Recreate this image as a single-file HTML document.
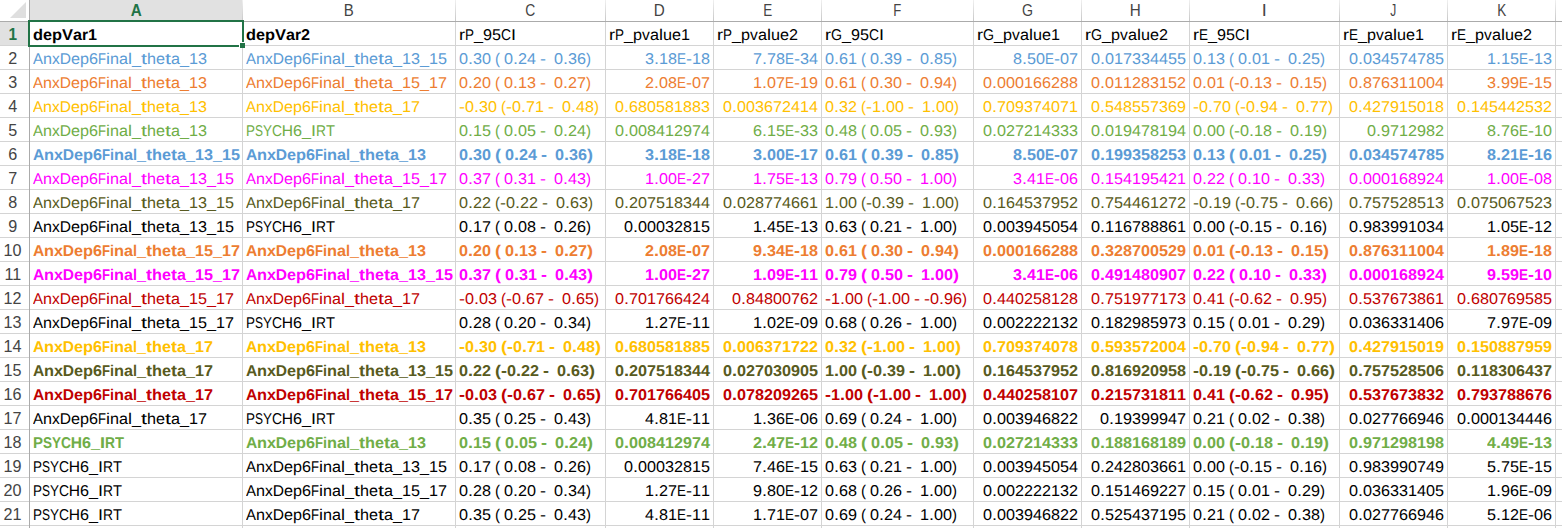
<!DOCTYPE html>
<html><head><meta charset="utf-8"><style>
html,body{margin:0;padding:0;background:#fff;}
body{width:1562px;height:528px;overflow:hidden;position:relative;font-family:"Liberation Sans",sans-serif;}
.a{position:absolute;}
.g{position:absolute;background:#D4D4D4;}
.t{position:absolute;white-space:pre;text-rendering:geometricPrecision;font-size:15.6px;line-height:28.0px;height:24px;}
.t i{position:absolute;top:0;font-style:normal;transform-origin:0 50%;}
.kblue{color:#5B9BD5}
.korange{color:#ED7D31}
.kgold{color:#FFC000}
.kgreen{color:#70AD47}
.kmag{color:#FF00FF}
.kolive{color:#585A20}
.kred{color:#C00000}
.kblack{color:#000000}
.b{font-weight:bold;}
.ch{position:absolute;top:0;height:21px;line-height:21px;text-align:center;font-size:17px;color:#444;}
.rh{position:absolute;left:0;width:25px;height:24px;line-height:26px;text-align:center;font-size:17px;color:#444;}
</style></head><body>

<div class="a" style="left:30px;top:0;width:212px;height:21px;background:#E1E1E1"></div>
<div class="a" style="left:0;top:22px;width:29px;height:23px;background:#E1E1E1"></div>
<svg class="a" style="left:0;top:0" width="29" height="21"><polygon points="26,2 26,18 10,18" fill="#DFDFDF"/></svg>
<div class="g" style="left:242px;top:22px;width:1px;height:506px"></div>
<div class="g" style="left:455px;top:22px;width:1px;height:506px"></div>
<div class="g" style="left:605px;top:22px;width:1px;height:506px"></div>
<div class="g" style="left:713px;top:22px;width:1px;height:506px"></div>
<div class="g" style="left:821px;top:22px;width:1px;height:506px"></div>
<div class="g" style="left:973px;top:22px;width:1px;height:506px"></div>
<div class="g" style="left:1081px;top:22px;width:1px;height:506px"></div>
<div class="g" style="left:1189px;top:22px;width:1px;height:506px"></div>
<div class="g" style="left:1339px;top:22px;width:1px;height:506px"></div>
<div class="g" style="left:1447px;top:22px;width:1px;height:506px"></div>
<div class="g" style="left:1555px;top:22px;width:1px;height:506px"></div>
<div class="g" style="left:30px;top:45px;width:1532px;height:1px"></div>
<div class="g" style="left:0;top:45px;width:29px;height:1px;background:#D4D4D4"></div>
<div class="g" style="left:30px;top:69px;width:1532px;height:1px"></div>
<div class="g" style="left:0;top:69px;width:29px;height:1px;background:#D4D4D4"></div>
<div class="g" style="left:30px;top:93px;width:1532px;height:1px"></div>
<div class="g" style="left:0;top:93px;width:29px;height:1px;background:#D4D4D4"></div>
<div class="g" style="left:30px;top:117px;width:1532px;height:1px"></div>
<div class="g" style="left:0;top:117px;width:29px;height:1px;background:#D4D4D4"></div>
<div class="g" style="left:30px;top:141px;width:1532px;height:1px"></div>
<div class="g" style="left:0;top:141px;width:29px;height:1px;background:#D4D4D4"></div>
<div class="g" style="left:30px;top:165px;width:1532px;height:1px"></div>
<div class="g" style="left:0;top:165px;width:29px;height:1px;background:#D4D4D4"></div>
<div class="g" style="left:30px;top:189px;width:1532px;height:1px"></div>
<div class="g" style="left:0;top:189px;width:29px;height:1px;background:#D4D4D4"></div>
<div class="g" style="left:30px;top:213px;width:1532px;height:1px"></div>
<div class="g" style="left:0;top:213px;width:29px;height:1px;background:#D4D4D4"></div>
<div class="g" style="left:30px;top:237px;width:1532px;height:1px"></div>
<div class="g" style="left:0;top:237px;width:29px;height:1px;background:#D4D4D4"></div>
<div class="g" style="left:30px;top:261px;width:1532px;height:1px"></div>
<div class="g" style="left:0;top:261px;width:29px;height:1px;background:#D4D4D4"></div>
<div class="g" style="left:30px;top:285px;width:1532px;height:1px"></div>
<div class="g" style="left:0;top:285px;width:29px;height:1px;background:#D4D4D4"></div>
<div class="g" style="left:30px;top:309px;width:1532px;height:1px"></div>
<div class="g" style="left:0;top:309px;width:29px;height:1px;background:#D4D4D4"></div>
<div class="g" style="left:30px;top:333px;width:1532px;height:1px"></div>
<div class="g" style="left:0;top:333px;width:29px;height:1px;background:#D4D4D4"></div>
<div class="g" style="left:30px;top:357px;width:1532px;height:1px"></div>
<div class="g" style="left:0;top:357px;width:29px;height:1px;background:#D4D4D4"></div>
<div class="g" style="left:30px;top:381px;width:1532px;height:1px"></div>
<div class="g" style="left:0;top:381px;width:29px;height:1px;background:#D4D4D4"></div>
<div class="g" style="left:30px;top:405px;width:1532px;height:1px"></div>
<div class="g" style="left:0;top:405px;width:29px;height:1px;background:#D4D4D4"></div>
<div class="g" style="left:30px;top:429px;width:1532px;height:1px"></div>
<div class="g" style="left:0;top:429px;width:29px;height:1px;background:#D4D4D4"></div>
<div class="g" style="left:30px;top:453px;width:1532px;height:1px"></div>
<div class="g" style="left:0;top:453px;width:29px;height:1px;background:#D4D4D4"></div>
<div class="g" style="left:30px;top:477px;width:1532px;height:1px"></div>
<div class="g" style="left:0;top:477px;width:29px;height:1px;background:#D4D4D4"></div>
<div class="g" style="left:30px;top:501px;width:1532px;height:1px"></div>
<div class="g" style="left:0;top:501px;width:29px;height:1px;background:#D4D4D4"></div>
<div class="g" style="left:30px;top:525px;width:1532px;height:1px"></div>
<div class="g" style="left:0;top:525px;width:29px;height:1px;background:#D4D4D4"></div>
<div class="a" style="left:242px;top:0;width:1px;height:21px;background:linear-gradient(#F0F0F0,#C8C8C8)"></div>
<div class="a" style="left:455px;top:0;width:1px;height:21px;background:linear-gradient(#F0F0F0,#C8C8C8)"></div>
<div class="a" style="left:605px;top:0;width:1px;height:21px;background:linear-gradient(#F0F0F0,#C8C8C8)"></div>
<div class="a" style="left:713px;top:0;width:1px;height:21px;background:linear-gradient(#F0F0F0,#C8C8C8)"></div>
<div class="a" style="left:821px;top:0;width:1px;height:21px;background:linear-gradient(#F0F0F0,#C8C8C8)"></div>
<div class="a" style="left:973px;top:0;width:1px;height:21px;background:linear-gradient(#F0F0F0,#C8C8C8)"></div>
<div class="a" style="left:1081px;top:0;width:1px;height:21px;background:linear-gradient(#F0F0F0,#C8C8C8)"></div>
<div class="a" style="left:1189px;top:0;width:1px;height:21px;background:linear-gradient(#F0F0F0,#C8C8C8)"></div>
<div class="a" style="left:1339px;top:0;width:1px;height:21px;background:linear-gradient(#F0F0F0,#C8C8C8)"></div>
<div class="a" style="left:1447px;top:0;width:1px;height:21px;background:linear-gradient(#F0F0F0,#C8C8C8)"></div>
<div class="a" style="left:1555px;top:0;width:1px;height:21px;background:linear-gradient(#F0F0F0,#C8C8C8)"></div>
<div class="a" style="left:0;top:21px;width:1562px;height:1px;background:#ABABAB"></div>
<div class="a" style="left:29px;top:0;width:1px;height:528px;background:#ABABAB"></div>
<div class="ch b" style="left:30px;width:212px;color:#217346"><span style="display:inline-block;transform:scaleX(0.896)">A</span></div>
<div class="ch" style="left:243px;width:212px"><span style="display:inline-block;transform:scaleX(0.882)">B</span></div>
<div class="ch" style="left:456px;width:149px"><span style="display:inline-block;transform:scaleX(0.815)">C</span></div>
<div class="ch" style="left:606px;width:107px"><span style="display:inline-block;transform:scaleX(0.896)">D</span></div>
<div class="ch" style="left:714px;width:107px"><span style="display:inline-block;transform:scaleX(0.794)">E</span></div>
<div class="ch" style="left:822px;width:151px"><span style="display:inline-block;transform:scaleX(0.770)">F</span></div>
<div class="ch" style="left:974px;width:107px"><span style="display:inline-block;transform:scaleX(0.832)">G</span></div>
<div class="ch" style="left:1082px;width:107px"><span style="display:inline-block;transform:scaleX(0.896)">H</span></div>
<div class="ch" style="left:1190px;width:149px"><span style="display:inline-block;transform:scaleX(1.059)">I</span></div>
<div class="ch" style="left:1340px;width:107px"><span style="display:inline-block;transform:scaleX(0.706)">J</span></div>
<div class="ch" style="left:1448px;width:107px"><span style="display:inline-block;transform:scaleX(0.794)">K</span></div>
<div class="rh b" style="top:22px;color:#217346"><span style="display:inline-block;transform:scaleX(0.9)">1</span></div>
<div class="rh" style="top:46px"><span style="display:inline-block;transform:scaleX(0.95)">2</span></div>
<div class="rh" style="top:70px"><span style="display:inline-block;transform:scaleX(0.95)">3</span></div>
<div class="rh" style="top:94px"><span style="display:inline-block;transform:scaleX(0.95)">4</span></div>
<div class="rh" style="top:118px"><span style="display:inline-block;transform:scaleX(0.95)">5</span></div>
<div class="rh" style="top:142px"><span style="display:inline-block;transform:scaleX(0.95)">6</span></div>
<div class="rh" style="top:166px"><span style="display:inline-block;transform:scaleX(0.95)">7</span></div>
<div class="rh" style="top:190px"><span style="display:inline-block;transform:scaleX(0.95)">8</span></div>
<div class="rh" style="top:214px"><span style="display:inline-block;transform:scaleX(0.95)">9</span></div>
<div class="rh" style="top:238px"><span style="display:inline-block;transform:scaleX(0.95)">10</span></div>
<div class="rh" style="top:262px"><span style="display:inline-block;transform:scaleX(0.95)">11</span></div>
<div class="rh" style="top:286px"><span style="display:inline-block;transform:scaleX(0.95)">12</span></div>
<div class="rh" style="top:310px"><span style="display:inline-block;transform:scaleX(0.95)">13</span></div>
<div class="rh" style="top:334px"><span style="display:inline-block;transform:scaleX(0.95)">14</span></div>
<div class="rh" style="top:358px"><span style="display:inline-block;transform:scaleX(0.95)">15</span></div>
<div class="rh" style="top:382px"><span style="display:inline-block;transform:scaleX(0.95)">16</span></div>
<div class="rh" style="top:406px"><span style="display:inline-block;transform:scaleX(0.95)">17</span></div>
<div class="rh" style="top:430px"><span style="display:inline-block;transform:scaleX(0.95)">18</span></div>
<div class="rh" style="top:454px"><span style="display:inline-block;transform:scaleX(0.95)">19</span></div>
<div class="rh" style="top:478px"><span style="display:inline-block;transform:scaleX(0.95)">20</span></div>
<div class="rh" style="top:502px"><span style="display:inline-block;transform:scaleX(0.95)">21</span></div>
<div class="t kblack b" style="left:33px;top:22px"><i style="left:0px;transform:scaleX(1.049)">d</i><i style="left:10px;transform:scaleX(1.037)">e</i><i style="left:19px;transform:scaleX(1.049)">p</i><i style="left:29px;transform:scaleX(1.057)">V</i><i style="left:40px;transform:scaleX(1.037)">a</i><i style="left:48.96px">r</i><i style="left:55px;transform:scaleX(1.037)">1</i></div>
<div class="t kblack b" style="left:246px;top:22px"><i style="left:0px;transform:scaleX(1.049)">d</i><i style="left:10px;transform:scaleX(1.037)">e</i><i style="left:19px;transform:scaleX(1.049)">p</i><i style="left:29px;transform:scaleX(1.057)">V</i><i style="left:40px;transform:scaleX(1.037)">a</i><i style="left:48.96px">r</i><i style="left:55px;transform:scaleX(1.037)">2</i></div>
<div class="t kblack" style="left:459px;top:22px"><i style="left:0px;transform:scaleX(1.155)">r</i><i style="left:6px;transform:scaleX(0.865)">P</i><i style="left:15px;transform:scaleX(1.037)">_</i><i style="left:24px;transform:scaleX(1.037)">9</i><i style="left:33px;transform:scaleX(1.037)">5</i><i style="left:42px;transform:scaleX(0.888)">C</i><i style="left:52px;transform:scaleX(1.154)">I</i></div>
<div class="t kblack" style="left:609px;top:22px"><i style="left:0px;transform:scaleX(1.155)">r</i><i style="left:6px;transform:scaleX(0.865)">P</i><i style="left:15px;transform:scaleX(1.037)">_</i><i style="left:24px;transform:scaleX(1.037)">p</i><i style="left:33.10px">v</i><i style="left:41px;transform:scaleX(1.037)">a</i><i style="left:50px;transform:scaleX(1.154)">l</i><i style="left:54px;transform:scaleX(1.037)">u</i><i style="left:63px;transform:scaleX(1.037)">e</i><i style="left:72px;transform:scaleX(1.037)">1</i></div>
<div class="t kblack" style="left:717px;top:22px"><i style="left:0px;transform:scaleX(1.155)">r</i><i style="left:6px;transform:scaleX(0.865)">P</i><i style="left:15px;transform:scaleX(1.037)">_</i><i style="left:24px;transform:scaleX(1.037)">p</i><i style="left:33.10px">v</i><i style="left:41px;transform:scaleX(1.037)">a</i><i style="left:50px;transform:scaleX(1.154)">l</i><i style="left:54px;transform:scaleX(1.037)">u</i><i style="left:63px;transform:scaleX(1.037)">e</i><i style="left:72px;transform:scaleX(1.037)">2</i></div>
<div class="t kblack" style="left:825px;top:22px"><i style="left:0px;transform:scaleX(1.155)">r</i><i style="left:6px;transform:scaleX(0.907)">G</i><i style="left:17px;transform:scaleX(1.037)">_</i><i style="left:26px;transform:scaleX(1.037)">9</i><i style="left:35px;transform:scaleX(1.037)">5</i><i style="left:44px;transform:scaleX(0.888)">C</i><i style="left:54px;transform:scaleX(1.154)">I</i></div>
<div class="t kblack" style="left:977px;top:22px"><i style="left:0px;transform:scaleX(1.155)">r</i><i style="left:6px;transform:scaleX(0.907)">G</i><i style="left:17px;transform:scaleX(1.037)">_</i><i style="left:26px;transform:scaleX(1.037)">p</i><i style="left:35.10px">v</i><i style="left:43px;transform:scaleX(1.037)">a</i><i style="left:52px;transform:scaleX(1.154)">l</i><i style="left:56px;transform:scaleX(1.037)">u</i><i style="left:65px;transform:scaleX(1.037)">e</i><i style="left:74px;transform:scaleX(1.037)">1</i></div>
<div class="t kblack" style="left:1085px;top:22px"><i style="left:0px;transform:scaleX(1.155)">r</i><i style="left:6px;transform:scaleX(0.907)">G</i><i style="left:17px;transform:scaleX(1.037)">_</i><i style="left:26px;transform:scaleX(1.037)">p</i><i style="left:35.10px">v</i><i style="left:43px;transform:scaleX(1.037)">a</i><i style="left:52px;transform:scaleX(1.154)">l</i><i style="left:56px;transform:scaleX(1.037)">u</i><i style="left:65px;transform:scaleX(1.037)">e</i><i style="left:74px;transform:scaleX(1.037)">2</i></div>
<div class="t kblack" style="left:1193px;top:22px"><i style="left:0px;transform:scaleX(1.155)">r</i><i style="left:6px;transform:scaleX(0.865)">E</i><i style="left:15px;transform:scaleX(1.037)">_</i><i style="left:24px;transform:scaleX(1.037)">9</i><i style="left:33px;transform:scaleX(1.037)">5</i><i style="left:42px;transform:scaleX(0.888)">C</i><i style="left:52px;transform:scaleX(1.154)">I</i></div>
<div class="t kblack" style="left:1343px;top:22px"><i style="left:0px;transform:scaleX(1.155)">r</i><i style="left:6px;transform:scaleX(0.865)">E</i><i style="left:15px;transform:scaleX(1.037)">_</i><i style="left:24px;transform:scaleX(1.037)">p</i><i style="left:33.10px">v</i><i style="left:41px;transform:scaleX(1.037)">a</i><i style="left:50px;transform:scaleX(1.154)">l</i><i style="left:54px;transform:scaleX(1.037)">u</i><i style="left:63px;transform:scaleX(1.037)">e</i><i style="left:72px;transform:scaleX(1.037)">1</i></div>
<div class="t kblack" style="left:1451px;top:22px"><i style="left:0px;transform:scaleX(1.155)">r</i><i style="left:6px;transform:scaleX(0.865)">E</i><i style="left:15px;transform:scaleX(1.037)">_</i><i style="left:24px;transform:scaleX(1.037)">p</i><i style="left:33.10px">v</i><i style="left:41px;transform:scaleX(1.037)">a</i><i style="left:50px;transform:scaleX(1.154)">l</i><i style="left:54px;transform:scaleX(1.037)">u</i><i style="left:63px;transform:scaleX(1.037)">e</i><i style="left:72px;transform:scaleX(1.037)">2</i></div>
<div class="t kblue" style="left:33px;top:46px"><i style="left:0px;transform:scaleX(0.961)">A</i><i style="left:10px;transform:scaleX(1.037)">n</i><i style="left:19.10px">x</i><i style="left:26.87px">D</i><i style="left:38px;transform:scaleX(1.037)">e</i><i style="left:47px;transform:scaleX(1.037)">p</i><i style="left:56px;transform:scaleX(1.037)">6</i><i style="left:65px;transform:scaleX(0.840)">F</i><i style="left:73px;transform:scaleX(1.154)">i</i><i style="left:77px;transform:scaleX(1.037)">n</i><i style="left:86px;transform:scaleX(1.037)">a</i><i style="left:95px;transform:scaleX(1.154)">l</i><i style="left:99px;transform:scaleX(1.037)">_</i><i style="left:108px;transform:scaleX(1.384)">t</i><i style="left:114px;transform:scaleX(1.037)">h</i><i style="left:123px;transform:scaleX(1.037)">e</i><i style="left:132px;transform:scaleX(1.384)">t</i><i style="left:138px;transform:scaleX(1.037)">a</i><i style="left:147px;transform:scaleX(1.037)">_</i><i style="left:156px;transform:scaleX(1.037)">1</i><i style="left:165px;transform:scaleX(1.037)">3</i></div>
<div class="t kblue" style="left:246px;top:46px"><i style="left:0px;transform:scaleX(0.961)">A</i><i style="left:10px;transform:scaleX(1.037)">n</i><i style="left:19.10px">x</i><i style="left:26.87px">D</i><i style="left:38px;transform:scaleX(1.037)">e</i><i style="left:47px;transform:scaleX(1.037)">p</i><i style="left:56px;transform:scaleX(1.037)">6</i><i style="left:65px;transform:scaleX(0.840)">F</i><i style="left:73px;transform:scaleX(1.154)">i</i><i style="left:77px;transform:scaleX(1.037)">n</i><i style="left:86px;transform:scaleX(1.037)">a</i><i style="left:95px;transform:scaleX(1.154)">l</i><i style="left:99px;transform:scaleX(1.037)">_</i><i style="left:108px;transform:scaleX(1.384)">t</i><i style="left:114px;transform:scaleX(1.037)">h</i><i style="left:123px;transform:scaleX(1.037)">e</i><i style="left:132px;transform:scaleX(1.384)">t</i><i style="left:138px;transform:scaleX(1.037)">a</i><i style="left:147px;transform:scaleX(1.037)">_</i><i style="left:156px;transform:scaleX(1.037)">1</i><i style="left:165px;transform:scaleX(1.037)">3</i><i style="left:174px;transform:scaleX(1.037)">_</i><i style="left:183px;transform:scaleX(1.037)">1</i><i style="left:192px;transform:scaleX(1.037)">5</i></div>
<div class="t kblue" style="left:459px;top:46px"><i style="left:0px;transform:scaleX(1.037)">0</i><i style="left:9px;transform:scaleX(1.154)">.</i><i style="left:14px;transform:scaleX(1.037)">3</i><i style="left:23px;transform:scaleX(1.037)">0</i><i style="left:36px;transform:scaleX(0.962)">(</i><i style="left:45px;transform:scaleX(1.037)">0</i><i style="left:54px;transform:scaleX(1.154)">.</i><i style="left:59px;transform:scaleX(1.037)">2</i><i style="left:68px;transform:scaleX(1.037)">4</i><i style="left:81px;transform:scaleX(1.155)">-</i><i style="left:95px;transform:scaleX(1.037)">0</i><i style="left:104px;transform:scaleX(1.154)">.</i><i style="left:109px;transform:scaleX(1.037)">3</i><i style="left:118px;transform:scaleX(1.037)">6</i><i style="left:127px;transform:scaleX(0.962)">)</i></div>
<div class="t kblue" style="left:645px;top:46px"><i style="left:0px;transform:scaleX(1.037)">3</i><i style="left:9px;transform:scaleX(1.154)">.</i><i style="left:14px;transform:scaleX(1.037)">1</i><i style="left:23px;transform:scaleX(1.037)">8</i><i style="left:32px;transform:scaleX(0.865)">E</i><i style="left:41px;transform:scaleX(1.155)">-</i><i style="left:47px;transform:scaleX(1.037)">1</i><i style="left:56px;transform:scaleX(1.037)">8</i></div>
<div class="t kblue" style="left:753px;top:46px"><i style="left:0px;transform:scaleX(1.037)">7</i><i style="left:9px;transform:scaleX(1.154)">.</i><i style="left:14px;transform:scaleX(1.037)">7</i><i style="left:23px;transform:scaleX(1.037)">8</i><i style="left:32px;transform:scaleX(0.865)">E</i><i style="left:41px;transform:scaleX(1.155)">-</i><i style="left:47px;transform:scaleX(1.037)">3</i><i style="left:56px;transform:scaleX(1.037)">4</i></div>
<div class="t kblue" style="left:825px;top:46px"><i style="left:0px;transform:scaleX(1.037)">0</i><i style="left:9px;transform:scaleX(1.154)">.</i><i style="left:14px;transform:scaleX(1.037)">6</i><i style="left:23px;transform:scaleX(1.037)">1</i><i style="left:36px;transform:scaleX(0.962)">(</i><i style="left:45px;transform:scaleX(1.037)">0</i><i style="left:54px;transform:scaleX(1.154)">.</i><i style="left:59px;transform:scaleX(1.037)">3</i><i style="left:68px;transform:scaleX(1.037)">9</i><i style="left:81px;transform:scaleX(1.155)">-</i><i style="left:95px;transform:scaleX(1.037)">0</i><i style="left:104px;transform:scaleX(1.154)">.</i><i style="left:109px;transform:scaleX(1.037)">8</i><i style="left:118px;transform:scaleX(1.037)">5</i><i style="left:127px;transform:scaleX(0.962)">)</i></div>
<div class="t kblue" style="left:1013px;top:46px"><i style="left:0px;transform:scaleX(1.037)">8</i><i style="left:9px;transform:scaleX(1.154)">.</i><i style="left:14px;transform:scaleX(1.037)">5</i><i style="left:23px;transform:scaleX(1.037)">0</i><i style="left:32px;transform:scaleX(0.865)">E</i><i style="left:41px;transform:scaleX(1.155)">-</i><i style="left:47px;transform:scaleX(1.037)">0</i><i style="left:56px;transform:scaleX(1.037)">7</i></div>
<div class="t kblue" style="left:1091px;top:46px"><i style="left:0px;transform:scaleX(1.037)">0</i><i style="left:9px;transform:scaleX(1.154)">.</i><i style="left:14px;transform:scaleX(1.037)">0</i><i style="left:23px;transform:scaleX(1.037)">1</i><i style="left:32px;transform:scaleX(1.037)">7</i><i style="left:41px;transform:scaleX(1.037)">3</i><i style="left:50px;transform:scaleX(1.037)">3</i><i style="left:59px;transform:scaleX(1.037)">4</i><i style="left:68px;transform:scaleX(1.037)">4</i><i style="left:77px;transform:scaleX(1.037)">5</i><i style="left:86px;transform:scaleX(1.037)">5</i></div>
<div class="t kblue" style="left:1193px;top:46px"><i style="left:0px;transform:scaleX(1.037)">0</i><i style="left:9px;transform:scaleX(1.154)">.</i><i style="left:14px;transform:scaleX(1.037)">1</i><i style="left:23px;transform:scaleX(1.037)">3</i><i style="left:36px;transform:scaleX(0.962)">(</i><i style="left:45px;transform:scaleX(1.037)">0</i><i style="left:54px;transform:scaleX(1.154)">.</i><i style="left:59px;transform:scaleX(1.037)">0</i><i style="left:68px;transform:scaleX(1.037)">1</i><i style="left:81px;transform:scaleX(1.155)">-</i><i style="left:95px;transform:scaleX(1.037)">0</i><i style="left:104px;transform:scaleX(1.154)">.</i><i style="left:109px;transform:scaleX(1.037)">2</i><i style="left:118px;transform:scaleX(1.037)">5</i><i style="left:127px;transform:scaleX(0.962)">)</i></div>
<div class="t kblue" style="left:1349px;top:46px"><i style="left:0px;transform:scaleX(1.037)">0</i><i style="left:9px;transform:scaleX(1.154)">.</i><i style="left:14px;transform:scaleX(1.037)">0</i><i style="left:23px;transform:scaleX(1.037)">3</i><i style="left:32px;transform:scaleX(1.037)">4</i><i style="left:41px;transform:scaleX(1.037)">5</i><i style="left:50px;transform:scaleX(1.037)">7</i><i style="left:59px;transform:scaleX(1.037)">4</i><i style="left:68px;transform:scaleX(1.037)">7</i><i style="left:77px;transform:scaleX(1.037)">8</i><i style="left:86px;transform:scaleX(1.037)">5</i></div>
<div class="t kblue" style="left:1487px;top:46px"><i style="left:0px;transform:scaleX(1.037)">1</i><i style="left:9px;transform:scaleX(1.154)">.</i><i style="left:14px;transform:scaleX(1.037)">1</i><i style="left:23px;transform:scaleX(1.037)">5</i><i style="left:32px;transform:scaleX(0.865)">E</i><i style="left:41px;transform:scaleX(1.155)">-</i><i style="left:47px;transform:scaleX(1.037)">1</i><i style="left:56px;transform:scaleX(1.037)">3</i></div>
<div class="t korange" style="left:33px;top:70px"><i style="left:0px;transform:scaleX(0.961)">A</i><i style="left:10px;transform:scaleX(1.037)">n</i><i style="left:19.10px">x</i><i style="left:26.87px">D</i><i style="left:38px;transform:scaleX(1.037)">e</i><i style="left:47px;transform:scaleX(1.037)">p</i><i style="left:56px;transform:scaleX(1.037)">6</i><i style="left:65px;transform:scaleX(0.840)">F</i><i style="left:73px;transform:scaleX(1.154)">i</i><i style="left:77px;transform:scaleX(1.037)">n</i><i style="left:86px;transform:scaleX(1.037)">a</i><i style="left:95px;transform:scaleX(1.154)">l</i><i style="left:99px;transform:scaleX(1.037)">_</i><i style="left:108px;transform:scaleX(1.384)">t</i><i style="left:114px;transform:scaleX(1.037)">h</i><i style="left:123px;transform:scaleX(1.037)">e</i><i style="left:132px;transform:scaleX(1.384)">t</i><i style="left:138px;transform:scaleX(1.037)">a</i><i style="left:147px;transform:scaleX(1.037)">_</i><i style="left:156px;transform:scaleX(1.037)">1</i><i style="left:165px;transform:scaleX(1.037)">3</i></div>
<div class="t korange" style="left:246px;top:70px"><i style="left:0px;transform:scaleX(0.961)">A</i><i style="left:10px;transform:scaleX(1.037)">n</i><i style="left:19.10px">x</i><i style="left:26.87px">D</i><i style="left:38px;transform:scaleX(1.037)">e</i><i style="left:47px;transform:scaleX(1.037)">p</i><i style="left:56px;transform:scaleX(1.037)">6</i><i style="left:65px;transform:scaleX(0.840)">F</i><i style="left:73px;transform:scaleX(1.154)">i</i><i style="left:77px;transform:scaleX(1.037)">n</i><i style="left:86px;transform:scaleX(1.037)">a</i><i style="left:95px;transform:scaleX(1.154)">l</i><i style="left:99px;transform:scaleX(1.037)">_</i><i style="left:108px;transform:scaleX(1.384)">t</i><i style="left:114px;transform:scaleX(1.037)">h</i><i style="left:123px;transform:scaleX(1.037)">e</i><i style="left:132px;transform:scaleX(1.384)">t</i><i style="left:138px;transform:scaleX(1.037)">a</i><i style="left:147px;transform:scaleX(1.037)">_</i><i style="left:156px;transform:scaleX(1.037)">1</i><i style="left:165px;transform:scaleX(1.037)">5</i><i style="left:174px;transform:scaleX(1.037)">_</i><i style="left:183px;transform:scaleX(1.037)">1</i><i style="left:192px;transform:scaleX(1.037)">7</i></div>
<div class="t korange" style="left:459px;top:70px"><i style="left:0px;transform:scaleX(1.037)">0</i><i style="left:9px;transform:scaleX(1.154)">.</i><i style="left:14px;transform:scaleX(1.037)">2</i><i style="left:23px;transform:scaleX(1.037)">0</i><i style="left:36px;transform:scaleX(0.962)">(</i><i style="left:45px;transform:scaleX(1.037)">0</i><i style="left:54px;transform:scaleX(1.154)">.</i><i style="left:59px;transform:scaleX(1.037)">1</i><i style="left:68px;transform:scaleX(1.037)">3</i><i style="left:81px;transform:scaleX(1.155)">-</i><i style="left:95px;transform:scaleX(1.037)">0</i><i style="left:104px;transform:scaleX(1.154)">.</i><i style="left:109px;transform:scaleX(1.037)">2</i><i style="left:118px;transform:scaleX(1.037)">7</i><i style="left:127px;transform:scaleX(0.962)">)</i></div>
<div class="t korange" style="left:645px;top:70px"><i style="left:0px;transform:scaleX(1.037)">2</i><i style="left:9px;transform:scaleX(1.154)">.</i><i style="left:14px;transform:scaleX(1.037)">0</i><i style="left:23px;transform:scaleX(1.037)">8</i><i style="left:32px;transform:scaleX(0.865)">E</i><i style="left:41px;transform:scaleX(1.155)">-</i><i style="left:47px;transform:scaleX(1.037)">0</i><i style="left:56px;transform:scaleX(1.037)">7</i></div>
<div class="t korange" style="left:753px;top:70px"><i style="left:0px;transform:scaleX(1.037)">1</i><i style="left:9px;transform:scaleX(1.154)">.</i><i style="left:14px;transform:scaleX(1.037)">0</i><i style="left:23px;transform:scaleX(1.037)">7</i><i style="left:32px;transform:scaleX(0.865)">E</i><i style="left:41px;transform:scaleX(1.155)">-</i><i style="left:47px;transform:scaleX(1.037)">1</i><i style="left:56px;transform:scaleX(1.037)">9</i></div>
<div class="t korange" style="left:825px;top:70px"><i style="left:0px;transform:scaleX(1.037)">0</i><i style="left:9px;transform:scaleX(1.154)">.</i><i style="left:14px;transform:scaleX(1.037)">6</i><i style="left:23px;transform:scaleX(1.037)">1</i><i style="left:36px;transform:scaleX(0.962)">(</i><i style="left:45px;transform:scaleX(1.037)">0</i><i style="left:54px;transform:scaleX(1.154)">.</i><i style="left:59px;transform:scaleX(1.037)">3</i><i style="left:68px;transform:scaleX(1.037)">0</i><i style="left:81px;transform:scaleX(1.155)">-</i><i style="left:95px;transform:scaleX(1.037)">0</i><i style="left:104px;transform:scaleX(1.154)">.</i><i style="left:109px;transform:scaleX(1.037)">9</i><i style="left:118px;transform:scaleX(1.037)">4</i><i style="left:127px;transform:scaleX(0.962)">)</i></div>
<div class="t korange" style="left:983px;top:70px"><i style="left:0px;transform:scaleX(1.037)">0</i><i style="left:9px;transform:scaleX(1.154)">.</i><i style="left:14px;transform:scaleX(1.037)">0</i><i style="left:23px;transform:scaleX(1.037)">0</i><i style="left:32px;transform:scaleX(1.037)">0</i><i style="left:41px;transform:scaleX(1.037)">1</i><i style="left:50px;transform:scaleX(1.037)">6</i><i style="left:59px;transform:scaleX(1.037)">6</i><i style="left:68px;transform:scaleX(1.037)">2</i><i style="left:77px;transform:scaleX(1.037)">8</i><i style="left:86px;transform:scaleX(1.037)">8</i></div>
<div class="t korange" style="left:1091px;top:70px"><i style="left:0px;transform:scaleX(1.037)">0</i><i style="left:9px;transform:scaleX(1.154)">.</i><i style="left:14px;transform:scaleX(1.037)">0</i><i style="left:23px;transform:scaleX(1.037)">1</i><i style="left:32px;transform:scaleX(1.037)">1</i><i style="left:41px;transform:scaleX(1.037)">2</i><i style="left:50px;transform:scaleX(1.037)">8</i><i style="left:59px;transform:scaleX(1.037)">3</i><i style="left:68px;transform:scaleX(1.037)">1</i><i style="left:77px;transform:scaleX(1.037)">5</i><i style="left:86px;transform:scaleX(1.037)">2</i></div>
<div class="t korange" style="left:1193px;top:70px"><i style="left:0px;transform:scaleX(1.037)">0</i><i style="left:9px;transform:scaleX(1.154)">.</i><i style="left:14px;transform:scaleX(1.037)">0</i><i style="left:23px;transform:scaleX(1.037)">1</i><i style="left:36px;transform:scaleX(0.962)">(</i><i style="left:41px;transform:scaleX(1.155)">-</i><i style="left:47px;transform:scaleX(1.037)">0</i><i style="left:56px;transform:scaleX(1.154)">.</i><i style="left:61px;transform:scaleX(1.037)">1</i><i style="left:70px;transform:scaleX(1.037)">3</i><i style="left:83px;transform:scaleX(1.155)">-</i><i style="left:97px;transform:scaleX(1.037)">0</i><i style="left:106px;transform:scaleX(1.154)">.</i><i style="left:111px;transform:scaleX(1.037)">1</i><i style="left:120px;transform:scaleX(1.037)">5</i><i style="left:129px;transform:scaleX(0.962)">)</i></div>
<div class="t korange" style="left:1349px;top:70px"><i style="left:0px;transform:scaleX(1.037)">0</i><i style="left:9px;transform:scaleX(1.154)">.</i><i style="left:14px;transform:scaleX(1.037)">8</i><i style="left:23px;transform:scaleX(1.037)">7</i><i style="left:32px;transform:scaleX(1.037)">6</i><i style="left:41px;transform:scaleX(1.037)">3</i><i style="left:50px;transform:scaleX(1.037)">1</i><i style="left:59px;transform:scaleX(1.037)">1</i><i style="left:68px;transform:scaleX(1.037)">0</i><i style="left:77px;transform:scaleX(1.037)">0</i><i style="left:86px;transform:scaleX(1.037)">4</i></div>
<div class="t korange" style="left:1487px;top:70px"><i style="left:0px;transform:scaleX(1.037)">3</i><i style="left:9px;transform:scaleX(1.154)">.</i><i style="left:14px;transform:scaleX(1.037)">9</i><i style="left:23px;transform:scaleX(1.037)">9</i><i style="left:32px;transform:scaleX(0.865)">E</i><i style="left:41px;transform:scaleX(1.155)">-</i><i style="left:47px;transform:scaleX(1.037)">1</i><i style="left:56px;transform:scaleX(1.037)">5</i></div>
<div class="t kgold" style="left:33px;top:94px"><i style="left:0px;transform:scaleX(0.961)">A</i><i style="left:10px;transform:scaleX(1.037)">n</i><i style="left:19.10px">x</i><i style="left:26.87px">D</i><i style="left:38px;transform:scaleX(1.037)">e</i><i style="left:47px;transform:scaleX(1.037)">p</i><i style="left:56px;transform:scaleX(1.037)">6</i><i style="left:65px;transform:scaleX(0.840)">F</i><i style="left:73px;transform:scaleX(1.154)">i</i><i style="left:77px;transform:scaleX(1.037)">n</i><i style="left:86px;transform:scaleX(1.037)">a</i><i style="left:95px;transform:scaleX(1.154)">l</i><i style="left:99px;transform:scaleX(1.037)">_</i><i style="left:108px;transform:scaleX(1.384)">t</i><i style="left:114px;transform:scaleX(1.037)">h</i><i style="left:123px;transform:scaleX(1.037)">e</i><i style="left:132px;transform:scaleX(1.384)">t</i><i style="left:138px;transform:scaleX(1.037)">a</i><i style="left:147px;transform:scaleX(1.037)">_</i><i style="left:156px;transform:scaleX(1.037)">1</i><i style="left:165px;transform:scaleX(1.037)">3</i></div>
<div class="t kgold" style="left:246px;top:94px"><i style="left:0px;transform:scaleX(0.961)">A</i><i style="left:10px;transform:scaleX(1.037)">n</i><i style="left:19.10px">x</i><i style="left:26.87px">D</i><i style="left:38px;transform:scaleX(1.037)">e</i><i style="left:47px;transform:scaleX(1.037)">p</i><i style="left:56px;transform:scaleX(1.037)">6</i><i style="left:65px;transform:scaleX(0.840)">F</i><i style="left:73px;transform:scaleX(1.154)">i</i><i style="left:77px;transform:scaleX(1.037)">n</i><i style="left:86px;transform:scaleX(1.037)">a</i><i style="left:95px;transform:scaleX(1.154)">l</i><i style="left:99px;transform:scaleX(1.037)">_</i><i style="left:108px;transform:scaleX(1.384)">t</i><i style="left:114px;transform:scaleX(1.037)">h</i><i style="left:123px;transform:scaleX(1.037)">e</i><i style="left:132px;transform:scaleX(1.384)">t</i><i style="left:138px;transform:scaleX(1.037)">a</i><i style="left:147px;transform:scaleX(1.037)">_</i><i style="left:156px;transform:scaleX(1.037)">1</i><i style="left:165px;transform:scaleX(1.037)">7</i></div>
<div class="t kgold" style="left:459px;top:94px"><i style="left:0px;transform:scaleX(1.155)">-</i><i style="left:6px;transform:scaleX(1.037)">0</i><i style="left:15px;transform:scaleX(1.154)">.</i><i style="left:20px;transform:scaleX(1.037)">3</i><i style="left:29px;transform:scaleX(1.037)">0</i><i style="left:42px;transform:scaleX(0.962)">(</i><i style="left:47px;transform:scaleX(1.155)">-</i><i style="left:53px;transform:scaleX(1.037)">0</i><i style="left:62px;transform:scaleX(1.154)">.</i><i style="left:67px;transform:scaleX(1.037)">7</i><i style="left:76px;transform:scaleX(1.037)">1</i><i style="left:89px;transform:scaleX(1.155)">-</i><i style="left:103px;transform:scaleX(1.037)">0</i><i style="left:112px;transform:scaleX(1.154)">.</i><i style="left:117px;transform:scaleX(1.037)">4</i><i style="left:126px;transform:scaleX(1.037)">8</i><i style="left:135px;transform:scaleX(0.962)">)</i></div>
<div class="t kgold" style="left:615px;top:94px"><i style="left:0px;transform:scaleX(1.037)">0</i><i style="left:9px;transform:scaleX(1.154)">.</i><i style="left:14px;transform:scaleX(1.037)">6</i><i style="left:23px;transform:scaleX(1.037)">8</i><i style="left:32px;transform:scaleX(1.037)">0</i><i style="left:41px;transform:scaleX(1.037)">5</i><i style="left:50px;transform:scaleX(1.037)">8</i><i style="left:59px;transform:scaleX(1.037)">1</i><i style="left:68px;transform:scaleX(1.037)">8</i><i style="left:77px;transform:scaleX(1.037)">8</i><i style="left:86px;transform:scaleX(1.037)">3</i></div>
<div class="t kgold" style="left:723px;top:94px"><i style="left:0px;transform:scaleX(1.037)">0</i><i style="left:9px;transform:scaleX(1.154)">.</i><i style="left:14px;transform:scaleX(1.037)">0</i><i style="left:23px;transform:scaleX(1.037)">0</i><i style="left:32px;transform:scaleX(1.037)">3</i><i style="left:41px;transform:scaleX(1.037)">6</i><i style="left:50px;transform:scaleX(1.037)">7</i><i style="left:59px;transform:scaleX(1.037)">2</i><i style="left:68px;transform:scaleX(1.037)">4</i><i style="left:77px;transform:scaleX(1.037)">1</i><i style="left:86px;transform:scaleX(1.037)">4</i></div>
<div class="t kgold" style="left:825px;top:94px"><i style="left:0px;transform:scaleX(1.037)">0</i><i style="left:9px;transform:scaleX(1.154)">.</i><i style="left:14px;transform:scaleX(1.037)">3</i><i style="left:23px;transform:scaleX(1.037)">2</i><i style="left:36px;transform:scaleX(0.962)">(</i><i style="left:41px;transform:scaleX(1.155)">-</i><i style="left:47px;transform:scaleX(1.037)">1</i><i style="left:56px;transform:scaleX(1.154)">.</i><i style="left:61px;transform:scaleX(1.037)">0</i><i style="left:70px;transform:scaleX(1.037)">0</i><i style="left:83px;transform:scaleX(1.155)">-</i><i style="left:97px;transform:scaleX(1.037)">1</i><i style="left:106px;transform:scaleX(1.154)">.</i><i style="left:111px;transform:scaleX(1.037)">0</i><i style="left:120px;transform:scaleX(1.037)">0</i><i style="left:129px;transform:scaleX(0.962)">)</i></div>
<div class="t kgold" style="left:983px;top:94px"><i style="left:0px;transform:scaleX(1.037)">0</i><i style="left:9px;transform:scaleX(1.154)">.</i><i style="left:14px;transform:scaleX(1.037)">7</i><i style="left:23px;transform:scaleX(1.037)">0</i><i style="left:32px;transform:scaleX(1.037)">9</i><i style="left:41px;transform:scaleX(1.037)">3</i><i style="left:50px;transform:scaleX(1.037)">7</i><i style="left:59px;transform:scaleX(1.037)">4</i><i style="left:68px;transform:scaleX(1.037)">0</i><i style="left:77px;transform:scaleX(1.037)">7</i><i style="left:86px;transform:scaleX(1.037)">1</i></div>
<div class="t kgold" style="left:1091px;top:94px"><i style="left:0px;transform:scaleX(1.037)">0</i><i style="left:9px;transform:scaleX(1.154)">.</i><i style="left:14px;transform:scaleX(1.037)">5</i><i style="left:23px;transform:scaleX(1.037)">4</i><i style="left:32px;transform:scaleX(1.037)">8</i><i style="left:41px;transform:scaleX(1.037)">5</i><i style="left:50px;transform:scaleX(1.037)">5</i><i style="left:59px;transform:scaleX(1.037)">7</i><i style="left:68px;transform:scaleX(1.037)">3</i><i style="left:77px;transform:scaleX(1.037)">6</i><i style="left:86px;transform:scaleX(1.037)">9</i></div>
<div class="t kgold" style="left:1193px;top:94px"><i style="left:0px;transform:scaleX(1.155)">-</i><i style="left:6px;transform:scaleX(1.037)">0</i><i style="left:15px;transform:scaleX(1.154)">.</i><i style="left:20px;transform:scaleX(1.037)">7</i><i style="left:29px;transform:scaleX(1.037)">0</i><i style="left:42px;transform:scaleX(0.962)">(</i><i style="left:47px;transform:scaleX(1.155)">-</i><i style="left:53px;transform:scaleX(1.037)">0</i><i style="left:62px;transform:scaleX(1.154)">.</i><i style="left:67px;transform:scaleX(1.037)">9</i><i style="left:76px;transform:scaleX(1.037)">4</i><i style="left:89px;transform:scaleX(1.155)">-</i><i style="left:103px;transform:scaleX(1.037)">0</i><i style="left:112px;transform:scaleX(1.154)">.</i><i style="left:117px;transform:scaleX(1.037)">7</i><i style="left:126px;transform:scaleX(1.037)">7</i><i style="left:135px;transform:scaleX(0.962)">)</i></div>
<div class="t kgold" style="left:1349px;top:94px"><i style="left:0px;transform:scaleX(1.037)">0</i><i style="left:9px;transform:scaleX(1.154)">.</i><i style="left:14px;transform:scaleX(1.037)">4</i><i style="left:23px;transform:scaleX(1.037)">2</i><i style="left:32px;transform:scaleX(1.037)">7</i><i style="left:41px;transform:scaleX(1.037)">9</i><i style="left:50px;transform:scaleX(1.037)">1</i><i style="left:59px;transform:scaleX(1.037)">5</i><i style="left:68px;transform:scaleX(1.037)">0</i><i style="left:77px;transform:scaleX(1.037)">1</i><i style="left:86px;transform:scaleX(1.037)">8</i></div>
<div class="t kgold" style="left:1457px;top:94px"><i style="left:0px;transform:scaleX(1.037)">0</i><i style="left:9px;transform:scaleX(1.154)">.</i><i style="left:14px;transform:scaleX(1.037)">1</i><i style="left:23px;transform:scaleX(1.037)">4</i><i style="left:32px;transform:scaleX(1.037)">5</i><i style="left:41px;transform:scaleX(1.037)">4</i><i style="left:50px;transform:scaleX(1.037)">4</i><i style="left:59px;transform:scaleX(1.037)">2</i><i style="left:68px;transform:scaleX(1.037)">5</i><i style="left:77px;transform:scaleX(1.037)">3</i><i style="left:86px;transform:scaleX(1.037)">2</i></div>
<div class="t kgreen" style="left:33px;top:118px"><i style="left:0px;transform:scaleX(0.961)">A</i><i style="left:10px;transform:scaleX(1.037)">n</i><i style="left:19.10px">x</i><i style="left:26.87px">D</i><i style="left:38px;transform:scaleX(1.037)">e</i><i style="left:47px;transform:scaleX(1.037)">p</i><i style="left:56px;transform:scaleX(1.037)">6</i><i style="left:65px;transform:scaleX(0.840)">F</i><i style="left:73px;transform:scaleX(1.154)">i</i><i style="left:77px;transform:scaleX(1.037)">n</i><i style="left:86px;transform:scaleX(1.037)">a</i><i style="left:95px;transform:scaleX(1.154)">l</i><i style="left:99px;transform:scaleX(1.037)">_</i><i style="left:108px;transform:scaleX(1.384)">t</i><i style="left:114px;transform:scaleX(1.037)">h</i><i style="left:123px;transform:scaleX(1.037)">e</i><i style="left:132px;transform:scaleX(1.384)">t</i><i style="left:138px;transform:scaleX(1.037)">a</i><i style="left:147px;transform:scaleX(1.037)">_</i><i style="left:156px;transform:scaleX(1.037)">1</i><i style="left:165px;transform:scaleX(1.037)">3</i></div>
<div class="t kgreen" style="left:246px;top:118px"><i style="left:0px;transform:scaleX(0.865)">P</i><i style="left:9px;transform:scaleX(0.769)">S</i><i style="left:17px;transform:scaleX(0.865)">Y</i><i style="left:26px;transform:scaleX(0.888)">C</i><i style="left:35.87px">H</i><i style="left:47px;transform:scaleX(1.037)">6</i><i style="left:56px;transform:scaleX(1.037)">_</i><i style="left:65px;transform:scaleX(1.154)">I</i><i style="left:70px;transform:scaleX(0.888)">R</i><i style="left:80px;transform:scaleX(0.944)">T</i></div>
<div class="t kgreen" style="left:459px;top:118px"><i style="left:0px;transform:scaleX(1.037)">0</i><i style="left:9px;transform:scaleX(1.154)">.</i><i style="left:14px;transform:scaleX(1.037)">1</i><i style="left:23px;transform:scaleX(1.037)">5</i><i style="left:36px;transform:scaleX(0.962)">(</i><i style="left:45px;transform:scaleX(1.037)">0</i><i style="left:54px;transform:scaleX(1.154)">.</i><i style="left:59px;transform:scaleX(1.037)">0</i><i style="left:68px;transform:scaleX(1.037)">5</i><i style="left:81px;transform:scaleX(1.155)">-</i><i style="left:95px;transform:scaleX(1.037)">0</i><i style="left:104px;transform:scaleX(1.154)">.</i><i style="left:109px;transform:scaleX(1.037)">2</i><i style="left:118px;transform:scaleX(1.037)">4</i><i style="left:127px;transform:scaleX(0.962)">)</i></div>
<div class="t kgreen" style="left:615px;top:118px"><i style="left:0px;transform:scaleX(1.037)">0</i><i style="left:9px;transform:scaleX(1.154)">.</i><i style="left:14px;transform:scaleX(1.037)">0</i><i style="left:23px;transform:scaleX(1.037)">0</i><i style="left:32px;transform:scaleX(1.037)">8</i><i style="left:41px;transform:scaleX(1.037)">4</i><i style="left:50px;transform:scaleX(1.037)">1</i><i style="left:59px;transform:scaleX(1.037)">2</i><i style="left:68px;transform:scaleX(1.037)">9</i><i style="left:77px;transform:scaleX(1.037)">7</i><i style="left:86px;transform:scaleX(1.037)">4</i></div>
<div class="t kgreen" style="left:753px;top:118px"><i style="left:0px;transform:scaleX(1.037)">6</i><i style="left:9px;transform:scaleX(1.154)">.</i><i style="left:14px;transform:scaleX(1.037)">1</i><i style="left:23px;transform:scaleX(1.037)">5</i><i style="left:32px;transform:scaleX(0.865)">E</i><i style="left:41px;transform:scaleX(1.155)">-</i><i style="left:47px;transform:scaleX(1.037)">3</i><i style="left:56px;transform:scaleX(1.037)">3</i></div>
<div class="t kgreen" style="left:825px;top:118px"><i style="left:0px;transform:scaleX(1.037)">0</i><i style="left:9px;transform:scaleX(1.154)">.</i><i style="left:14px;transform:scaleX(1.037)">4</i><i style="left:23px;transform:scaleX(1.037)">8</i><i style="left:36px;transform:scaleX(0.962)">(</i><i style="left:45px;transform:scaleX(1.037)">0</i><i style="left:54px;transform:scaleX(1.154)">.</i><i style="left:59px;transform:scaleX(1.037)">0</i><i style="left:68px;transform:scaleX(1.037)">5</i><i style="left:81px;transform:scaleX(1.155)">-</i><i style="left:95px;transform:scaleX(1.037)">0</i><i style="left:104px;transform:scaleX(1.154)">.</i><i style="left:109px;transform:scaleX(1.037)">9</i><i style="left:118px;transform:scaleX(1.037)">3</i><i style="left:127px;transform:scaleX(0.962)">)</i></div>
<div class="t kgreen" style="left:983px;top:118px"><i style="left:0px;transform:scaleX(1.037)">0</i><i style="left:9px;transform:scaleX(1.154)">.</i><i style="left:14px;transform:scaleX(1.037)">0</i><i style="left:23px;transform:scaleX(1.037)">2</i><i style="left:32px;transform:scaleX(1.037)">7</i><i style="left:41px;transform:scaleX(1.037)">2</i><i style="left:50px;transform:scaleX(1.037)">1</i><i style="left:59px;transform:scaleX(1.037)">4</i><i style="left:68px;transform:scaleX(1.037)">3</i><i style="left:77px;transform:scaleX(1.037)">3</i><i style="left:86px;transform:scaleX(1.037)">3</i></div>
<div class="t kgreen" style="left:1091px;top:118px"><i style="left:0px;transform:scaleX(1.037)">0</i><i style="left:9px;transform:scaleX(1.154)">.</i><i style="left:14px;transform:scaleX(1.037)">0</i><i style="left:23px;transform:scaleX(1.037)">1</i><i style="left:32px;transform:scaleX(1.037)">9</i><i style="left:41px;transform:scaleX(1.037)">4</i><i style="left:50px;transform:scaleX(1.037)">7</i><i style="left:59px;transform:scaleX(1.037)">8</i><i style="left:68px;transform:scaleX(1.037)">1</i><i style="left:77px;transform:scaleX(1.037)">9</i><i style="left:86px;transform:scaleX(1.037)">4</i></div>
<div class="t kgreen" style="left:1193px;top:118px"><i style="left:0px;transform:scaleX(1.037)">0</i><i style="left:9px;transform:scaleX(1.154)">.</i><i style="left:14px;transform:scaleX(1.037)">0</i><i style="left:23px;transform:scaleX(1.037)">0</i><i style="left:36px;transform:scaleX(0.962)">(</i><i style="left:41px;transform:scaleX(1.155)">-</i><i style="left:47px;transform:scaleX(1.037)">0</i><i style="left:56px;transform:scaleX(1.154)">.</i><i style="left:61px;transform:scaleX(1.037)">1</i><i style="left:70px;transform:scaleX(1.037)">8</i><i style="left:83px;transform:scaleX(1.155)">-</i><i style="left:97px;transform:scaleX(1.037)">0</i><i style="left:106px;transform:scaleX(1.154)">.</i><i style="left:111px;transform:scaleX(1.037)">1</i><i style="left:120px;transform:scaleX(1.037)">9</i><i style="left:129px;transform:scaleX(0.962)">)</i></div>
<div class="t kgreen" style="left:1367px;top:118px"><i style="left:0px;transform:scaleX(1.037)">0</i><i style="left:9px;transform:scaleX(1.154)">.</i><i style="left:14px;transform:scaleX(1.037)">9</i><i style="left:23px;transform:scaleX(1.037)">7</i><i style="left:32px;transform:scaleX(1.037)">1</i><i style="left:41px;transform:scaleX(1.037)">2</i><i style="left:50px;transform:scaleX(1.037)">9</i><i style="left:59px;transform:scaleX(1.037)">8</i><i style="left:68px;transform:scaleX(1.037)">2</i></div>
<div class="t kgreen" style="left:1487px;top:118px"><i style="left:0px;transform:scaleX(1.037)">8</i><i style="left:9px;transform:scaleX(1.154)">.</i><i style="left:14px;transform:scaleX(1.037)">7</i><i style="left:23px;transform:scaleX(1.037)">6</i><i style="left:32px;transform:scaleX(0.865)">E</i><i style="left:41px;transform:scaleX(1.155)">-</i><i style="left:47px;transform:scaleX(1.037)">1</i><i style="left:56px;transform:scaleX(1.037)">0</i></div>
<div class="t kblue b" style="left:33px;top:142px"><i style="left:-0.13px">A</i><i style="left:11px;transform:scaleX(1.049)">n</i><i style="left:21px;transform:scaleX(1.037)">x</i><i style="left:29.87px">D</i><i style="left:41px;transform:scaleX(1.037)">e</i><i style="left:50px;transform:scaleX(1.049)">p</i><i style="left:60px;transform:scaleX(1.037)">6</i><i style="left:69px;transform:scaleX(0.840)">F</i><i style="left:77px;transform:scaleX(0.923)">i</i><i style="left:81px;transform:scaleX(1.049)">n</i><i style="left:91px;transform:scaleX(1.037)">a</i><i style="left:100px;transform:scaleX(0.923)">l</i><i style="left:104px;transform:scaleX(1.037)">_</i><i style="left:113px;transform:scaleX(1.155)">t</i><i style="left:119px;transform:scaleX(1.049)">h</i><i style="left:129px;transform:scaleX(1.037)">e</i><i style="left:138px;transform:scaleX(1.155)">t</i><i style="left:144px;transform:scaleX(1.037)">a</i><i style="left:153px;transform:scaleX(1.037)">_</i><i style="left:162px;transform:scaleX(1.037)">1</i><i style="left:171px;transform:scaleX(1.037)">3</i><i style="left:180px;transform:scaleX(1.037)">_</i><i style="left:189px;transform:scaleX(1.037)">1</i><i style="left:198px;transform:scaleX(1.037)">5</i></div>
<div class="t kblue b" style="left:246px;top:142px"><i style="left:-0.13px">A</i><i style="left:11px;transform:scaleX(1.049)">n</i><i style="left:21px;transform:scaleX(1.037)">x</i><i style="left:29.87px">D</i><i style="left:41px;transform:scaleX(1.037)">e</i><i style="left:50px;transform:scaleX(1.049)">p</i><i style="left:60px;transform:scaleX(1.037)">6</i><i style="left:69px;transform:scaleX(0.840)">F</i><i style="left:77px;transform:scaleX(0.923)">i</i><i style="left:81px;transform:scaleX(1.049)">n</i><i style="left:91px;transform:scaleX(1.037)">a</i><i style="left:100px;transform:scaleX(0.923)">l</i><i style="left:104px;transform:scaleX(1.037)">_</i><i style="left:113px;transform:scaleX(1.155)">t</i><i style="left:119px;transform:scaleX(1.049)">h</i><i style="left:129px;transform:scaleX(1.037)">e</i><i style="left:138px;transform:scaleX(1.155)">t</i><i style="left:144px;transform:scaleX(1.037)">a</i><i style="left:153px;transform:scaleX(1.037)">_</i><i style="left:162px;transform:scaleX(1.037)">1</i><i style="left:171px;transform:scaleX(1.037)">3</i></div>
<div class="t kblue b" style="left:459px;top:142px"><i style="left:0px;transform:scaleX(1.037)">0</i><i style="left:9px;transform:scaleX(1.154)">.</i><i style="left:14px;transform:scaleX(1.037)">3</i><i style="left:23px;transform:scaleX(1.037)">0</i><i style="left:36px;transform:scaleX(1.155)">(</i><i style="left:46px;transform:scaleX(1.037)">0</i><i style="left:55px;transform:scaleX(1.154)">.</i><i style="left:60px;transform:scaleX(1.037)">2</i><i style="left:69px;transform:scaleX(1.037)">4</i><i style="left:82px;transform:scaleX(1.155)">-</i><i style="left:96px;transform:scaleX(1.037)">0</i><i style="left:105px;transform:scaleX(1.154)">.</i><i style="left:110px;transform:scaleX(1.037)">3</i><i style="left:119px;transform:scaleX(1.037)">6</i><i style="left:128px;transform:scaleX(1.155)">)</i></div>
<div class="t kblue b" style="left:645px;top:142px"><i style="left:0px;transform:scaleX(1.037)">3</i><i style="left:9px;transform:scaleX(1.154)">.</i><i style="left:14px;transform:scaleX(1.037)">1</i><i style="left:23px;transform:scaleX(1.037)">8</i><i style="left:32px;transform:scaleX(0.865)">E</i><i style="left:41px;transform:scaleX(1.155)">-</i><i style="left:47px;transform:scaleX(1.037)">1</i><i style="left:56px;transform:scaleX(1.037)">8</i></div>
<div class="t kblue b" style="left:753px;top:142px"><i style="left:0px;transform:scaleX(1.037)">3</i><i style="left:9px;transform:scaleX(1.154)">.</i><i style="left:14px;transform:scaleX(1.037)">0</i><i style="left:23px;transform:scaleX(1.037)">0</i><i style="left:32px;transform:scaleX(0.865)">E</i><i style="left:41px;transform:scaleX(1.155)">-</i><i style="left:47px;transform:scaleX(1.037)">1</i><i style="left:56px;transform:scaleX(1.037)">7</i></div>
<div class="t kblue b" style="left:825px;top:142px"><i style="left:0px;transform:scaleX(1.037)">0</i><i style="left:9px;transform:scaleX(1.154)">.</i><i style="left:14px;transform:scaleX(1.037)">6</i><i style="left:23px;transform:scaleX(1.037)">1</i><i style="left:36px;transform:scaleX(1.155)">(</i><i style="left:46px;transform:scaleX(1.037)">0</i><i style="left:55px;transform:scaleX(1.154)">.</i><i style="left:60px;transform:scaleX(1.037)">3</i><i style="left:69px;transform:scaleX(1.037)">9</i><i style="left:82px;transform:scaleX(1.155)">-</i><i style="left:96px;transform:scaleX(1.037)">0</i><i style="left:105px;transform:scaleX(1.154)">.</i><i style="left:110px;transform:scaleX(1.037)">8</i><i style="left:119px;transform:scaleX(1.037)">5</i><i style="left:128px;transform:scaleX(1.155)">)</i></div>
<div class="t kblue b" style="left:1013px;top:142px"><i style="left:0px;transform:scaleX(1.037)">8</i><i style="left:9px;transform:scaleX(1.154)">.</i><i style="left:14px;transform:scaleX(1.037)">5</i><i style="left:23px;transform:scaleX(1.037)">0</i><i style="left:32px;transform:scaleX(0.865)">E</i><i style="left:41px;transform:scaleX(1.155)">-</i><i style="left:47px;transform:scaleX(1.037)">0</i><i style="left:56px;transform:scaleX(1.037)">7</i></div>
<div class="t kblue b" style="left:1091px;top:142px"><i style="left:0px;transform:scaleX(1.037)">0</i><i style="left:9px;transform:scaleX(1.154)">.</i><i style="left:14px;transform:scaleX(1.037)">1</i><i style="left:23px;transform:scaleX(1.037)">9</i><i style="left:32px;transform:scaleX(1.037)">9</i><i style="left:41px;transform:scaleX(1.037)">3</i><i style="left:50px;transform:scaleX(1.037)">5</i><i style="left:59px;transform:scaleX(1.037)">8</i><i style="left:68px;transform:scaleX(1.037)">2</i><i style="left:77px;transform:scaleX(1.037)">5</i><i style="left:86px;transform:scaleX(1.037)">3</i></div>
<div class="t kblue b" style="left:1193px;top:142px"><i style="left:0px;transform:scaleX(1.037)">0</i><i style="left:9px;transform:scaleX(1.154)">.</i><i style="left:14px;transform:scaleX(1.037)">1</i><i style="left:23px;transform:scaleX(1.037)">3</i><i style="left:36px;transform:scaleX(1.155)">(</i><i style="left:46px;transform:scaleX(1.037)">0</i><i style="left:55px;transform:scaleX(1.154)">.</i><i style="left:60px;transform:scaleX(1.037)">0</i><i style="left:69px;transform:scaleX(1.037)">1</i><i style="left:82px;transform:scaleX(1.155)">-</i><i style="left:96px;transform:scaleX(1.037)">0</i><i style="left:105px;transform:scaleX(1.154)">.</i><i style="left:110px;transform:scaleX(1.037)">2</i><i style="left:119px;transform:scaleX(1.037)">5</i><i style="left:128px;transform:scaleX(1.155)">)</i></div>
<div class="t kblue b" style="left:1349px;top:142px"><i style="left:0px;transform:scaleX(1.037)">0</i><i style="left:9px;transform:scaleX(1.154)">.</i><i style="left:14px;transform:scaleX(1.037)">0</i><i style="left:23px;transform:scaleX(1.037)">3</i><i style="left:32px;transform:scaleX(1.037)">4</i><i style="left:41px;transform:scaleX(1.037)">5</i><i style="left:50px;transform:scaleX(1.037)">7</i><i style="left:59px;transform:scaleX(1.037)">4</i><i style="left:68px;transform:scaleX(1.037)">7</i><i style="left:77px;transform:scaleX(1.037)">8</i><i style="left:86px;transform:scaleX(1.037)">5</i></div>
<div class="t kblue b" style="left:1487px;top:142px"><i style="left:0px;transform:scaleX(1.037)">8</i><i style="left:9px;transform:scaleX(1.154)">.</i><i style="left:14px;transform:scaleX(1.037)">2</i><i style="left:23px;transform:scaleX(1.037)">1</i><i style="left:32px;transform:scaleX(0.865)">E</i><i style="left:41px;transform:scaleX(1.155)">-</i><i style="left:47px;transform:scaleX(1.037)">1</i><i style="left:56px;transform:scaleX(1.037)">6</i></div>
<div class="t kmag" style="left:33px;top:166px"><i style="left:0px;transform:scaleX(0.961)">A</i><i style="left:10px;transform:scaleX(1.037)">n</i><i style="left:19.10px">x</i><i style="left:26.87px">D</i><i style="left:38px;transform:scaleX(1.037)">e</i><i style="left:47px;transform:scaleX(1.037)">p</i><i style="left:56px;transform:scaleX(1.037)">6</i><i style="left:65px;transform:scaleX(0.840)">F</i><i style="left:73px;transform:scaleX(1.154)">i</i><i style="left:77px;transform:scaleX(1.037)">n</i><i style="left:86px;transform:scaleX(1.037)">a</i><i style="left:95px;transform:scaleX(1.154)">l</i><i style="left:99px;transform:scaleX(1.037)">_</i><i style="left:108px;transform:scaleX(1.384)">t</i><i style="left:114px;transform:scaleX(1.037)">h</i><i style="left:123px;transform:scaleX(1.037)">e</i><i style="left:132px;transform:scaleX(1.384)">t</i><i style="left:138px;transform:scaleX(1.037)">a</i><i style="left:147px;transform:scaleX(1.037)">_</i><i style="left:156px;transform:scaleX(1.037)">1</i><i style="left:165px;transform:scaleX(1.037)">3</i><i style="left:174px;transform:scaleX(1.037)">_</i><i style="left:183px;transform:scaleX(1.037)">1</i><i style="left:192px;transform:scaleX(1.037)">5</i></div>
<div class="t kmag" style="left:246px;top:166px"><i style="left:0px;transform:scaleX(0.961)">A</i><i style="left:10px;transform:scaleX(1.037)">n</i><i style="left:19.10px">x</i><i style="left:26.87px">D</i><i style="left:38px;transform:scaleX(1.037)">e</i><i style="left:47px;transform:scaleX(1.037)">p</i><i style="left:56px;transform:scaleX(1.037)">6</i><i style="left:65px;transform:scaleX(0.840)">F</i><i style="left:73px;transform:scaleX(1.154)">i</i><i style="left:77px;transform:scaleX(1.037)">n</i><i style="left:86px;transform:scaleX(1.037)">a</i><i style="left:95px;transform:scaleX(1.154)">l</i><i style="left:99px;transform:scaleX(1.037)">_</i><i style="left:108px;transform:scaleX(1.384)">t</i><i style="left:114px;transform:scaleX(1.037)">h</i><i style="left:123px;transform:scaleX(1.037)">e</i><i style="left:132px;transform:scaleX(1.384)">t</i><i style="left:138px;transform:scaleX(1.037)">a</i><i style="left:147px;transform:scaleX(1.037)">_</i><i style="left:156px;transform:scaleX(1.037)">1</i><i style="left:165px;transform:scaleX(1.037)">5</i><i style="left:174px;transform:scaleX(1.037)">_</i><i style="left:183px;transform:scaleX(1.037)">1</i><i style="left:192px;transform:scaleX(1.037)">7</i></div>
<div class="t kmag" style="left:459px;top:166px"><i style="left:0px;transform:scaleX(1.037)">0</i><i style="left:9px;transform:scaleX(1.154)">.</i><i style="left:14px;transform:scaleX(1.037)">3</i><i style="left:23px;transform:scaleX(1.037)">7</i><i style="left:36px;transform:scaleX(0.962)">(</i><i style="left:45px;transform:scaleX(1.037)">0</i><i style="left:54px;transform:scaleX(1.154)">.</i><i style="left:59px;transform:scaleX(1.037)">3</i><i style="left:68px;transform:scaleX(1.037)">1</i><i style="left:81px;transform:scaleX(1.155)">-</i><i style="left:95px;transform:scaleX(1.037)">0</i><i style="left:104px;transform:scaleX(1.154)">.</i><i style="left:109px;transform:scaleX(1.037)">4</i><i style="left:118px;transform:scaleX(1.037)">3</i><i style="left:127px;transform:scaleX(0.962)">)</i></div>
<div class="t kmag" style="left:645px;top:166px"><i style="left:0px;transform:scaleX(1.037)">1</i><i style="left:9px;transform:scaleX(1.154)">.</i><i style="left:14px;transform:scaleX(1.037)">0</i><i style="left:23px;transform:scaleX(1.037)">0</i><i style="left:32px;transform:scaleX(0.865)">E</i><i style="left:41px;transform:scaleX(1.155)">-</i><i style="left:47px;transform:scaleX(1.037)">2</i><i style="left:56px;transform:scaleX(1.037)">7</i></div>
<div class="t kmag" style="left:753px;top:166px"><i style="left:0px;transform:scaleX(1.037)">1</i><i style="left:9px;transform:scaleX(1.154)">.</i><i style="left:14px;transform:scaleX(1.037)">7</i><i style="left:23px;transform:scaleX(1.037)">5</i><i style="left:32px;transform:scaleX(0.865)">E</i><i style="left:41px;transform:scaleX(1.155)">-</i><i style="left:47px;transform:scaleX(1.037)">1</i><i style="left:56px;transform:scaleX(1.037)">3</i></div>
<div class="t kmag" style="left:825px;top:166px"><i style="left:0px;transform:scaleX(1.037)">0</i><i style="left:9px;transform:scaleX(1.154)">.</i><i style="left:14px;transform:scaleX(1.037)">7</i><i style="left:23px;transform:scaleX(1.037)">9</i><i style="left:36px;transform:scaleX(0.962)">(</i><i style="left:45px;transform:scaleX(1.037)">0</i><i style="left:54px;transform:scaleX(1.154)">.</i><i style="left:59px;transform:scaleX(1.037)">5</i><i style="left:68px;transform:scaleX(1.037)">0</i><i style="left:81px;transform:scaleX(1.155)">-</i><i style="left:95px;transform:scaleX(1.037)">1</i><i style="left:104px;transform:scaleX(1.154)">.</i><i style="left:109px;transform:scaleX(1.037)">0</i><i style="left:118px;transform:scaleX(1.037)">0</i><i style="left:127px;transform:scaleX(0.962)">)</i></div>
<div class="t kmag" style="left:1013px;top:166px"><i style="left:0px;transform:scaleX(1.037)">3</i><i style="left:9px;transform:scaleX(1.154)">.</i><i style="left:14px;transform:scaleX(1.037)">4</i><i style="left:23px;transform:scaleX(1.037)">1</i><i style="left:32px;transform:scaleX(0.865)">E</i><i style="left:41px;transform:scaleX(1.155)">-</i><i style="left:47px;transform:scaleX(1.037)">0</i><i style="left:56px;transform:scaleX(1.037)">6</i></div>
<div class="t kmag" style="left:1091px;top:166px"><i style="left:0px;transform:scaleX(1.037)">0</i><i style="left:9px;transform:scaleX(1.154)">.</i><i style="left:14px;transform:scaleX(1.037)">1</i><i style="left:23px;transform:scaleX(1.037)">5</i><i style="left:32px;transform:scaleX(1.037)">4</i><i style="left:41px;transform:scaleX(1.037)">1</i><i style="left:50px;transform:scaleX(1.037)">9</i><i style="left:59px;transform:scaleX(1.037)">5</i><i style="left:68px;transform:scaleX(1.037)">4</i><i style="left:77px;transform:scaleX(1.037)">2</i><i style="left:86px;transform:scaleX(1.037)">1</i></div>
<div class="t kmag" style="left:1193px;top:166px"><i style="left:0px;transform:scaleX(1.037)">0</i><i style="left:9px;transform:scaleX(1.154)">.</i><i style="left:14px;transform:scaleX(1.037)">2</i><i style="left:23px;transform:scaleX(1.037)">2</i><i style="left:36px;transform:scaleX(0.962)">(</i><i style="left:45px;transform:scaleX(1.037)">0</i><i style="left:54px;transform:scaleX(1.154)">.</i><i style="left:59px;transform:scaleX(1.037)">1</i><i style="left:68px;transform:scaleX(1.037)">0</i><i style="left:81px;transform:scaleX(1.155)">-</i><i style="left:95px;transform:scaleX(1.037)">0</i><i style="left:104px;transform:scaleX(1.154)">.</i><i style="left:109px;transform:scaleX(1.037)">3</i><i style="left:118px;transform:scaleX(1.037)">3</i><i style="left:127px;transform:scaleX(0.962)">)</i></div>
<div class="t kmag" style="left:1349px;top:166px"><i style="left:0px;transform:scaleX(1.037)">0</i><i style="left:9px;transform:scaleX(1.154)">.</i><i style="left:14px;transform:scaleX(1.037)">0</i><i style="left:23px;transform:scaleX(1.037)">0</i><i style="left:32px;transform:scaleX(1.037)">0</i><i style="left:41px;transform:scaleX(1.037)">1</i><i style="left:50px;transform:scaleX(1.037)">6</i><i style="left:59px;transform:scaleX(1.037)">8</i><i style="left:68px;transform:scaleX(1.037)">9</i><i style="left:77px;transform:scaleX(1.037)">2</i><i style="left:86px;transform:scaleX(1.037)">4</i></div>
<div class="t kmag" style="left:1487px;top:166px"><i style="left:0px;transform:scaleX(1.037)">1</i><i style="left:9px;transform:scaleX(1.154)">.</i><i style="left:14px;transform:scaleX(1.037)">0</i><i style="left:23px;transform:scaleX(1.037)">0</i><i style="left:32px;transform:scaleX(0.865)">E</i><i style="left:41px;transform:scaleX(1.155)">-</i><i style="left:47px;transform:scaleX(1.037)">0</i><i style="left:56px;transform:scaleX(1.037)">8</i></div>
<div class="t kolive" style="left:33px;top:190px"><i style="left:0px;transform:scaleX(0.961)">A</i><i style="left:10px;transform:scaleX(1.037)">n</i><i style="left:19.10px">x</i><i style="left:26.87px">D</i><i style="left:38px;transform:scaleX(1.037)">e</i><i style="left:47px;transform:scaleX(1.037)">p</i><i style="left:56px;transform:scaleX(1.037)">6</i><i style="left:65px;transform:scaleX(0.840)">F</i><i style="left:73px;transform:scaleX(1.154)">i</i><i style="left:77px;transform:scaleX(1.037)">n</i><i style="left:86px;transform:scaleX(1.037)">a</i><i style="left:95px;transform:scaleX(1.154)">l</i><i style="left:99px;transform:scaleX(1.037)">_</i><i style="left:108px;transform:scaleX(1.384)">t</i><i style="left:114px;transform:scaleX(1.037)">h</i><i style="left:123px;transform:scaleX(1.037)">e</i><i style="left:132px;transform:scaleX(1.384)">t</i><i style="left:138px;transform:scaleX(1.037)">a</i><i style="left:147px;transform:scaleX(1.037)">_</i><i style="left:156px;transform:scaleX(1.037)">1</i><i style="left:165px;transform:scaleX(1.037)">3</i><i style="left:174px;transform:scaleX(1.037)">_</i><i style="left:183px;transform:scaleX(1.037)">1</i><i style="left:192px;transform:scaleX(1.037)">5</i></div>
<div class="t kolive" style="left:246px;top:190px"><i style="left:0px;transform:scaleX(0.961)">A</i><i style="left:10px;transform:scaleX(1.037)">n</i><i style="left:19.10px">x</i><i style="left:26.87px">D</i><i style="left:38px;transform:scaleX(1.037)">e</i><i style="left:47px;transform:scaleX(1.037)">p</i><i style="left:56px;transform:scaleX(1.037)">6</i><i style="left:65px;transform:scaleX(0.840)">F</i><i style="left:73px;transform:scaleX(1.154)">i</i><i style="left:77px;transform:scaleX(1.037)">n</i><i style="left:86px;transform:scaleX(1.037)">a</i><i style="left:95px;transform:scaleX(1.154)">l</i><i style="left:99px;transform:scaleX(1.037)">_</i><i style="left:108px;transform:scaleX(1.384)">t</i><i style="left:114px;transform:scaleX(1.037)">h</i><i style="left:123px;transform:scaleX(1.037)">e</i><i style="left:132px;transform:scaleX(1.384)">t</i><i style="left:138px;transform:scaleX(1.037)">a</i><i style="left:147px;transform:scaleX(1.037)">_</i><i style="left:156px;transform:scaleX(1.037)">1</i><i style="left:165px;transform:scaleX(1.037)">7</i></div>
<div class="t kolive" style="left:459px;top:190px"><i style="left:0px;transform:scaleX(1.037)">0</i><i style="left:9px;transform:scaleX(1.154)">.</i><i style="left:14px;transform:scaleX(1.037)">2</i><i style="left:23px;transform:scaleX(1.037)">2</i><i style="left:36px;transform:scaleX(0.962)">(</i><i style="left:41px;transform:scaleX(1.155)">-</i><i style="left:47px;transform:scaleX(1.037)">0</i><i style="left:56px;transform:scaleX(1.154)">.</i><i style="left:61px;transform:scaleX(1.037)">2</i><i style="left:70px;transform:scaleX(1.037)">2</i><i style="left:83px;transform:scaleX(1.155)">-</i><i style="left:97px;transform:scaleX(1.037)">0</i><i style="left:106px;transform:scaleX(1.154)">.</i><i style="left:111px;transform:scaleX(1.037)">6</i><i style="left:120px;transform:scaleX(1.037)">3</i><i style="left:129px;transform:scaleX(0.962)">)</i></div>
<div class="t kolive" style="left:615px;top:190px"><i style="left:0px;transform:scaleX(1.037)">0</i><i style="left:9px;transform:scaleX(1.154)">.</i><i style="left:14px;transform:scaleX(1.037)">2</i><i style="left:23px;transform:scaleX(1.037)">0</i><i style="left:32px;transform:scaleX(1.037)">7</i><i style="left:41px;transform:scaleX(1.037)">5</i><i style="left:50px;transform:scaleX(1.037)">1</i><i style="left:59px;transform:scaleX(1.037)">8</i><i style="left:68px;transform:scaleX(1.037)">3</i><i style="left:77px;transform:scaleX(1.037)">4</i><i style="left:86px;transform:scaleX(1.037)">4</i></div>
<div class="t kolive" style="left:723px;top:190px"><i style="left:0px;transform:scaleX(1.037)">0</i><i style="left:9px;transform:scaleX(1.154)">.</i><i style="left:14px;transform:scaleX(1.037)">0</i><i style="left:23px;transform:scaleX(1.037)">2</i><i style="left:32px;transform:scaleX(1.037)">8</i><i style="left:41px;transform:scaleX(1.037)">7</i><i style="left:50px;transform:scaleX(1.037)">7</i><i style="left:59px;transform:scaleX(1.037)">4</i><i style="left:68px;transform:scaleX(1.037)">6</i><i style="left:77px;transform:scaleX(1.037)">6</i><i style="left:86px;transform:scaleX(1.037)">1</i></div>
<div class="t kolive" style="left:825px;top:190px"><i style="left:0px;transform:scaleX(1.037)">1</i><i style="left:9px;transform:scaleX(1.154)">.</i><i style="left:14px;transform:scaleX(1.037)">0</i><i style="left:23px;transform:scaleX(1.037)">0</i><i style="left:36px;transform:scaleX(0.962)">(</i><i style="left:41px;transform:scaleX(1.155)">-</i><i style="left:47px;transform:scaleX(1.037)">0</i><i style="left:56px;transform:scaleX(1.154)">.</i><i style="left:61px;transform:scaleX(1.037)">3</i><i style="left:70px;transform:scaleX(1.037)">9</i><i style="left:83px;transform:scaleX(1.155)">-</i><i style="left:97px;transform:scaleX(1.037)">1</i><i style="left:106px;transform:scaleX(1.154)">.</i><i style="left:111px;transform:scaleX(1.037)">0</i><i style="left:120px;transform:scaleX(1.037)">0</i><i style="left:129px;transform:scaleX(0.962)">)</i></div>
<div class="t kolive" style="left:983px;top:190px"><i style="left:0px;transform:scaleX(1.037)">0</i><i style="left:9px;transform:scaleX(1.154)">.</i><i style="left:14px;transform:scaleX(1.037)">1</i><i style="left:23px;transform:scaleX(1.037)">6</i><i style="left:32px;transform:scaleX(1.037)">4</i><i style="left:41px;transform:scaleX(1.037)">5</i><i style="left:50px;transform:scaleX(1.037)">3</i><i style="left:59px;transform:scaleX(1.037)">7</i><i style="left:68px;transform:scaleX(1.037)">9</i><i style="left:77px;transform:scaleX(1.037)">5</i><i style="left:86px;transform:scaleX(1.037)">2</i></div>
<div class="t kolive" style="left:1091px;top:190px"><i style="left:0px;transform:scaleX(1.037)">0</i><i style="left:9px;transform:scaleX(1.154)">.</i><i style="left:14px;transform:scaleX(1.037)">7</i><i style="left:23px;transform:scaleX(1.037)">5</i><i style="left:32px;transform:scaleX(1.037)">4</i><i style="left:41px;transform:scaleX(1.037)">4</i><i style="left:50px;transform:scaleX(1.037)">6</i><i style="left:59px;transform:scaleX(1.037)">1</i><i style="left:68px;transform:scaleX(1.037)">2</i><i style="left:77px;transform:scaleX(1.037)">7</i><i style="left:86px;transform:scaleX(1.037)">2</i></div>
<div class="t kolive" style="left:1193px;top:190px"><i style="left:0px;transform:scaleX(1.155)">-</i><i style="left:6px;transform:scaleX(1.037)">0</i><i style="left:15px;transform:scaleX(1.154)">.</i><i style="left:20px;transform:scaleX(1.037)">1</i><i style="left:29px;transform:scaleX(1.037)">9</i><i style="left:42px;transform:scaleX(0.962)">(</i><i style="left:47px;transform:scaleX(1.155)">-</i><i style="left:53px;transform:scaleX(1.037)">0</i><i style="left:62px;transform:scaleX(1.154)">.</i><i style="left:67px;transform:scaleX(1.037)">7</i><i style="left:76px;transform:scaleX(1.037)">5</i><i style="left:89px;transform:scaleX(1.155)">-</i><i style="left:103px;transform:scaleX(1.037)">0</i><i style="left:112px;transform:scaleX(1.154)">.</i><i style="left:117px;transform:scaleX(1.037)">6</i><i style="left:126px;transform:scaleX(1.037)">6</i><i style="left:135px;transform:scaleX(0.962)">)</i></div>
<div class="t kolive" style="left:1349px;top:190px"><i style="left:0px;transform:scaleX(1.037)">0</i><i style="left:9px;transform:scaleX(1.154)">.</i><i style="left:14px;transform:scaleX(1.037)">7</i><i style="left:23px;transform:scaleX(1.037)">5</i><i style="left:32px;transform:scaleX(1.037)">7</i><i style="left:41px;transform:scaleX(1.037)">5</i><i style="left:50px;transform:scaleX(1.037)">2</i><i style="left:59px;transform:scaleX(1.037)">8</i><i style="left:68px;transform:scaleX(1.037)">5</i><i style="left:77px;transform:scaleX(1.037)">1</i><i style="left:86px;transform:scaleX(1.037)">3</i></div>
<div class="t kolive" style="left:1457px;top:190px"><i style="left:0px;transform:scaleX(1.037)">0</i><i style="left:9px;transform:scaleX(1.154)">.</i><i style="left:14px;transform:scaleX(1.037)">0</i><i style="left:23px;transform:scaleX(1.037)">7</i><i style="left:32px;transform:scaleX(1.037)">5</i><i style="left:41px;transform:scaleX(1.037)">0</i><i style="left:50px;transform:scaleX(1.037)">6</i><i style="left:59px;transform:scaleX(1.037)">7</i><i style="left:68px;transform:scaleX(1.037)">5</i><i style="left:77px;transform:scaleX(1.037)">2</i><i style="left:86px;transform:scaleX(1.037)">3</i></div>
<div class="t kblack" style="left:33px;top:214px"><i style="left:0px;transform:scaleX(0.961)">A</i><i style="left:10px;transform:scaleX(1.037)">n</i><i style="left:19.10px">x</i><i style="left:26.87px">D</i><i style="left:38px;transform:scaleX(1.037)">e</i><i style="left:47px;transform:scaleX(1.037)">p</i><i style="left:56px;transform:scaleX(1.037)">6</i><i style="left:65px;transform:scaleX(0.840)">F</i><i style="left:73px;transform:scaleX(1.154)">i</i><i style="left:77px;transform:scaleX(1.037)">n</i><i style="left:86px;transform:scaleX(1.037)">a</i><i style="left:95px;transform:scaleX(1.154)">l</i><i style="left:99px;transform:scaleX(1.037)">_</i><i style="left:108px;transform:scaleX(1.384)">t</i><i style="left:114px;transform:scaleX(1.037)">h</i><i style="left:123px;transform:scaleX(1.037)">e</i><i style="left:132px;transform:scaleX(1.384)">t</i><i style="left:138px;transform:scaleX(1.037)">a</i><i style="left:147px;transform:scaleX(1.037)">_</i><i style="left:156px;transform:scaleX(1.037)">1</i><i style="left:165px;transform:scaleX(1.037)">3</i><i style="left:174px;transform:scaleX(1.037)">_</i><i style="left:183px;transform:scaleX(1.037)">1</i><i style="left:192px;transform:scaleX(1.037)">5</i></div>
<div class="t kblack" style="left:246px;top:214px"><i style="left:0px;transform:scaleX(0.865)">P</i><i style="left:9px;transform:scaleX(0.769)">S</i><i style="left:17px;transform:scaleX(0.865)">Y</i><i style="left:26px;transform:scaleX(0.888)">C</i><i style="left:35.87px">H</i><i style="left:47px;transform:scaleX(1.037)">6</i><i style="left:56px;transform:scaleX(1.037)">_</i><i style="left:65px;transform:scaleX(1.154)">I</i><i style="left:70px;transform:scaleX(0.888)">R</i><i style="left:80px;transform:scaleX(0.944)">T</i></div>
<div class="t kblack" style="left:459px;top:214px"><i style="left:0px;transform:scaleX(1.037)">0</i><i style="left:9px;transform:scaleX(1.154)">.</i><i style="left:14px;transform:scaleX(1.037)">1</i><i style="left:23px;transform:scaleX(1.037)">7</i><i style="left:36px;transform:scaleX(0.962)">(</i><i style="left:45px;transform:scaleX(1.037)">0</i><i style="left:54px;transform:scaleX(1.154)">.</i><i style="left:59px;transform:scaleX(1.037)">0</i><i style="left:68px;transform:scaleX(1.037)">8</i><i style="left:81px;transform:scaleX(1.155)">-</i><i style="left:95px;transform:scaleX(1.037)">0</i><i style="left:104px;transform:scaleX(1.154)">.</i><i style="left:109px;transform:scaleX(1.037)">2</i><i style="left:118px;transform:scaleX(1.037)">6</i><i style="left:127px;transform:scaleX(0.962)">)</i></div>
<div class="t kblack" style="left:624px;top:214px"><i style="left:0px;transform:scaleX(1.037)">0</i><i style="left:9px;transform:scaleX(1.154)">.</i><i style="left:14px;transform:scaleX(1.037)">0</i><i style="left:23px;transform:scaleX(1.037)">0</i><i style="left:32px;transform:scaleX(1.037)">0</i><i style="left:41px;transform:scaleX(1.037)">3</i><i style="left:50px;transform:scaleX(1.037)">2</i><i style="left:59px;transform:scaleX(1.037)">8</i><i style="left:68px;transform:scaleX(1.037)">1</i><i style="left:77px;transform:scaleX(1.037)">5</i></div>
<div class="t kblack" style="left:753px;top:214px"><i style="left:0px;transform:scaleX(1.037)">1</i><i style="left:9px;transform:scaleX(1.154)">.</i><i style="left:14px;transform:scaleX(1.037)">4</i><i style="left:23px;transform:scaleX(1.037)">5</i><i style="left:32px;transform:scaleX(0.865)">E</i><i style="left:41px;transform:scaleX(1.155)">-</i><i style="left:47px;transform:scaleX(1.037)">1</i><i style="left:56px;transform:scaleX(1.037)">3</i></div>
<div class="t kblack" style="left:825px;top:214px"><i style="left:0px;transform:scaleX(1.037)">0</i><i style="left:9px;transform:scaleX(1.154)">.</i><i style="left:14px;transform:scaleX(1.037)">6</i><i style="left:23px;transform:scaleX(1.037)">3</i><i style="left:36px;transform:scaleX(0.962)">(</i><i style="left:45px;transform:scaleX(1.037)">0</i><i style="left:54px;transform:scaleX(1.154)">.</i><i style="left:59px;transform:scaleX(1.037)">2</i><i style="left:68px;transform:scaleX(1.037)">1</i><i style="left:81px;transform:scaleX(1.155)">-</i><i style="left:95px;transform:scaleX(1.037)">1</i><i style="left:104px;transform:scaleX(1.154)">.</i><i style="left:109px;transform:scaleX(1.037)">0</i><i style="left:118px;transform:scaleX(1.037)">0</i><i style="left:127px;transform:scaleX(0.962)">)</i></div>
<div class="t kblack" style="left:983px;top:214px"><i style="left:0px;transform:scaleX(1.037)">0</i><i style="left:9px;transform:scaleX(1.154)">.</i><i style="left:14px;transform:scaleX(1.037)">0</i><i style="left:23px;transform:scaleX(1.037)">0</i><i style="left:32px;transform:scaleX(1.037)">3</i><i style="left:41px;transform:scaleX(1.037)">9</i><i style="left:50px;transform:scaleX(1.037)">4</i><i style="left:59px;transform:scaleX(1.037)">5</i><i style="left:68px;transform:scaleX(1.037)">0</i><i style="left:77px;transform:scaleX(1.037)">5</i><i style="left:86px;transform:scaleX(1.037)">4</i></div>
<div class="t kblack" style="left:1091px;top:214px"><i style="left:0px;transform:scaleX(1.037)">0</i><i style="left:9px;transform:scaleX(1.154)">.</i><i style="left:14px;transform:scaleX(1.037)">1</i><i style="left:23px;transform:scaleX(1.037)">1</i><i style="left:32px;transform:scaleX(1.037)">6</i><i style="left:41px;transform:scaleX(1.037)">7</i><i style="left:50px;transform:scaleX(1.037)">8</i><i style="left:59px;transform:scaleX(1.037)">8</i><i style="left:68px;transform:scaleX(1.037)">8</i><i style="left:77px;transform:scaleX(1.037)">6</i><i style="left:86px;transform:scaleX(1.037)">1</i></div>
<div class="t kblack" style="left:1193px;top:214px"><i style="left:0px;transform:scaleX(1.037)">0</i><i style="left:9px;transform:scaleX(1.154)">.</i><i style="left:14px;transform:scaleX(1.037)">0</i><i style="left:23px;transform:scaleX(1.037)">0</i><i style="left:36px;transform:scaleX(0.962)">(</i><i style="left:41px;transform:scaleX(1.155)">-</i><i style="left:47px;transform:scaleX(1.037)">0</i><i style="left:56px;transform:scaleX(1.154)">.</i><i style="left:61px;transform:scaleX(1.037)">1</i><i style="left:70px;transform:scaleX(1.037)">5</i><i style="left:83px;transform:scaleX(1.155)">-</i><i style="left:97px;transform:scaleX(1.037)">0</i><i style="left:106px;transform:scaleX(1.154)">.</i><i style="left:111px;transform:scaleX(1.037)">1</i><i style="left:120px;transform:scaleX(1.037)">6</i><i style="left:129px;transform:scaleX(0.962)">)</i></div>
<div class="t kblack" style="left:1349px;top:214px"><i style="left:0px;transform:scaleX(1.037)">0</i><i style="left:9px;transform:scaleX(1.154)">.</i><i style="left:14px;transform:scaleX(1.037)">9</i><i style="left:23px;transform:scaleX(1.037)">8</i><i style="left:32px;transform:scaleX(1.037)">3</i><i style="left:41px;transform:scaleX(1.037)">9</i><i style="left:50px;transform:scaleX(1.037)">9</i><i style="left:59px;transform:scaleX(1.037)">1</i><i style="left:68px;transform:scaleX(1.037)">0</i><i style="left:77px;transform:scaleX(1.037)">3</i><i style="left:86px;transform:scaleX(1.037)">4</i></div>
<div class="t kblack" style="left:1487px;top:214px"><i style="left:0px;transform:scaleX(1.037)">1</i><i style="left:9px;transform:scaleX(1.154)">.</i><i style="left:14px;transform:scaleX(1.037)">0</i><i style="left:23px;transform:scaleX(1.037)">5</i><i style="left:32px;transform:scaleX(0.865)">E</i><i style="left:41px;transform:scaleX(1.155)">-</i><i style="left:47px;transform:scaleX(1.037)">1</i><i style="left:56px;transform:scaleX(1.037)">2</i></div>
<div class="t korange b" style="left:33px;top:238px"><i style="left:-0.13px">A</i><i style="left:11px;transform:scaleX(1.049)">n</i><i style="left:21px;transform:scaleX(1.037)">x</i><i style="left:29.87px">D</i><i style="left:41px;transform:scaleX(1.037)">e</i><i style="left:50px;transform:scaleX(1.049)">p</i><i style="left:60px;transform:scaleX(1.037)">6</i><i style="left:69px;transform:scaleX(0.840)">F</i><i style="left:77px;transform:scaleX(0.923)">i</i><i style="left:81px;transform:scaleX(1.049)">n</i><i style="left:91px;transform:scaleX(1.037)">a</i><i style="left:100px;transform:scaleX(0.923)">l</i><i style="left:104px;transform:scaleX(1.037)">_</i><i style="left:113px;transform:scaleX(1.155)">t</i><i style="left:119px;transform:scaleX(1.049)">h</i><i style="left:129px;transform:scaleX(1.037)">e</i><i style="left:138px;transform:scaleX(1.155)">t</i><i style="left:144px;transform:scaleX(1.037)">a</i><i style="left:153px;transform:scaleX(1.037)">_</i><i style="left:162px;transform:scaleX(1.037)">1</i><i style="left:171px;transform:scaleX(1.037)">5</i><i style="left:180px;transform:scaleX(1.037)">_</i><i style="left:189px;transform:scaleX(1.037)">1</i><i style="left:198px;transform:scaleX(1.037)">7</i></div>
<div class="t korange b" style="left:246px;top:238px"><i style="left:-0.13px">A</i><i style="left:11px;transform:scaleX(1.049)">n</i><i style="left:21px;transform:scaleX(1.037)">x</i><i style="left:29.87px">D</i><i style="left:41px;transform:scaleX(1.037)">e</i><i style="left:50px;transform:scaleX(1.049)">p</i><i style="left:60px;transform:scaleX(1.037)">6</i><i style="left:69px;transform:scaleX(0.840)">F</i><i style="left:77px;transform:scaleX(0.923)">i</i><i style="left:81px;transform:scaleX(1.049)">n</i><i style="left:91px;transform:scaleX(1.037)">a</i><i style="left:100px;transform:scaleX(0.923)">l</i><i style="left:104px;transform:scaleX(1.037)">_</i><i style="left:113px;transform:scaleX(1.155)">t</i><i style="left:119px;transform:scaleX(1.049)">h</i><i style="left:129px;transform:scaleX(1.037)">e</i><i style="left:138px;transform:scaleX(1.155)">t</i><i style="left:144px;transform:scaleX(1.037)">a</i><i style="left:153px;transform:scaleX(1.037)">_</i><i style="left:162px;transform:scaleX(1.037)">1</i><i style="left:171px;transform:scaleX(1.037)">3</i></div>
<div class="t korange b" style="left:459px;top:238px"><i style="left:0px;transform:scaleX(1.037)">0</i><i style="left:9px;transform:scaleX(1.154)">.</i><i style="left:14px;transform:scaleX(1.037)">2</i><i style="left:23px;transform:scaleX(1.037)">0</i><i style="left:36px;transform:scaleX(1.155)">(</i><i style="left:46px;transform:scaleX(1.037)">0</i><i style="left:55px;transform:scaleX(1.154)">.</i><i style="left:60px;transform:scaleX(1.037)">1</i><i style="left:69px;transform:scaleX(1.037)">3</i><i style="left:82px;transform:scaleX(1.155)">-</i><i style="left:96px;transform:scaleX(1.037)">0</i><i style="left:105px;transform:scaleX(1.154)">.</i><i style="left:110px;transform:scaleX(1.037)">2</i><i style="left:119px;transform:scaleX(1.037)">7</i><i style="left:128px;transform:scaleX(1.155)">)</i></div>
<div class="t korange b" style="left:645px;top:238px"><i style="left:0px;transform:scaleX(1.037)">2</i><i style="left:9px;transform:scaleX(1.154)">.</i><i style="left:14px;transform:scaleX(1.037)">0</i><i style="left:23px;transform:scaleX(1.037)">8</i><i style="left:32px;transform:scaleX(0.865)">E</i><i style="left:41px;transform:scaleX(1.155)">-</i><i style="left:47px;transform:scaleX(1.037)">0</i><i style="left:56px;transform:scaleX(1.037)">7</i></div>
<div class="t korange b" style="left:753px;top:238px"><i style="left:0px;transform:scaleX(1.037)">9</i><i style="left:9px;transform:scaleX(1.154)">.</i><i style="left:14px;transform:scaleX(1.037)">3</i><i style="left:23px;transform:scaleX(1.037)">4</i><i style="left:32px;transform:scaleX(0.865)">E</i><i style="left:41px;transform:scaleX(1.155)">-</i><i style="left:47px;transform:scaleX(1.037)">1</i><i style="left:56px;transform:scaleX(1.037)">8</i></div>
<div class="t korange b" style="left:825px;top:238px"><i style="left:0px;transform:scaleX(1.037)">0</i><i style="left:9px;transform:scaleX(1.154)">.</i><i style="left:14px;transform:scaleX(1.037)">6</i><i style="left:23px;transform:scaleX(1.037)">1</i><i style="left:36px;transform:scaleX(1.155)">(</i><i style="left:46px;transform:scaleX(1.037)">0</i><i style="left:55px;transform:scaleX(1.154)">.</i><i style="left:60px;transform:scaleX(1.037)">3</i><i style="left:69px;transform:scaleX(1.037)">0</i><i style="left:82px;transform:scaleX(1.155)">-</i><i style="left:96px;transform:scaleX(1.037)">0</i><i style="left:105px;transform:scaleX(1.154)">.</i><i style="left:110px;transform:scaleX(1.037)">9</i><i style="left:119px;transform:scaleX(1.037)">4</i><i style="left:128px;transform:scaleX(1.155)">)</i></div>
<div class="t korange b" style="left:983px;top:238px"><i style="left:0px;transform:scaleX(1.037)">0</i><i style="left:9px;transform:scaleX(1.154)">.</i><i style="left:14px;transform:scaleX(1.037)">0</i><i style="left:23px;transform:scaleX(1.037)">0</i><i style="left:32px;transform:scaleX(1.037)">0</i><i style="left:41px;transform:scaleX(1.037)">1</i><i style="left:50px;transform:scaleX(1.037)">6</i><i style="left:59px;transform:scaleX(1.037)">6</i><i style="left:68px;transform:scaleX(1.037)">2</i><i style="left:77px;transform:scaleX(1.037)">8</i><i style="left:86px;transform:scaleX(1.037)">8</i></div>
<div class="t korange b" style="left:1091px;top:238px"><i style="left:0px;transform:scaleX(1.037)">0</i><i style="left:9px;transform:scaleX(1.154)">.</i><i style="left:14px;transform:scaleX(1.037)">3</i><i style="left:23px;transform:scaleX(1.037)">2</i><i style="left:32px;transform:scaleX(1.037)">8</i><i style="left:41px;transform:scaleX(1.037)">7</i><i style="left:50px;transform:scaleX(1.037)">0</i><i style="left:59px;transform:scaleX(1.037)">0</i><i style="left:68px;transform:scaleX(1.037)">5</i><i style="left:77px;transform:scaleX(1.037)">2</i><i style="left:86px;transform:scaleX(1.037)">9</i></div>
<div class="t korange b" style="left:1193px;top:238px"><i style="left:0px;transform:scaleX(1.037)">0</i><i style="left:9px;transform:scaleX(1.154)">.</i><i style="left:14px;transform:scaleX(1.037)">0</i><i style="left:23px;transform:scaleX(1.037)">1</i><i style="left:36px;transform:scaleX(1.155)">(</i><i style="left:42px;transform:scaleX(1.155)">-</i><i style="left:48px;transform:scaleX(1.037)">0</i><i style="left:57px;transform:scaleX(1.154)">.</i><i style="left:62px;transform:scaleX(1.037)">1</i><i style="left:71px;transform:scaleX(1.037)">3</i><i style="left:84px;transform:scaleX(1.155)">-</i><i style="left:98px;transform:scaleX(1.037)">0</i><i style="left:107px;transform:scaleX(1.154)">.</i><i style="left:112px;transform:scaleX(1.037)">1</i><i style="left:121px;transform:scaleX(1.037)">5</i><i style="left:130px;transform:scaleX(1.155)">)</i></div>
<div class="t korange b" style="left:1349px;top:238px"><i style="left:0px;transform:scaleX(1.037)">0</i><i style="left:9px;transform:scaleX(1.154)">.</i><i style="left:14px;transform:scaleX(1.037)">8</i><i style="left:23px;transform:scaleX(1.037)">7</i><i style="left:32px;transform:scaleX(1.037)">6</i><i style="left:41px;transform:scaleX(1.037)">3</i><i style="left:50px;transform:scaleX(1.037)">1</i><i style="left:59px;transform:scaleX(1.037)">1</i><i style="left:68px;transform:scaleX(1.037)">0</i><i style="left:77px;transform:scaleX(1.037)">0</i><i style="left:86px;transform:scaleX(1.037)">4</i></div>
<div class="t korange b" style="left:1487px;top:238px"><i style="left:0px;transform:scaleX(1.037)">1</i><i style="left:9px;transform:scaleX(1.154)">.</i><i style="left:14px;transform:scaleX(1.037)">8</i><i style="left:23px;transform:scaleX(1.037)">9</i><i style="left:32px;transform:scaleX(0.865)">E</i><i style="left:41px;transform:scaleX(1.155)">-</i><i style="left:47px;transform:scaleX(1.037)">1</i><i style="left:56px;transform:scaleX(1.037)">8</i></div>
<div class="t kmag b" style="left:33px;top:262px"><i style="left:-0.13px">A</i><i style="left:11px;transform:scaleX(1.049)">n</i><i style="left:21px;transform:scaleX(1.037)">x</i><i style="left:29.87px">D</i><i style="left:41px;transform:scaleX(1.037)">e</i><i style="left:50px;transform:scaleX(1.049)">p</i><i style="left:60px;transform:scaleX(1.037)">6</i><i style="left:69px;transform:scaleX(0.840)">F</i><i style="left:77px;transform:scaleX(0.923)">i</i><i style="left:81px;transform:scaleX(1.049)">n</i><i style="left:91px;transform:scaleX(1.037)">a</i><i style="left:100px;transform:scaleX(0.923)">l</i><i style="left:104px;transform:scaleX(1.037)">_</i><i style="left:113px;transform:scaleX(1.155)">t</i><i style="left:119px;transform:scaleX(1.049)">h</i><i style="left:129px;transform:scaleX(1.037)">e</i><i style="left:138px;transform:scaleX(1.155)">t</i><i style="left:144px;transform:scaleX(1.037)">a</i><i style="left:153px;transform:scaleX(1.037)">_</i><i style="left:162px;transform:scaleX(1.037)">1</i><i style="left:171px;transform:scaleX(1.037)">5</i><i style="left:180px;transform:scaleX(1.037)">_</i><i style="left:189px;transform:scaleX(1.037)">1</i><i style="left:198px;transform:scaleX(1.037)">7</i></div>
<div class="t kmag b" style="left:246px;top:262px"><i style="left:-0.13px">A</i><i style="left:11px;transform:scaleX(1.049)">n</i><i style="left:21px;transform:scaleX(1.037)">x</i><i style="left:29.87px">D</i><i style="left:41px;transform:scaleX(1.037)">e</i><i style="left:50px;transform:scaleX(1.049)">p</i><i style="left:60px;transform:scaleX(1.037)">6</i><i style="left:69px;transform:scaleX(0.840)">F</i><i style="left:77px;transform:scaleX(0.923)">i</i><i style="left:81px;transform:scaleX(1.049)">n</i><i style="left:91px;transform:scaleX(1.037)">a</i><i style="left:100px;transform:scaleX(0.923)">l</i><i style="left:104px;transform:scaleX(1.037)">_</i><i style="left:113px;transform:scaleX(1.155)">t</i><i style="left:119px;transform:scaleX(1.049)">h</i><i style="left:129px;transform:scaleX(1.037)">e</i><i style="left:138px;transform:scaleX(1.155)">t</i><i style="left:144px;transform:scaleX(1.037)">a</i><i style="left:153px;transform:scaleX(1.037)">_</i><i style="left:162px;transform:scaleX(1.037)">1</i><i style="left:171px;transform:scaleX(1.037)">3</i><i style="left:180px;transform:scaleX(1.037)">_</i><i style="left:189px;transform:scaleX(1.037)">1</i><i style="left:198px;transform:scaleX(1.037)">5</i></div>
<div class="t kmag b" style="left:459px;top:262px"><i style="left:0px;transform:scaleX(1.037)">0</i><i style="left:9px;transform:scaleX(1.154)">.</i><i style="left:14px;transform:scaleX(1.037)">3</i><i style="left:23px;transform:scaleX(1.037)">7</i><i style="left:36px;transform:scaleX(1.155)">(</i><i style="left:46px;transform:scaleX(1.037)">0</i><i style="left:55px;transform:scaleX(1.154)">.</i><i style="left:60px;transform:scaleX(1.037)">3</i><i style="left:69px;transform:scaleX(1.037)">1</i><i style="left:82px;transform:scaleX(1.155)">-</i><i style="left:96px;transform:scaleX(1.037)">0</i><i style="left:105px;transform:scaleX(1.154)">.</i><i style="left:110px;transform:scaleX(1.037)">4</i><i style="left:119px;transform:scaleX(1.037)">3</i><i style="left:128px;transform:scaleX(1.155)">)</i></div>
<div class="t kmag b" style="left:645px;top:262px"><i style="left:0px;transform:scaleX(1.037)">1</i><i style="left:9px;transform:scaleX(1.154)">.</i><i style="left:14px;transform:scaleX(1.037)">0</i><i style="left:23px;transform:scaleX(1.037)">0</i><i style="left:32px;transform:scaleX(0.865)">E</i><i style="left:41px;transform:scaleX(1.155)">-</i><i style="left:47px;transform:scaleX(1.037)">2</i><i style="left:56px;transform:scaleX(1.037)">7</i></div>
<div class="t kmag b" style="left:753px;top:262px"><i style="left:0px;transform:scaleX(1.037)">1</i><i style="left:9px;transform:scaleX(1.154)">.</i><i style="left:14px;transform:scaleX(1.037)">0</i><i style="left:23px;transform:scaleX(1.037)">9</i><i style="left:32px;transform:scaleX(0.865)">E</i><i style="left:41px;transform:scaleX(1.155)">-</i><i style="left:47px;transform:scaleX(1.037)">1</i><i style="left:56px;transform:scaleX(1.037)">1</i></div>
<div class="t kmag b" style="left:825px;top:262px"><i style="left:0px;transform:scaleX(1.037)">0</i><i style="left:9px;transform:scaleX(1.154)">.</i><i style="left:14px;transform:scaleX(1.037)">7</i><i style="left:23px;transform:scaleX(1.037)">9</i><i style="left:36px;transform:scaleX(1.155)">(</i><i style="left:46px;transform:scaleX(1.037)">0</i><i style="left:55px;transform:scaleX(1.154)">.</i><i style="left:60px;transform:scaleX(1.037)">5</i><i style="left:69px;transform:scaleX(1.037)">0</i><i style="left:82px;transform:scaleX(1.155)">-</i><i style="left:96px;transform:scaleX(1.037)">1</i><i style="left:105px;transform:scaleX(1.154)">.</i><i style="left:110px;transform:scaleX(1.037)">0</i><i style="left:119px;transform:scaleX(1.037)">0</i><i style="left:128px;transform:scaleX(1.155)">)</i></div>
<div class="t kmag b" style="left:1013px;top:262px"><i style="left:0px;transform:scaleX(1.037)">3</i><i style="left:9px;transform:scaleX(1.154)">.</i><i style="left:14px;transform:scaleX(1.037)">4</i><i style="left:23px;transform:scaleX(1.037)">1</i><i style="left:32px;transform:scaleX(0.865)">E</i><i style="left:41px;transform:scaleX(1.155)">-</i><i style="left:47px;transform:scaleX(1.037)">0</i><i style="left:56px;transform:scaleX(1.037)">6</i></div>
<div class="t kmag b" style="left:1091px;top:262px"><i style="left:0px;transform:scaleX(1.037)">0</i><i style="left:9px;transform:scaleX(1.154)">.</i><i style="left:14px;transform:scaleX(1.037)">4</i><i style="left:23px;transform:scaleX(1.037)">9</i><i style="left:32px;transform:scaleX(1.037)">1</i><i style="left:41px;transform:scaleX(1.037)">4</i><i style="left:50px;transform:scaleX(1.037)">8</i><i style="left:59px;transform:scaleX(1.037)">0</i><i style="left:68px;transform:scaleX(1.037)">9</i><i style="left:77px;transform:scaleX(1.037)">0</i><i style="left:86px;transform:scaleX(1.037)">7</i></div>
<div class="t kmag b" style="left:1193px;top:262px"><i style="left:0px;transform:scaleX(1.037)">0</i><i style="left:9px;transform:scaleX(1.154)">.</i><i style="left:14px;transform:scaleX(1.037)">2</i><i style="left:23px;transform:scaleX(1.037)">2</i><i style="left:36px;transform:scaleX(1.155)">(</i><i style="left:46px;transform:scaleX(1.037)">0</i><i style="left:55px;transform:scaleX(1.154)">.</i><i style="left:60px;transform:scaleX(1.037)">1</i><i style="left:69px;transform:scaleX(1.037)">0</i><i style="left:82px;transform:scaleX(1.155)">-</i><i style="left:96px;transform:scaleX(1.037)">0</i><i style="left:105px;transform:scaleX(1.154)">.</i><i style="left:110px;transform:scaleX(1.037)">3</i><i style="left:119px;transform:scaleX(1.037)">3</i><i style="left:128px;transform:scaleX(1.155)">)</i></div>
<div class="t kmag b" style="left:1349px;top:262px"><i style="left:0px;transform:scaleX(1.037)">0</i><i style="left:9px;transform:scaleX(1.154)">.</i><i style="left:14px;transform:scaleX(1.037)">0</i><i style="left:23px;transform:scaleX(1.037)">0</i><i style="left:32px;transform:scaleX(1.037)">0</i><i style="left:41px;transform:scaleX(1.037)">1</i><i style="left:50px;transform:scaleX(1.037)">6</i><i style="left:59px;transform:scaleX(1.037)">8</i><i style="left:68px;transform:scaleX(1.037)">9</i><i style="left:77px;transform:scaleX(1.037)">2</i><i style="left:86px;transform:scaleX(1.037)">4</i></div>
<div class="t kmag b" style="left:1487px;top:262px"><i style="left:0px;transform:scaleX(1.037)">9</i><i style="left:9px;transform:scaleX(1.154)">.</i><i style="left:14px;transform:scaleX(1.037)">5</i><i style="left:23px;transform:scaleX(1.037)">9</i><i style="left:32px;transform:scaleX(0.865)">E</i><i style="left:41px;transform:scaleX(1.155)">-</i><i style="left:47px;transform:scaleX(1.037)">1</i><i style="left:56px;transform:scaleX(1.037)">0</i></div>
<div class="t kred" style="left:33px;top:286px"><i style="left:0px;transform:scaleX(0.961)">A</i><i style="left:10px;transform:scaleX(1.037)">n</i><i style="left:19.10px">x</i><i style="left:26.87px">D</i><i style="left:38px;transform:scaleX(1.037)">e</i><i style="left:47px;transform:scaleX(1.037)">p</i><i style="left:56px;transform:scaleX(1.037)">6</i><i style="left:65px;transform:scaleX(0.840)">F</i><i style="left:73px;transform:scaleX(1.154)">i</i><i style="left:77px;transform:scaleX(1.037)">n</i><i style="left:86px;transform:scaleX(1.037)">a</i><i style="left:95px;transform:scaleX(1.154)">l</i><i style="left:99px;transform:scaleX(1.037)">_</i><i style="left:108px;transform:scaleX(1.384)">t</i><i style="left:114px;transform:scaleX(1.037)">h</i><i style="left:123px;transform:scaleX(1.037)">e</i><i style="left:132px;transform:scaleX(1.384)">t</i><i style="left:138px;transform:scaleX(1.037)">a</i><i style="left:147px;transform:scaleX(1.037)">_</i><i style="left:156px;transform:scaleX(1.037)">1</i><i style="left:165px;transform:scaleX(1.037)">5</i><i style="left:174px;transform:scaleX(1.037)">_</i><i style="left:183px;transform:scaleX(1.037)">1</i><i style="left:192px;transform:scaleX(1.037)">7</i></div>
<div class="t kred" style="left:246px;top:286px"><i style="left:0px;transform:scaleX(0.961)">A</i><i style="left:10px;transform:scaleX(1.037)">n</i><i style="left:19.10px">x</i><i style="left:26.87px">D</i><i style="left:38px;transform:scaleX(1.037)">e</i><i style="left:47px;transform:scaleX(1.037)">p</i><i style="left:56px;transform:scaleX(1.037)">6</i><i style="left:65px;transform:scaleX(0.840)">F</i><i style="left:73px;transform:scaleX(1.154)">i</i><i style="left:77px;transform:scaleX(1.037)">n</i><i style="left:86px;transform:scaleX(1.037)">a</i><i style="left:95px;transform:scaleX(1.154)">l</i><i style="left:99px;transform:scaleX(1.037)">_</i><i style="left:108px;transform:scaleX(1.384)">t</i><i style="left:114px;transform:scaleX(1.037)">h</i><i style="left:123px;transform:scaleX(1.037)">e</i><i style="left:132px;transform:scaleX(1.384)">t</i><i style="left:138px;transform:scaleX(1.037)">a</i><i style="left:147px;transform:scaleX(1.037)">_</i><i style="left:156px;transform:scaleX(1.037)">1</i><i style="left:165px;transform:scaleX(1.037)">7</i></div>
<div class="t kred" style="left:459px;top:286px"><i style="left:0px;transform:scaleX(1.155)">-</i><i style="left:6px;transform:scaleX(1.037)">0</i><i style="left:15px;transform:scaleX(1.154)">.</i><i style="left:20px;transform:scaleX(1.037)">0</i><i style="left:29px;transform:scaleX(1.037)">3</i><i style="left:42px;transform:scaleX(0.962)">(</i><i style="left:47px;transform:scaleX(1.155)">-</i><i style="left:53px;transform:scaleX(1.037)">0</i><i style="left:62px;transform:scaleX(1.154)">.</i><i style="left:67px;transform:scaleX(1.037)">6</i><i style="left:76px;transform:scaleX(1.037)">7</i><i style="left:89px;transform:scaleX(1.155)">-</i><i style="left:103px;transform:scaleX(1.037)">0</i><i style="left:112px;transform:scaleX(1.154)">.</i><i style="left:117px;transform:scaleX(1.037)">6</i><i style="left:126px;transform:scaleX(1.037)">5</i><i style="left:135px;transform:scaleX(0.962)">)</i></div>
<div class="t kred" style="left:615px;top:286px"><i style="left:0px;transform:scaleX(1.037)">0</i><i style="left:9px;transform:scaleX(1.154)">.</i><i style="left:14px;transform:scaleX(1.037)">7</i><i style="left:23px;transform:scaleX(1.037)">0</i><i style="left:32px;transform:scaleX(1.037)">1</i><i style="left:41px;transform:scaleX(1.037)">7</i><i style="left:50px;transform:scaleX(1.037)">6</i><i style="left:59px;transform:scaleX(1.037)">6</i><i style="left:68px;transform:scaleX(1.037)">4</i><i style="left:77px;transform:scaleX(1.037)">2</i><i style="left:86px;transform:scaleX(1.037)">4</i></div>
<div class="t kred" style="left:732px;top:286px"><i style="left:0px;transform:scaleX(1.037)">0</i><i style="left:9px;transform:scaleX(1.154)">.</i><i style="left:14px;transform:scaleX(1.037)">8</i><i style="left:23px;transform:scaleX(1.037)">4</i><i style="left:32px;transform:scaleX(1.037)">8</i><i style="left:41px;transform:scaleX(1.037)">0</i><i style="left:50px;transform:scaleX(1.037)">0</i><i style="left:59px;transform:scaleX(1.037)">7</i><i style="left:68px;transform:scaleX(1.037)">6</i><i style="left:77px;transform:scaleX(1.037)">2</i></div>
<div class="t kred" style="left:825px;top:286px"><i style="left:0px;transform:scaleX(1.155)">-</i><i style="left:6px;transform:scaleX(1.037)">1</i><i style="left:15px;transform:scaleX(1.154)">.</i><i style="left:20px;transform:scaleX(1.037)">0</i><i style="left:29px;transform:scaleX(1.037)">0</i><i style="left:42px;transform:scaleX(0.962)">(</i><i style="left:47px;transform:scaleX(1.155)">-</i><i style="left:53px;transform:scaleX(1.037)">1</i><i style="left:62px;transform:scaleX(1.154)">.</i><i style="left:67px;transform:scaleX(1.037)">0</i><i style="left:76px;transform:scaleX(1.037)">0</i><i style="left:89px;transform:scaleX(1.155)">-</i><i style="left:99px;transform:scaleX(1.155)">-</i><i style="left:105px;transform:scaleX(1.037)">0</i><i style="left:114px;transform:scaleX(1.154)">.</i><i style="left:119px;transform:scaleX(1.037)">9</i><i style="left:128px;transform:scaleX(1.037)">6</i><i style="left:137px;transform:scaleX(0.962)">)</i></div>
<div class="t kred" style="left:983px;top:286px"><i style="left:0px;transform:scaleX(1.037)">0</i><i style="left:9px;transform:scaleX(1.154)">.</i><i style="left:14px;transform:scaleX(1.037)">4</i><i style="left:23px;transform:scaleX(1.037)">4</i><i style="left:32px;transform:scaleX(1.037)">0</i><i style="left:41px;transform:scaleX(1.037)">2</i><i style="left:50px;transform:scaleX(1.037)">5</i><i style="left:59px;transform:scaleX(1.037)">8</i><i style="left:68px;transform:scaleX(1.037)">1</i><i style="left:77px;transform:scaleX(1.037)">2</i><i style="left:86px;transform:scaleX(1.037)">8</i></div>
<div class="t kred" style="left:1091px;top:286px"><i style="left:0px;transform:scaleX(1.037)">0</i><i style="left:9px;transform:scaleX(1.154)">.</i><i style="left:14px;transform:scaleX(1.037)">7</i><i style="left:23px;transform:scaleX(1.037)">5</i><i style="left:32px;transform:scaleX(1.037)">1</i><i style="left:41px;transform:scaleX(1.037)">9</i><i style="left:50px;transform:scaleX(1.037)">7</i><i style="left:59px;transform:scaleX(1.037)">7</i><i style="left:68px;transform:scaleX(1.037)">1</i><i style="left:77px;transform:scaleX(1.037)">7</i><i style="left:86px;transform:scaleX(1.037)">3</i></div>
<div class="t kred" style="left:1193px;top:286px"><i style="left:0px;transform:scaleX(1.037)">0</i><i style="left:9px;transform:scaleX(1.154)">.</i><i style="left:14px;transform:scaleX(1.037)">4</i><i style="left:23px;transform:scaleX(1.037)">1</i><i style="left:36px;transform:scaleX(0.962)">(</i><i style="left:41px;transform:scaleX(1.155)">-</i><i style="left:47px;transform:scaleX(1.037)">0</i><i style="left:56px;transform:scaleX(1.154)">.</i><i style="left:61px;transform:scaleX(1.037)">6</i><i style="left:70px;transform:scaleX(1.037)">2</i><i style="left:83px;transform:scaleX(1.155)">-</i><i style="left:97px;transform:scaleX(1.037)">0</i><i style="left:106px;transform:scaleX(1.154)">.</i><i style="left:111px;transform:scaleX(1.037)">9</i><i style="left:120px;transform:scaleX(1.037)">5</i><i style="left:129px;transform:scaleX(0.962)">)</i></div>
<div class="t kred" style="left:1349px;top:286px"><i style="left:0px;transform:scaleX(1.037)">0</i><i style="left:9px;transform:scaleX(1.154)">.</i><i style="left:14px;transform:scaleX(1.037)">5</i><i style="left:23px;transform:scaleX(1.037)">3</i><i style="left:32px;transform:scaleX(1.037)">7</i><i style="left:41px;transform:scaleX(1.037)">6</i><i style="left:50px;transform:scaleX(1.037)">7</i><i style="left:59px;transform:scaleX(1.037)">3</i><i style="left:68px;transform:scaleX(1.037)">8</i><i style="left:77px;transform:scaleX(1.037)">6</i><i style="left:86px;transform:scaleX(1.037)">1</i></div>
<div class="t kred" style="left:1457px;top:286px"><i style="left:0px;transform:scaleX(1.037)">0</i><i style="left:9px;transform:scaleX(1.154)">.</i><i style="left:14px;transform:scaleX(1.037)">6</i><i style="left:23px;transform:scaleX(1.037)">8</i><i style="left:32px;transform:scaleX(1.037)">0</i><i style="left:41px;transform:scaleX(1.037)">7</i><i style="left:50px;transform:scaleX(1.037)">6</i><i style="left:59px;transform:scaleX(1.037)">9</i><i style="left:68px;transform:scaleX(1.037)">5</i><i style="left:77px;transform:scaleX(1.037)">8</i><i style="left:86px;transform:scaleX(1.037)">5</i></div>
<div class="t kblack" style="left:33px;top:310px"><i style="left:0px;transform:scaleX(0.961)">A</i><i style="left:10px;transform:scaleX(1.037)">n</i><i style="left:19.10px">x</i><i style="left:26.87px">D</i><i style="left:38px;transform:scaleX(1.037)">e</i><i style="left:47px;transform:scaleX(1.037)">p</i><i style="left:56px;transform:scaleX(1.037)">6</i><i style="left:65px;transform:scaleX(0.840)">F</i><i style="left:73px;transform:scaleX(1.154)">i</i><i style="left:77px;transform:scaleX(1.037)">n</i><i style="left:86px;transform:scaleX(1.037)">a</i><i style="left:95px;transform:scaleX(1.154)">l</i><i style="left:99px;transform:scaleX(1.037)">_</i><i style="left:108px;transform:scaleX(1.384)">t</i><i style="left:114px;transform:scaleX(1.037)">h</i><i style="left:123px;transform:scaleX(1.037)">e</i><i style="left:132px;transform:scaleX(1.384)">t</i><i style="left:138px;transform:scaleX(1.037)">a</i><i style="left:147px;transform:scaleX(1.037)">_</i><i style="left:156px;transform:scaleX(1.037)">1</i><i style="left:165px;transform:scaleX(1.037)">5</i><i style="left:174px;transform:scaleX(1.037)">_</i><i style="left:183px;transform:scaleX(1.037)">1</i><i style="left:192px;transform:scaleX(1.037)">7</i></div>
<div class="t kblack" style="left:246px;top:310px"><i style="left:0px;transform:scaleX(0.865)">P</i><i style="left:9px;transform:scaleX(0.769)">S</i><i style="left:17px;transform:scaleX(0.865)">Y</i><i style="left:26px;transform:scaleX(0.888)">C</i><i style="left:35.87px">H</i><i style="left:47px;transform:scaleX(1.037)">6</i><i style="left:56px;transform:scaleX(1.037)">_</i><i style="left:65px;transform:scaleX(1.154)">I</i><i style="left:70px;transform:scaleX(0.888)">R</i><i style="left:80px;transform:scaleX(0.944)">T</i></div>
<div class="t kblack" style="left:459px;top:310px"><i style="left:0px;transform:scaleX(1.037)">0</i><i style="left:9px;transform:scaleX(1.154)">.</i><i style="left:14px;transform:scaleX(1.037)">2</i><i style="left:23px;transform:scaleX(1.037)">8</i><i style="left:36px;transform:scaleX(0.962)">(</i><i style="left:45px;transform:scaleX(1.037)">0</i><i style="left:54px;transform:scaleX(1.154)">.</i><i style="left:59px;transform:scaleX(1.037)">2</i><i style="left:68px;transform:scaleX(1.037)">0</i><i style="left:81px;transform:scaleX(1.155)">-</i><i style="left:95px;transform:scaleX(1.037)">0</i><i style="left:104px;transform:scaleX(1.154)">.</i><i style="left:109px;transform:scaleX(1.037)">3</i><i style="left:118px;transform:scaleX(1.037)">4</i><i style="left:127px;transform:scaleX(0.962)">)</i></div>
<div class="t kblack" style="left:645px;top:310px"><i style="left:0px;transform:scaleX(1.037)">1</i><i style="left:9px;transform:scaleX(1.154)">.</i><i style="left:14px;transform:scaleX(1.037)">2</i><i style="left:23px;transform:scaleX(1.037)">7</i><i style="left:32px;transform:scaleX(0.865)">E</i><i style="left:41px;transform:scaleX(1.155)">-</i><i style="left:47px;transform:scaleX(1.037)">1</i><i style="left:56px;transform:scaleX(1.037)">1</i></div>
<div class="t kblack" style="left:753px;top:310px"><i style="left:0px;transform:scaleX(1.037)">1</i><i style="left:9px;transform:scaleX(1.154)">.</i><i style="left:14px;transform:scaleX(1.037)">0</i><i style="left:23px;transform:scaleX(1.037)">2</i><i style="left:32px;transform:scaleX(0.865)">E</i><i style="left:41px;transform:scaleX(1.155)">-</i><i style="left:47px;transform:scaleX(1.037)">0</i><i style="left:56px;transform:scaleX(1.037)">9</i></div>
<div class="t kblack" style="left:825px;top:310px"><i style="left:0px;transform:scaleX(1.037)">0</i><i style="left:9px;transform:scaleX(1.154)">.</i><i style="left:14px;transform:scaleX(1.037)">6</i><i style="left:23px;transform:scaleX(1.037)">8</i><i style="left:36px;transform:scaleX(0.962)">(</i><i style="left:45px;transform:scaleX(1.037)">0</i><i style="left:54px;transform:scaleX(1.154)">.</i><i style="left:59px;transform:scaleX(1.037)">2</i><i style="left:68px;transform:scaleX(1.037)">6</i><i style="left:81px;transform:scaleX(1.155)">-</i><i style="left:95px;transform:scaleX(1.037)">1</i><i style="left:104px;transform:scaleX(1.154)">.</i><i style="left:109px;transform:scaleX(1.037)">0</i><i style="left:118px;transform:scaleX(1.037)">0</i><i style="left:127px;transform:scaleX(0.962)">)</i></div>
<div class="t kblack" style="left:983px;top:310px"><i style="left:0px;transform:scaleX(1.037)">0</i><i style="left:9px;transform:scaleX(1.154)">.</i><i style="left:14px;transform:scaleX(1.037)">0</i><i style="left:23px;transform:scaleX(1.037)">0</i><i style="left:32px;transform:scaleX(1.037)">2</i><i style="left:41px;transform:scaleX(1.037)">2</i><i style="left:50px;transform:scaleX(1.037)">2</i><i style="left:59px;transform:scaleX(1.037)">2</i><i style="left:68px;transform:scaleX(1.037)">1</i><i style="left:77px;transform:scaleX(1.037)">3</i><i style="left:86px;transform:scaleX(1.037)">2</i></div>
<div class="t kblack" style="left:1091px;top:310px"><i style="left:0px;transform:scaleX(1.037)">0</i><i style="left:9px;transform:scaleX(1.154)">.</i><i style="left:14px;transform:scaleX(1.037)">1</i><i style="left:23px;transform:scaleX(1.037)">8</i><i style="left:32px;transform:scaleX(1.037)">2</i><i style="left:41px;transform:scaleX(1.037)">9</i><i style="left:50px;transform:scaleX(1.037)">8</i><i style="left:59px;transform:scaleX(1.037)">5</i><i style="left:68px;transform:scaleX(1.037)">9</i><i style="left:77px;transform:scaleX(1.037)">7</i><i style="left:86px;transform:scaleX(1.037)">3</i></div>
<div class="t kblack" style="left:1193px;top:310px"><i style="left:0px;transform:scaleX(1.037)">0</i><i style="left:9px;transform:scaleX(1.154)">.</i><i style="left:14px;transform:scaleX(1.037)">1</i><i style="left:23px;transform:scaleX(1.037)">5</i><i style="left:36px;transform:scaleX(0.962)">(</i><i style="left:45px;transform:scaleX(1.037)">0</i><i style="left:54px;transform:scaleX(1.154)">.</i><i style="left:59px;transform:scaleX(1.037)">0</i><i style="left:68px;transform:scaleX(1.037)">1</i><i style="left:81px;transform:scaleX(1.155)">-</i><i style="left:95px;transform:scaleX(1.037)">0</i><i style="left:104px;transform:scaleX(1.154)">.</i><i style="left:109px;transform:scaleX(1.037)">2</i><i style="left:118px;transform:scaleX(1.037)">9</i><i style="left:127px;transform:scaleX(0.962)">)</i></div>
<div class="t kblack" style="left:1349px;top:310px"><i style="left:0px;transform:scaleX(1.037)">0</i><i style="left:9px;transform:scaleX(1.154)">.</i><i style="left:14px;transform:scaleX(1.037)">0</i><i style="left:23px;transform:scaleX(1.037)">3</i><i style="left:32px;transform:scaleX(1.037)">6</i><i style="left:41px;transform:scaleX(1.037)">3</i><i style="left:50px;transform:scaleX(1.037)">3</i><i style="left:59px;transform:scaleX(1.037)">1</i><i style="left:68px;transform:scaleX(1.037)">4</i><i style="left:77px;transform:scaleX(1.037)">0</i><i style="left:86px;transform:scaleX(1.037)">6</i></div>
<div class="t kblack" style="left:1487px;top:310px"><i style="left:0px;transform:scaleX(1.037)">7</i><i style="left:9px;transform:scaleX(1.154)">.</i><i style="left:14px;transform:scaleX(1.037)">9</i><i style="left:23px;transform:scaleX(1.037)">7</i><i style="left:32px;transform:scaleX(0.865)">E</i><i style="left:41px;transform:scaleX(1.155)">-</i><i style="left:47px;transform:scaleX(1.037)">0</i><i style="left:56px;transform:scaleX(1.037)">9</i></div>
<div class="t kgold b" style="left:33px;top:334px"><i style="left:-0.13px">A</i><i style="left:11px;transform:scaleX(1.049)">n</i><i style="left:21px;transform:scaleX(1.037)">x</i><i style="left:29.87px">D</i><i style="left:41px;transform:scaleX(1.037)">e</i><i style="left:50px;transform:scaleX(1.049)">p</i><i style="left:60px;transform:scaleX(1.037)">6</i><i style="left:69px;transform:scaleX(0.840)">F</i><i style="left:77px;transform:scaleX(0.923)">i</i><i style="left:81px;transform:scaleX(1.049)">n</i><i style="left:91px;transform:scaleX(1.037)">a</i><i style="left:100px;transform:scaleX(0.923)">l</i><i style="left:104px;transform:scaleX(1.037)">_</i><i style="left:113px;transform:scaleX(1.155)">t</i><i style="left:119px;transform:scaleX(1.049)">h</i><i style="left:129px;transform:scaleX(1.037)">e</i><i style="left:138px;transform:scaleX(1.155)">t</i><i style="left:144px;transform:scaleX(1.037)">a</i><i style="left:153px;transform:scaleX(1.037)">_</i><i style="left:162px;transform:scaleX(1.037)">1</i><i style="left:171px;transform:scaleX(1.037)">7</i></div>
<div class="t kgold b" style="left:246px;top:334px"><i style="left:-0.13px">A</i><i style="left:11px;transform:scaleX(1.049)">n</i><i style="left:21px;transform:scaleX(1.037)">x</i><i style="left:29.87px">D</i><i style="left:41px;transform:scaleX(1.037)">e</i><i style="left:50px;transform:scaleX(1.049)">p</i><i style="left:60px;transform:scaleX(1.037)">6</i><i style="left:69px;transform:scaleX(0.840)">F</i><i style="left:77px;transform:scaleX(0.923)">i</i><i style="left:81px;transform:scaleX(1.049)">n</i><i style="left:91px;transform:scaleX(1.037)">a</i><i style="left:100px;transform:scaleX(0.923)">l</i><i style="left:104px;transform:scaleX(1.037)">_</i><i style="left:113px;transform:scaleX(1.155)">t</i><i style="left:119px;transform:scaleX(1.049)">h</i><i style="left:129px;transform:scaleX(1.037)">e</i><i style="left:138px;transform:scaleX(1.155)">t</i><i style="left:144px;transform:scaleX(1.037)">a</i><i style="left:153px;transform:scaleX(1.037)">_</i><i style="left:162px;transform:scaleX(1.037)">1</i><i style="left:171px;transform:scaleX(1.037)">3</i></div>
<div class="t kgold b" style="left:459px;top:334px"><i style="left:0px;transform:scaleX(1.155)">-</i><i style="left:6px;transform:scaleX(1.037)">0</i><i style="left:15px;transform:scaleX(1.154)">.</i><i style="left:20px;transform:scaleX(1.037)">3</i><i style="left:29px;transform:scaleX(1.037)">0</i><i style="left:42px;transform:scaleX(1.155)">(</i><i style="left:48px;transform:scaleX(1.155)">-</i><i style="left:54px;transform:scaleX(1.037)">0</i><i style="left:63px;transform:scaleX(1.154)">.</i><i style="left:68px;transform:scaleX(1.037)">7</i><i style="left:77px;transform:scaleX(1.037)">1</i><i style="left:90px;transform:scaleX(1.155)">-</i><i style="left:104px;transform:scaleX(1.037)">0</i><i style="left:113px;transform:scaleX(1.154)">.</i><i style="left:118px;transform:scaleX(1.037)">4</i><i style="left:127px;transform:scaleX(1.037)">8</i><i style="left:136px;transform:scaleX(1.155)">)</i></div>
<div class="t kgold b" style="left:615px;top:334px"><i style="left:0px;transform:scaleX(1.037)">0</i><i style="left:9px;transform:scaleX(1.154)">.</i><i style="left:14px;transform:scaleX(1.037)">6</i><i style="left:23px;transform:scaleX(1.037)">8</i><i style="left:32px;transform:scaleX(1.037)">0</i><i style="left:41px;transform:scaleX(1.037)">5</i><i style="left:50px;transform:scaleX(1.037)">8</i><i style="left:59px;transform:scaleX(1.037)">1</i><i style="left:68px;transform:scaleX(1.037)">8</i><i style="left:77px;transform:scaleX(1.037)">8</i><i style="left:86px;transform:scaleX(1.037)">5</i></div>
<div class="t kgold b" style="left:723px;top:334px"><i style="left:0px;transform:scaleX(1.037)">0</i><i style="left:9px;transform:scaleX(1.154)">.</i><i style="left:14px;transform:scaleX(1.037)">0</i><i style="left:23px;transform:scaleX(1.037)">0</i><i style="left:32px;transform:scaleX(1.037)">6</i><i style="left:41px;transform:scaleX(1.037)">3</i><i style="left:50px;transform:scaleX(1.037)">7</i><i style="left:59px;transform:scaleX(1.037)">1</i><i style="left:68px;transform:scaleX(1.037)">7</i><i style="left:77px;transform:scaleX(1.037)">2</i><i style="left:86px;transform:scaleX(1.037)">2</i></div>
<div class="t kgold b" style="left:825px;top:334px"><i style="left:0px;transform:scaleX(1.037)">0</i><i style="left:9px;transform:scaleX(1.154)">.</i><i style="left:14px;transform:scaleX(1.037)">3</i><i style="left:23px;transform:scaleX(1.037)">2</i><i style="left:36px;transform:scaleX(1.155)">(</i><i style="left:42px;transform:scaleX(1.155)">-</i><i style="left:48px;transform:scaleX(1.037)">1</i><i style="left:57px;transform:scaleX(1.154)">.</i><i style="left:62px;transform:scaleX(1.037)">0</i><i style="left:71px;transform:scaleX(1.037)">0</i><i style="left:84px;transform:scaleX(1.155)">-</i><i style="left:98px;transform:scaleX(1.037)">1</i><i style="left:107px;transform:scaleX(1.154)">.</i><i style="left:112px;transform:scaleX(1.037)">0</i><i style="left:121px;transform:scaleX(1.037)">0</i><i style="left:130px;transform:scaleX(1.155)">)</i></div>
<div class="t kgold b" style="left:983px;top:334px"><i style="left:0px;transform:scaleX(1.037)">0</i><i style="left:9px;transform:scaleX(1.154)">.</i><i style="left:14px;transform:scaleX(1.037)">7</i><i style="left:23px;transform:scaleX(1.037)">0</i><i style="left:32px;transform:scaleX(1.037)">9</i><i style="left:41px;transform:scaleX(1.037)">3</i><i style="left:50px;transform:scaleX(1.037)">7</i><i style="left:59px;transform:scaleX(1.037)">4</i><i style="left:68px;transform:scaleX(1.037)">0</i><i style="left:77px;transform:scaleX(1.037)">7</i><i style="left:86px;transform:scaleX(1.037)">8</i></div>
<div class="t kgold b" style="left:1091px;top:334px"><i style="left:0px;transform:scaleX(1.037)">0</i><i style="left:9px;transform:scaleX(1.154)">.</i><i style="left:14px;transform:scaleX(1.037)">5</i><i style="left:23px;transform:scaleX(1.037)">9</i><i style="left:32px;transform:scaleX(1.037)">3</i><i style="left:41px;transform:scaleX(1.037)">5</i><i style="left:50px;transform:scaleX(1.037)">7</i><i style="left:59px;transform:scaleX(1.037)">2</i><i style="left:68px;transform:scaleX(1.037)">0</i><i style="left:77px;transform:scaleX(1.037)">0</i><i style="left:86px;transform:scaleX(1.037)">4</i></div>
<div class="t kgold b" style="left:1193px;top:334px"><i style="left:0px;transform:scaleX(1.155)">-</i><i style="left:6px;transform:scaleX(1.037)">0</i><i style="left:15px;transform:scaleX(1.154)">.</i><i style="left:20px;transform:scaleX(1.037)">7</i><i style="left:29px;transform:scaleX(1.037)">0</i><i style="left:42px;transform:scaleX(1.155)">(</i><i style="left:48px;transform:scaleX(1.155)">-</i><i style="left:54px;transform:scaleX(1.037)">0</i><i style="left:63px;transform:scaleX(1.154)">.</i><i style="left:68px;transform:scaleX(1.037)">9</i><i style="left:77px;transform:scaleX(1.037)">4</i><i style="left:90px;transform:scaleX(1.155)">-</i><i style="left:104px;transform:scaleX(1.037)">0</i><i style="left:113px;transform:scaleX(1.154)">.</i><i style="left:118px;transform:scaleX(1.037)">7</i><i style="left:127px;transform:scaleX(1.037)">7</i><i style="left:136px;transform:scaleX(1.155)">)</i></div>
<div class="t kgold b" style="left:1349px;top:334px"><i style="left:0px;transform:scaleX(1.037)">0</i><i style="left:9px;transform:scaleX(1.154)">.</i><i style="left:14px;transform:scaleX(1.037)">4</i><i style="left:23px;transform:scaleX(1.037)">2</i><i style="left:32px;transform:scaleX(1.037)">7</i><i style="left:41px;transform:scaleX(1.037)">9</i><i style="left:50px;transform:scaleX(1.037)">1</i><i style="left:59px;transform:scaleX(1.037)">5</i><i style="left:68px;transform:scaleX(1.037)">0</i><i style="left:77px;transform:scaleX(1.037)">1</i><i style="left:86px;transform:scaleX(1.037)">9</i></div>
<div class="t kgold b" style="left:1457px;top:334px"><i style="left:0px;transform:scaleX(1.037)">0</i><i style="left:9px;transform:scaleX(1.154)">.</i><i style="left:14px;transform:scaleX(1.037)">1</i><i style="left:23px;transform:scaleX(1.037)">5</i><i style="left:32px;transform:scaleX(1.037)">0</i><i style="left:41px;transform:scaleX(1.037)">8</i><i style="left:50px;transform:scaleX(1.037)">8</i><i style="left:59px;transform:scaleX(1.037)">7</i><i style="left:68px;transform:scaleX(1.037)">9</i><i style="left:77px;transform:scaleX(1.037)">5</i><i style="left:86px;transform:scaleX(1.037)">9</i></div>
<div class="t kolive b" style="left:33px;top:358px"><i style="left:-0.13px">A</i><i style="left:11px;transform:scaleX(1.049)">n</i><i style="left:21px;transform:scaleX(1.037)">x</i><i style="left:29.87px">D</i><i style="left:41px;transform:scaleX(1.037)">e</i><i style="left:50px;transform:scaleX(1.049)">p</i><i style="left:60px;transform:scaleX(1.037)">6</i><i style="left:69px;transform:scaleX(0.840)">F</i><i style="left:77px;transform:scaleX(0.923)">i</i><i style="left:81px;transform:scaleX(1.049)">n</i><i style="left:91px;transform:scaleX(1.037)">a</i><i style="left:100px;transform:scaleX(0.923)">l</i><i style="left:104px;transform:scaleX(1.037)">_</i><i style="left:113px;transform:scaleX(1.155)">t</i><i style="left:119px;transform:scaleX(1.049)">h</i><i style="left:129px;transform:scaleX(1.037)">e</i><i style="left:138px;transform:scaleX(1.155)">t</i><i style="left:144px;transform:scaleX(1.037)">a</i><i style="left:153px;transform:scaleX(1.037)">_</i><i style="left:162px;transform:scaleX(1.037)">1</i><i style="left:171px;transform:scaleX(1.037)">7</i></div>
<div class="t kolive b" style="left:246px;top:358px"><i style="left:-0.13px">A</i><i style="left:11px;transform:scaleX(1.049)">n</i><i style="left:21px;transform:scaleX(1.037)">x</i><i style="left:29.87px">D</i><i style="left:41px;transform:scaleX(1.037)">e</i><i style="left:50px;transform:scaleX(1.049)">p</i><i style="left:60px;transform:scaleX(1.037)">6</i><i style="left:69px;transform:scaleX(0.840)">F</i><i style="left:77px;transform:scaleX(0.923)">i</i><i style="left:81px;transform:scaleX(1.049)">n</i><i style="left:91px;transform:scaleX(1.037)">a</i><i style="left:100px;transform:scaleX(0.923)">l</i><i style="left:104px;transform:scaleX(1.037)">_</i><i style="left:113px;transform:scaleX(1.155)">t</i><i style="left:119px;transform:scaleX(1.049)">h</i><i style="left:129px;transform:scaleX(1.037)">e</i><i style="left:138px;transform:scaleX(1.155)">t</i><i style="left:144px;transform:scaleX(1.037)">a</i><i style="left:153px;transform:scaleX(1.037)">_</i><i style="left:162px;transform:scaleX(1.037)">1</i><i style="left:171px;transform:scaleX(1.037)">3</i><i style="left:180px;transform:scaleX(1.037)">_</i><i style="left:189px;transform:scaleX(1.037)">1</i><i style="left:198px;transform:scaleX(1.037)">5</i></div>
<div class="t kolive b" style="left:459px;top:358px"><i style="left:0px;transform:scaleX(1.037)">0</i><i style="left:9px;transform:scaleX(1.154)">.</i><i style="left:14px;transform:scaleX(1.037)">2</i><i style="left:23px;transform:scaleX(1.037)">2</i><i style="left:36px;transform:scaleX(1.155)">(</i><i style="left:42px;transform:scaleX(1.155)">-</i><i style="left:48px;transform:scaleX(1.037)">0</i><i style="left:57px;transform:scaleX(1.154)">.</i><i style="left:62px;transform:scaleX(1.037)">2</i><i style="left:71px;transform:scaleX(1.037)">2</i><i style="left:84px;transform:scaleX(1.155)">-</i><i style="left:98px;transform:scaleX(1.037)">0</i><i style="left:107px;transform:scaleX(1.154)">.</i><i style="left:112px;transform:scaleX(1.037)">6</i><i style="left:121px;transform:scaleX(1.037)">3</i><i style="left:130px;transform:scaleX(1.155)">)</i></div>
<div class="t kolive b" style="left:615px;top:358px"><i style="left:0px;transform:scaleX(1.037)">0</i><i style="left:9px;transform:scaleX(1.154)">.</i><i style="left:14px;transform:scaleX(1.037)">2</i><i style="left:23px;transform:scaleX(1.037)">0</i><i style="left:32px;transform:scaleX(1.037)">7</i><i style="left:41px;transform:scaleX(1.037)">5</i><i style="left:50px;transform:scaleX(1.037)">1</i><i style="left:59px;transform:scaleX(1.037)">8</i><i style="left:68px;transform:scaleX(1.037)">3</i><i style="left:77px;transform:scaleX(1.037)">4</i><i style="left:86px;transform:scaleX(1.037)">4</i></div>
<div class="t kolive b" style="left:723px;top:358px"><i style="left:0px;transform:scaleX(1.037)">0</i><i style="left:9px;transform:scaleX(1.154)">.</i><i style="left:14px;transform:scaleX(1.037)">0</i><i style="left:23px;transform:scaleX(1.037)">2</i><i style="left:32px;transform:scaleX(1.037)">7</i><i style="left:41px;transform:scaleX(1.037)">0</i><i style="left:50px;transform:scaleX(1.037)">3</i><i style="left:59px;transform:scaleX(1.037)">0</i><i style="left:68px;transform:scaleX(1.037)">9</i><i style="left:77px;transform:scaleX(1.037)">0</i><i style="left:86px;transform:scaleX(1.037)">5</i></div>
<div class="t kolive b" style="left:825px;top:358px"><i style="left:0px;transform:scaleX(1.037)">1</i><i style="left:9px;transform:scaleX(1.154)">.</i><i style="left:14px;transform:scaleX(1.037)">0</i><i style="left:23px;transform:scaleX(1.037)">0</i><i style="left:36px;transform:scaleX(1.155)">(</i><i style="left:42px;transform:scaleX(1.155)">-</i><i style="left:48px;transform:scaleX(1.037)">0</i><i style="left:57px;transform:scaleX(1.154)">.</i><i style="left:62px;transform:scaleX(1.037)">3</i><i style="left:71px;transform:scaleX(1.037)">9</i><i style="left:84px;transform:scaleX(1.155)">-</i><i style="left:98px;transform:scaleX(1.037)">1</i><i style="left:107px;transform:scaleX(1.154)">.</i><i style="left:112px;transform:scaleX(1.037)">0</i><i style="left:121px;transform:scaleX(1.037)">0</i><i style="left:130px;transform:scaleX(1.155)">)</i></div>
<div class="t kolive b" style="left:983px;top:358px"><i style="left:0px;transform:scaleX(1.037)">0</i><i style="left:9px;transform:scaleX(1.154)">.</i><i style="left:14px;transform:scaleX(1.037)">1</i><i style="left:23px;transform:scaleX(1.037)">6</i><i style="left:32px;transform:scaleX(1.037)">4</i><i style="left:41px;transform:scaleX(1.037)">5</i><i style="left:50px;transform:scaleX(1.037)">3</i><i style="left:59px;transform:scaleX(1.037)">7</i><i style="left:68px;transform:scaleX(1.037)">9</i><i style="left:77px;transform:scaleX(1.037)">5</i><i style="left:86px;transform:scaleX(1.037)">2</i></div>
<div class="t kolive b" style="left:1091px;top:358px"><i style="left:0px;transform:scaleX(1.037)">0</i><i style="left:9px;transform:scaleX(1.154)">.</i><i style="left:14px;transform:scaleX(1.037)">8</i><i style="left:23px;transform:scaleX(1.037)">1</i><i style="left:32px;transform:scaleX(1.037)">6</i><i style="left:41px;transform:scaleX(1.037)">9</i><i style="left:50px;transform:scaleX(1.037)">2</i><i style="left:59px;transform:scaleX(1.037)">0</i><i style="left:68px;transform:scaleX(1.037)">9</i><i style="left:77px;transform:scaleX(1.037)">5</i><i style="left:86px;transform:scaleX(1.037)">8</i></div>
<div class="t kolive b" style="left:1193px;top:358px"><i style="left:0px;transform:scaleX(1.155)">-</i><i style="left:6px;transform:scaleX(1.037)">0</i><i style="left:15px;transform:scaleX(1.154)">.</i><i style="left:20px;transform:scaleX(1.037)">1</i><i style="left:29px;transform:scaleX(1.037)">9</i><i style="left:42px;transform:scaleX(1.155)">(</i><i style="left:48px;transform:scaleX(1.155)">-</i><i style="left:54px;transform:scaleX(1.037)">0</i><i style="left:63px;transform:scaleX(1.154)">.</i><i style="left:68px;transform:scaleX(1.037)">7</i><i style="left:77px;transform:scaleX(1.037)">5</i><i style="left:90px;transform:scaleX(1.155)">-</i><i style="left:104px;transform:scaleX(1.037)">0</i><i style="left:113px;transform:scaleX(1.154)">.</i><i style="left:118px;transform:scaleX(1.037)">6</i><i style="left:127px;transform:scaleX(1.037)">6</i><i style="left:136px;transform:scaleX(1.155)">)</i></div>
<div class="t kolive b" style="left:1349px;top:358px"><i style="left:0px;transform:scaleX(1.037)">0</i><i style="left:9px;transform:scaleX(1.154)">.</i><i style="left:14px;transform:scaleX(1.037)">7</i><i style="left:23px;transform:scaleX(1.037)">5</i><i style="left:32px;transform:scaleX(1.037)">7</i><i style="left:41px;transform:scaleX(1.037)">5</i><i style="left:50px;transform:scaleX(1.037)">2</i><i style="left:59px;transform:scaleX(1.037)">8</i><i style="left:68px;transform:scaleX(1.037)">5</i><i style="left:77px;transform:scaleX(1.037)">0</i><i style="left:86px;transform:scaleX(1.037)">6</i></div>
<div class="t kolive b" style="left:1457px;top:358px"><i style="left:0px;transform:scaleX(1.037)">0</i><i style="left:9px;transform:scaleX(1.154)">.</i><i style="left:14px;transform:scaleX(1.037)">1</i><i style="left:23px;transform:scaleX(1.037)">1</i><i style="left:32px;transform:scaleX(1.037)">8</i><i style="left:41px;transform:scaleX(1.037)">3</i><i style="left:50px;transform:scaleX(1.037)">0</i><i style="left:59px;transform:scaleX(1.037)">6</i><i style="left:68px;transform:scaleX(1.037)">4</i><i style="left:77px;transform:scaleX(1.037)">3</i><i style="left:86px;transform:scaleX(1.037)">7</i></div>
<div class="t kred b" style="left:33px;top:382px"><i style="left:-0.13px">A</i><i style="left:11px;transform:scaleX(1.049)">n</i><i style="left:21px;transform:scaleX(1.037)">x</i><i style="left:29.87px">D</i><i style="left:41px;transform:scaleX(1.037)">e</i><i style="left:50px;transform:scaleX(1.049)">p</i><i style="left:60px;transform:scaleX(1.037)">6</i><i style="left:69px;transform:scaleX(0.840)">F</i><i style="left:77px;transform:scaleX(0.923)">i</i><i style="left:81px;transform:scaleX(1.049)">n</i><i style="left:91px;transform:scaleX(1.037)">a</i><i style="left:100px;transform:scaleX(0.923)">l</i><i style="left:104px;transform:scaleX(1.037)">_</i><i style="left:113px;transform:scaleX(1.155)">t</i><i style="left:119px;transform:scaleX(1.049)">h</i><i style="left:129px;transform:scaleX(1.037)">e</i><i style="left:138px;transform:scaleX(1.155)">t</i><i style="left:144px;transform:scaleX(1.037)">a</i><i style="left:153px;transform:scaleX(1.037)">_</i><i style="left:162px;transform:scaleX(1.037)">1</i><i style="left:171px;transform:scaleX(1.037)">7</i></div>
<div class="t kred b" style="left:246px;top:382px"><i style="left:-0.13px">A</i><i style="left:11px;transform:scaleX(1.049)">n</i><i style="left:21px;transform:scaleX(1.037)">x</i><i style="left:29.87px">D</i><i style="left:41px;transform:scaleX(1.037)">e</i><i style="left:50px;transform:scaleX(1.049)">p</i><i style="left:60px;transform:scaleX(1.037)">6</i><i style="left:69px;transform:scaleX(0.840)">F</i><i style="left:77px;transform:scaleX(0.923)">i</i><i style="left:81px;transform:scaleX(1.049)">n</i><i style="left:91px;transform:scaleX(1.037)">a</i><i style="left:100px;transform:scaleX(0.923)">l</i><i style="left:104px;transform:scaleX(1.037)">_</i><i style="left:113px;transform:scaleX(1.155)">t</i><i style="left:119px;transform:scaleX(1.049)">h</i><i style="left:129px;transform:scaleX(1.037)">e</i><i style="left:138px;transform:scaleX(1.155)">t</i><i style="left:144px;transform:scaleX(1.037)">a</i><i style="left:153px;transform:scaleX(1.037)">_</i><i style="left:162px;transform:scaleX(1.037)">1</i><i style="left:171px;transform:scaleX(1.037)">5</i><i style="left:180px;transform:scaleX(1.037)">_</i><i style="left:189px;transform:scaleX(1.037)">1</i><i style="left:198px;transform:scaleX(1.037)">7</i></div>
<div class="t kred b" style="left:459px;top:382px"><i style="left:0px;transform:scaleX(1.155)">-</i><i style="left:6px;transform:scaleX(1.037)">0</i><i style="left:15px;transform:scaleX(1.154)">.</i><i style="left:20px;transform:scaleX(1.037)">0</i><i style="left:29px;transform:scaleX(1.037)">3</i><i style="left:42px;transform:scaleX(1.155)">(</i><i style="left:48px;transform:scaleX(1.155)">-</i><i style="left:54px;transform:scaleX(1.037)">0</i><i style="left:63px;transform:scaleX(1.154)">.</i><i style="left:68px;transform:scaleX(1.037)">6</i><i style="left:77px;transform:scaleX(1.037)">7</i><i style="left:90px;transform:scaleX(1.155)">-</i><i style="left:104px;transform:scaleX(1.037)">0</i><i style="left:113px;transform:scaleX(1.154)">.</i><i style="left:118px;transform:scaleX(1.037)">6</i><i style="left:127px;transform:scaleX(1.037)">5</i><i style="left:136px;transform:scaleX(1.155)">)</i></div>
<div class="t kred b" style="left:615px;top:382px"><i style="left:0px;transform:scaleX(1.037)">0</i><i style="left:9px;transform:scaleX(1.154)">.</i><i style="left:14px;transform:scaleX(1.037)">7</i><i style="left:23px;transform:scaleX(1.037)">0</i><i style="left:32px;transform:scaleX(1.037)">1</i><i style="left:41px;transform:scaleX(1.037)">7</i><i style="left:50px;transform:scaleX(1.037)">6</i><i style="left:59px;transform:scaleX(1.037)">6</i><i style="left:68px;transform:scaleX(1.037)">4</i><i style="left:77px;transform:scaleX(1.037)">0</i><i style="left:86px;transform:scaleX(1.037)">5</i></div>
<div class="t kred b" style="left:723px;top:382px"><i style="left:0px;transform:scaleX(1.037)">0</i><i style="left:9px;transform:scaleX(1.154)">.</i><i style="left:14px;transform:scaleX(1.037)">0</i><i style="left:23px;transform:scaleX(1.037)">7</i><i style="left:32px;transform:scaleX(1.037)">8</i><i style="left:41px;transform:scaleX(1.037)">2</i><i style="left:50px;transform:scaleX(1.037)">0</i><i style="left:59px;transform:scaleX(1.037)">9</i><i style="left:68px;transform:scaleX(1.037)">2</i><i style="left:77px;transform:scaleX(1.037)">6</i><i style="left:86px;transform:scaleX(1.037)">5</i></div>
<div class="t kred b" style="left:825px;top:382px"><i style="left:0px;transform:scaleX(1.155)">-</i><i style="left:6px;transform:scaleX(1.037)">1</i><i style="left:15px;transform:scaleX(1.154)">.</i><i style="left:20px;transform:scaleX(1.037)">0</i><i style="left:29px;transform:scaleX(1.037)">0</i><i style="left:42px;transform:scaleX(1.155)">(</i><i style="left:48px;transform:scaleX(1.155)">-</i><i style="left:54px;transform:scaleX(1.037)">1</i><i style="left:63px;transform:scaleX(1.154)">.</i><i style="left:68px;transform:scaleX(1.037)">0</i><i style="left:77px;transform:scaleX(1.037)">0</i><i style="left:90px;transform:scaleX(1.155)">-</i><i style="left:104px;transform:scaleX(1.037)">1</i><i style="left:113px;transform:scaleX(1.154)">.</i><i style="left:118px;transform:scaleX(1.037)">0</i><i style="left:127px;transform:scaleX(1.037)">0</i><i style="left:136px;transform:scaleX(1.155)">)</i></div>
<div class="t kred b" style="left:983px;top:382px"><i style="left:0px;transform:scaleX(1.037)">0</i><i style="left:9px;transform:scaleX(1.154)">.</i><i style="left:14px;transform:scaleX(1.037)">4</i><i style="left:23px;transform:scaleX(1.037)">4</i><i style="left:32px;transform:scaleX(1.037)">0</i><i style="left:41px;transform:scaleX(1.037)">2</i><i style="left:50px;transform:scaleX(1.037)">5</i><i style="left:59px;transform:scaleX(1.037)">8</i><i style="left:68px;transform:scaleX(1.037)">1</i><i style="left:77px;transform:scaleX(1.037)">0</i><i style="left:86px;transform:scaleX(1.037)">7</i></div>
<div class="t kred b" style="left:1091px;top:382px"><i style="left:0px;transform:scaleX(1.037)">0</i><i style="left:9px;transform:scaleX(1.154)">.</i><i style="left:14px;transform:scaleX(1.037)">2</i><i style="left:23px;transform:scaleX(1.037)">1</i><i style="left:32px;transform:scaleX(1.037)">5</i><i style="left:41px;transform:scaleX(1.037)">7</i><i style="left:50px;transform:scaleX(1.037)">3</i><i style="left:59px;transform:scaleX(1.037)">1</i><i style="left:68px;transform:scaleX(1.037)">8</i><i style="left:77px;transform:scaleX(1.037)">1</i><i style="left:86px;transform:scaleX(1.037)">1</i></div>
<div class="t kred b" style="left:1193px;top:382px"><i style="left:0px;transform:scaleX(1.037)">0</i><i style="left:9px;transform:scaleX(1.154)">.</i><i style="left:14px;transform:scaleX(1.037)">4</i><i style="left:23px;transform:scaleX(1.037)">1</i><i style="left:36px;transform:scaleX(1.155)">(</i><i style="left:42px;transform:scaleX(1.155)">-</i><i style="left:48px;transform:scaleX(1.037)">0</i><i style="left:57px;transform:scaleX(1.154)">.</i><i style="left:62px;transform:scaleX(1.037)">6</i><i style="left:71px;transform:scaleX(1.037)">2</i><i style="left:84px;transform:scaleX(1.155)">-</i><i style="left:98px;transform:scaleX(1.037)">0</i><i style="left:107px;transform:scaleX(1.154)">.</i><i style="left:112px;transform:scaleX(1.037)">9</i><i style="left:121px;transform:scaleX(1.037)">5</i><i style="left:130px;transform:scaleX(1.155)">)</i></div>
<div class="t kred b" style="left:1349px;top:382px"><i style="left:0px;transform:scaleX(1.037)">0</i><i style="left:9px;transform:scaleX(1.154)">.</i><i style="left:14px;transform:scaleX(1.037)">5</i><i style="left:23px;transform:scaleX(1.037)">3</i><i style="left:32px;transform:scaleX(1.037)">7</i><i style="left:41px;transform:scaleX(1.037)">6</i><i style="left:50px;transform:scaleX(1.037)">7</i><i style="left:59px;transform:scaleX(1.037)">3</i><i style="left:68px;transform:scaleX(1.037)">8</i><i style="left:77px;transform:scaleX(1.037)">3</i><i style="left:86px;transform:scaleX(1.037)">2</i></div>
<div class="t kred b" style="left:1457px;top:382px"><i style="left:0px;transform:scaleX(1.037)">0</i><i style="left:9px;transform:scaleX(1.154)">.</i><i style="left:14px;transform:scaleX(1.037)">7</i><i style="left:23px;transform:scaleX(1.037)">9</i><i style="left:32px;transform:scaleX(1.037)">3</i><i style="left:41px;transform:scaleX(1.037)">7</i><i style="left:50px;transform:scaleX(1.037)">8</i><i style="left:59px;transform:scaleX(1.037)">8</i><i style="left:68px;transform:scaleX(1.037)">6</i><i style="left:77px;transform:scaleX(1.037)">7</i><i style="left:86px;transform:scaleX(1.037)">6</i></div>
<div class="t kblack" style="left:33px;top:406px"><i style="left:0px;transform:scaleX(0.961)">A</i><i style="left:10px;transform:scaleX(1.037)">n</i><i style="left:19.10px">x</i><i style="left:26.87px">D</i><i style="left:38px;transform:scaleX(1.037)">e</i><i style="left:47px;transform:scaleX(1.037)">p</i><i style="left:56px;transform:scaleX(1.037)">6</i><i style="left:65px;transform:scaleX(0.840)">F</i><i style="left:73px;transform:scaleX(1.154)">i</i><i style="left:77px;transform:scaleX(1.037)">n</i><i style="left:86px;transform:scaleX(1.037)">a</i><i style="left:95px;transform:scaleX(1.154)">l</i><i style="left:99px;transform:scaleX(1.037)">_</i><i style="left:108px;transform:scaleX(1.384)">t</i><i style="left:114px;transform:scaleX(1.037)">h</i><i style="left:123px;transform:scaleX(1.037)">e</i><i style="left:132px;transform:scaleX(1.384)">t</i><i style="left:138px;transform:scaleX(1.037)">a</i><i style="left:147px;transform:scaleX(1.037)">_</i><i style="left:156px;transform:scaleX(1.037)">1</i><i style="left:165px;transform:scaleX(1.037)">7</i></div>
<div class="t kblack" style="left:246px;top:406px"><i style="left:0px;transform:scaleX(0.865)">P</i><i style="left:9px;transform:scaleX(0.769)">S</i><i style="left:17px;transform:scaleX(0.865)">Y</i><i style="left:26px;transform:scaleX(0.888)">C</i><i style="left:35.87px">H</i><i style="left:47px;transform:scaleX(1.037)">6</i><i style="left:56px;transform:scaleX(1.037)">_</i><i style="left:65px;transform:scaleX(1.154)">I</i><i style="left:70px;transform:scaleX(0.888)">R</i><i style="left:80px;transform:scaleX(0.944)">T</i></div>
<div class="t kblack" style="left:459px;top:406px"><i style="left:0px;transform:scaleX(1.037)">0</i><i style="left:9px;transform:scaleX(1.154)">.</i><i style="left:14px;transform:scaleX(1.037)">3</i><i style="left:23px;transform:scaleX(1.037)">5</i><i style="left:36px;transform:scaleX(0.962)">(</i><i style="left:45px;transform:scaleX(1.037)">0</i><i style="left:54px;transform:scaleX(1.154)">.</i><i style="left:59px;transform:scaleX(1.037)">2</i><i style="left:68px;transform:scaleX(1.037)">5</i><i style="left:81px;transform:scaleX(1.155)">-</i><i style="left:95px;transform:scaleX(1.037)">0</i><i style="left:104px;transform:scaleX(1.154)">.</i><i style="left:109px;transform:scaleX(1.037)">4</i><i style="left:118px;transform:scaleX(1.037)">3</i><i style="left:127px;transform:scaleX(0.962)">)</i></div>
<div class="t kblack" style="left:645px;top:406px"><i style="left:0px;transform:scaleX(1.037)">4</i><i style="left:9px;transform:scaleX(1.154)">.</i><i style="left:14px;transform:scaleX(1.037)">8</i><i style="left:23px;transform:scaleX(1.037)">1</i><i style="left:32px;transform:scaleX(0.865)">E</i><i style="left:41px;transform:scaleX(1.155)">-</i><i style="left:47px;transform:scaleX(1.037)">1</i><i style="left:56px;transform:scaleX(1.037)">1</i></div>
<div class="t kblack" style="left:753px;top:406px"><i style="left:0px;transform:scaleX(1.037)">1</i><i style="left:9px;transform:scaleX(1.154)">.</i><i style="left:14px;transform:scaleX(1.037)">3</i><i style="left:23px;transform:scaleX(1.037)">6</i><i style="left:32px;transform:scaleX(0.865)">E</i><i style="left:41px;transform:scaleX(1.155)">-</i><i style="left:47px;transform:scaleX(1.037)">0</i><i style="left:56px;transform:scaleX(1.037)">6</i></div>
<div class="t kblack" style="left:825px;top:406px"><i style="left:0px;transform:scaleX(1.037)">0</i><i style="left:9px;transform:scaleX(1.154)">.</i><i style="left:14px;transform:scaleX(1.037)">6</i><i style="left:23px;transform:scaleX(1.037)">9</i><i style="left:36px;transform:scaleX(0.962)">(</i><i style="left:45px;transform:scaleX(1.037)">0</i><i style="left:54px;transform:scaleX(1.154)">.</i><i style="left:59px;transform:scaleX(1.037)">2</i><i style="left:68px;transform:scaleX(1.037)">4</i><i style="left:81px;transform:scaleX(1.155)">-</i><i style="left:95px;transform:scaleX(1.037)">1</i><i style="left:104px;transform:scaleX(1.154)">.</i><i style="left:109px;transform:scaleX(1.037)">0</i><i style="left:118px;transform:scaleX(1.037)">0</i><i style="left:127px;transform:scaleX(0.962)">)</i></div>
<div class="t kblack" style="left:983px;top:406px"><i style="left:0px;transform:scaleX(1.037)">0</i><i style="left:9px;transform:scaleX(1.154)">.</i><i style="left:14px;transform:scaleX(1.037)">0</i><i style="left:23px;transform:scaleX(1.037)">0</i><i style="left:32px;transform:scaleX(1.037)">3</i><i style="left:41px;transform:scaleX(1.037)">9</i><i style="left:50px;transform:scaleX(1.037)">4</i><i style="left:59px;transform:scaleX(1.037)">6</i><i style="left:68px;transform:scaleX(1.037)">8</i><i style="left:77px;transform:scaleX(1.037)">2</i><i style="left:86px;transform:scaleX(1.037)">2</i></div>
<div class="t kblack" style="left:1100px;top:406px"><i style="left:0px;transform:scaleX(1.037)">0</i><i style="left:9px;transform:scaleX(1.154)">.</i><i style="left:14px;transform:scaleX(1.037)">1</i><i style="left:23px;transform:scaleX(1.037)">9</i><i style="left:32px;transform:scaleX(1.037)">3</i><i style="left:41px;transform:scaleX(1.037)">9</i><i style="left:50px;transform:scaleX(1.037)">9</i><i style="left:59px;transform:scaleX(1.037)">9</i><i style="left:68px;transform:scaleX(1.037)">4</i><i style="left:77px;transform:scaleX(1.037)">7</i></div>
<div class="t kblack" style="left:1193px;top:406px"><i style="left:0px;transform:scaleX(1.037)">0</i><i style="left:9px;transform:scaleX(1.154)">.</i><i style="left:14px;transform:scaleX(1.037)">2</i><i style="left:23px;transform:scaleX(1.037)">1</i><i style="left:36px;transform:scaleX(0.962)">(</i><i style="left:45px;transform:scaleX(1.037)">0</i><i style="left:54px;transform:scaleX(1.154)">.</i><i style="left:59px;transform:scaleX(1.037)">0</i><i style="left:68px;transform:scaleX(1.037)">2</i><i style="left:81px;transform:scaleX(1.155)">-</i><i style="left:95px;transform:scaleX(1.037)">0</i><i style="left:104px;transform:scaleX(1.154)">.</i><i style="left:109px;transform:scaleX(1.037)">3</i><i style="left:118px;transform:scaleX(1.037)">8</i><i style="left:127px;transform:scaleX(0.962)">)</i></div>
<div class="t kblack" style="left:1349px;top:406px"><i style="left:0px;transform:scaleX(1.037)">0</i><i style="left:9px;transform:scaleX(1.154)">.</i><i style="left:14px;transform:scaleX(1.037)">0</i><i style="left:23px;transform:scaleX(1.037)">2</i><i style="left:32px;transform:scaleX(1.037)">7</i><i style="left:41px;transform:scaleX(1.037)">7</i><i style="left:50px;transform:scaleX(1.037)">6</i><i style="left:59px;transform:scaleX(1.037)">6</i><i style="left:68px;transform:scaleX(1.037)">9</i><i style="left:77px;transform:scaleX(1.037)">4</i><i style="left:86px;transform:scaleX(1.037)">6</i></div>
<div class="t kblack" style="left:1457px;top:406px"><i style="left:0px;transform:scaleX(1.037)">0</i><i style="left:9px;transform:scaleX(1.154)">.</i><i style="left:14px;transform:scaleX(1.037)">0</i><i style="left:23px;transform:scaleX(1.037)">0</i><i style="left:32px;transform:scaleX(1.037)">0</i><i style="left:41px;transform:scaleX(1.037)">1</i><i style="left:50px;transform:scaleX(1.037)">3</i><i style="left:59px;transform:scaleX(1.037)">4</i><i style="left:68px;transform:scaleX(1.037)">4</i><i style="left:77px;transform:scaleX(1.037)">4</i><i style="left:86px;transform:scaleX(1.037)">6</i></div>
<div class="t kgreen b" style="left:33px;top:430px"><i style="left:0px;transform:scaleX(0.961)">P</i><i style="left:10px;transform:scaleX(0.865)">S</i><i style="left:19px;transform:scaleX(0.865)">Y</i><i style="left:28px;transform:scaleX(0.888)">C</i><i style="left:37.87px">H</i><i style="left:49px;transform:scaleX(1.037)">6</i><i style="left:58px;transform:scaleX(1.037)">_</i><i style="left:67px;transform:scaleX(1.154)">I</i><i style="left:72px;transform:scaleX(0.888)">R</i><i style="left:82px;transform:scaleX(0.944)">T</i></div>
<div class="t kgreen b" style="left:246px;top:430px"><i style="left:-0.13px">A</i><i style="left:11px;transform:scaleX(1.049)">n</i><i style="left:21px;transform:scaleX(1.037)">x</i><i style="left:29.87px">D</i><i style="left:41px;transform:scaleX(1.037)">e</i><i style="left:50px;transform:scaleX(1.049)">p</i><i style="left:60px;transform:scaleX(1.037)">6</i><i style="left:69px;transform:scaleX(0.840)">F</i><i style="left:77px;transform:scaleX(0.923)">i</i><i style="left:81px;transform:scaleX(1.049)">n</i><i style="left:91px;transform:scaleX(1.037)">a</i><i style="left:100px;transform:scaleX(0.923)">l</i><i style="left:104px;transform:scaleX(1.037)">_</i><i style="left:113px;transform:scaleX(1.155)">t</i><i style="left:119px;transform:scaleX(1.049)">h</i><i style="left:129px;transform:scaleX(1.037)">e</i><i style="left:138px;transform:scaleX(1.155)">t</i><i style="left:144px;transform:scaleX(1.037)">a</i><i style="left:153px;transform:scaleX(1.037)">_</i><i style="left:162px;transform:scaleX(1.037)">1</i><i style="left:171px;transform:scaleX(1.037)">3</i></div>
<div class="t kgreen b" style="left:459px;top:430px"><i style="left:0px;transform:scaleX(1.037)">0</i><i style="left:9px;transform:scaleX(1.154)">.</i><i style="left:14px;transform:scaleX(1.037)">1</i><i style="left:23px;transform:scaleX(1.037)">5</i><i style="left:36px;transform:scaleX(1.155)">(</i><i style="left:46px;transform:scaleX(1.037)">0</i><i style="left:55px;transform:scaleX(1.154)">.</i><i style="left:60px;transform:scaleX(1.037)">0</i><i style="left:69px;transform:scaleX(1.037)">5</i><i style="left:82px;transform:scaleX(1.155)">-</i><i style="left:96px;transform:scaleX(1.037)">0</i><i style="left:105px;transform:scaleX(1.154)">.</i><i style="left:110px;transform:scaleX(1.037)">2</i><i style="left:119px;transform:scaleX(1.037)">4</i><i style="left:128px;transform:scaleX(1.155)">)</i></div>
<div class="t kgreen b" style="left:615px;top:430px"><i style="left:0px;transform:scaleX(1.037)">0</i><i style="left:9px;transform:scaleX(1.154)">.</i><i style="left:14px;transform:scaleX(1.037)">0</i><i style="left:23px;transform:scaleX(1.037)">0</i><i style="left:32px;transform:scaleX(1.037)">8</i><i style="left:41px;transform:scaleX(1.037)">4</i><i style="left:50px;transform:scaleX(1.037)">1</i><i style="left:59px;transform:scaleX(1.037)">2</i><i style="left:68px;transform:scaleX(1.037)">9</i><i style="left:77px;transform:scaleX(1.037)">7</i><i style="left:86px;transform:scaleX(1.037)">4</i></div>
<div class="t kgreen b" style="left:753px;top:430px"><i style="left:0px;transform:scaleX(1.037)">2</i><i style="left:9px;transform:scaleX(1.154)">.</i><i style="left:14px;transform:scaleX(1.037)">4</i><i style="left:23px;transform:scaleX(1.037)">7</i><i style="left:32px;transform:scaleX(0.865)">E</i><i style="left:41px;transform:scaleX(1.155)">-</i><i style="left:47px;transform:scaleX(1.037)">1</i><i style="left:56px;transform:scaleX(1.037)">2</i></div>
<div class="t kgreen b" style="left:825px;top:430px"><i style="left:0px;transform:scaleX(1.037)">0</i><i style="left:9px;transform:scaleX(1.154)">.</i><i style="left:14px;transform:scaleX(1.037)">4</i><i style="left:23px;transform:scaleX(1.037)">8</i><i style="left:36px;transform:scaleX(1.155)">(</i><i style="left:46px;transform:scaleX(1.037)">0</i><i style="left:55px;transform:scaleX(1.154)">.</i><i style="left:60px;transform:scaleX(1.037)">0</i><i style="left:69px;transform:scaleX(1.037)">5</i><i style="left:82px;transform:scaleX(1.155)">-</i><i style="left:96px;transform:scaleX(1.037)">0</i><i style="left:105px;transform:scaleX(1.154)">.</i><i style="left:110px;transform:scaleX(1.037)">9</i><i style="left:119px;transform:scaleX(1.037)">3</i><i style="left:128px;transform:scaleX(1.155)">)</i></div>
<div class="t kgreen b" style="left:983px;top:430px"><i style="left:0px;transform:scaleX(1.037)">0</i><i style="left:9px;transform:scaleX(1.154)">.</i><i style="left:14px;transform:scaleX(1.037)">0</i><i style="left:23px;transform:scaleX(1.037)">2</i><i style="left:32px;transform:scaleX(1.037)">7</i><i style="left:41px;transform:scaleX(1.037)">2</i><i style="left:50px;transform:scaleX(1.037)">1</i><i style="left:59px;transform:scaleX(1.037)">4</i><i style="left:68px;transform:scaleX(1.037)">3</i><i style="left:77px;transform:scaleX(1.037)">3</i><i style="left:86px;transform:scaleX(1.037)">3</i></div>
<div class="t kgreen b" style="left:1091px;top:430px"><i style="left:0px;transform:scaleX(1.037)">0</i><i style="left:9px;transform:scaleX(1.154)">.</i><i style="left:14px;transform:scaleX(1.037)">1</i><i style="left:23px;transform:scaleX(1.037)">8</i><i style="left:32px;transform:scaleX(1.037)">8</i><i style="left:41px;transform:scaleX(1.037)">1</i><i style="left:50px;transform:scaleX(1.037)">6</i><i style="left:59px;transform:scaleX(1.037)">8</i><i style="left:68px;transform:scaleX(1.037)">1</i><i style="left:77px;transform:scaleX(1.037)">8</i><i style="left:86px;transform:scaleX(1.037)">9</i></div>
<div class="t kgreen b" style="left:1193px;top:430px"><i style="left:0px;transform:scaleX(1.037)">0</i><i style="left:9px;transform:scaleX(1.154)">.</i><i style="left:14px;transform:scaleX(1.037)">0</i><i style="left:23px;transform:scaleX(1.037)">0</i><i style="left:36px;transform:scaleX(1.155)">(</i><i style="left:42px;transform:scaleX(1.155)">-</i><i style="left:48px;transform:scaleX(1.037)">0</i><i style="left:57px;transform:scaleX(1.154)">.</i><i style="left:62px;transform:scaleX(1.037)">1</i><i style="left:71px;transform:scaleX(1.037)">8</i><i style="left:84px;transform:scaleX(1.155)">-</i><i style="left:98px;transform:scaleX(1.037)">0</i><i style="left:107px;transform:scaleX(1.154)">.</i><i style="left:112px;transform:scaleX(1.037)">1</i><i style="left:121px;transform:scaleX(1.037)">9</i><i style="left:130px;transform:scaleX(1.155)">)</i></div>
<div class="t kgreen b" style="left:1349px;top:430px"><i style="left:0px;transform:scaleX(1.037)">0</i><i style="left:9px;transform:scaleX(1.154)">.</i><i style="left:14px;transform:scaleX(1.037)">9</i><i style="left:23px;transform:scaleX(1.037)">7</i><i style="left:32px;transform:scaleX(1.037)">1</i><i style="left:41px;transform:scaleX(1.037)">2</i><i style="left:50px;transform:scaleX(1.037)">9</i><i style="left:59px;transform:scaleX(1.037)">8</i><i style="left:68px;transform:scaleX(1.037)">1</i><i style="left:77px;transform:scaleX(1.037)">9</i><i style="left:86px;transform:scaleX(1.037)">8</i></div>
<div class="t kgreen b" style="left:1487px;top:430px"><i style="left:0px;transform:scaleX(1.037)">4</i><i style="left:9px;transform:scaleX(1.154)">.</i><i style="left:14px;transform:scaleX(1.037)">4</i><i style="left:23px;transform:scaleX(1.037)">9</i><i style="left:32px;transform:scaleX(0.865)">E</i><i style="left:41px;transform:scaleX(1.155)">-</i><i style="left:47px;transform:scaleX(1.037)">1</i><i style="left:56px;transform:scaleX(1.037)">3</i></div>
<div class="t kblack" style="left:33px;top:454px"><i style="left:0px;transform:scaleX(0.865)">P</i><i style="left:9px;transform:scaleX(0.769)">S</i><i style="left:17px;transform:scaleX(0.865)">Y</i><i style="left:26px;transform:scaleX(0.888)">C</i><i style="left:35.87px">H</i><i style="left:47px;transform:scaleX(1.037)">6</i><i style="left:56px;transform:scaleX(1.037)">_</i><i style="left:65px;transform:scaleX(1.154)">I</i><i style="left:70px;transform:scaleX(0.888)">R</i><i style="left:80px;transform:scaleX(0.944)">T</i></div>
<div class="t kblack" style="left:246px;top:454px"><i style="left:0px;transform:scaleX(0.961)">A</i><i style="left:10px;transform:scaleX(1.037)">n</i><i style="left:19.10px">x</i><i style="left:26.87px">D</i><i style="left:38px;transform:scaleX(1.037)">e</i><i style="left:47px;transform:scaleX(1.037)">p</i><i style="left:56px;transform:scaleX(1.037)">6</i><i style="left:65px;transform:scaleX(0.840)">F</i><i style="left:73px;transform:scaleX(1.154)">i</i><i style="left:77px;transform:scaleX(1.037)">n</i><i style="left:86px;transform:scaleX(1.037)">a</i><i style="left:95px;transform:scaleX(1.154)">l</i><i style="left:99px;transform:scaleX(1.037)">_</i><i style="left:108px;transform:scaleX(1.384)">t</i><i style="left:114px;transform:scaleX(1.037)">h</i><i style="left:123px;transform:scaleX(1.037)">e</i><i style="left:132px;transform:scaleX(1.384)">t</i><i style="left:138px;transform:scaleX(1.037)">a</i><i style="left:147px;transform:scaleX(1.037)">_</i><i style="left:156px;transform:scaleX(1.037)">1</i><i style="left:165px;transform:scaleX(1.037)">3</i><i style="left:174px;transform:scaleX(1.037)">_</i><i style="left:183px;transform:scaleX(1.037)">1</i><i style="left:192px;transform:scaleX(1.037)">5</i></div>
<div class="t kblack" style="left:459px;top:454px"><i style="left:0px;transform:scaleX(1.037)">0</i><i style="left:9px;transform:scaleX(1.154)">.</i><i style="left:14px;transform:scaleX(1.037)">1</i><i style="left:23px;transform:scaleX(1.037)">7</i><i style="left:36px;transform:scaleX(0.962)">(</i><i style="left:45px;transform:scaleX(1.037)">0</i><i style="left:54px;transform:scaleX(1.154)">.</i><i style="left:59px;transform:scaleX(1.037)">0</i><i style="left:68px;transform:scaleX(1.037)">8</i><i style="left:81px;transform:scaleX(1.155)">-</i><i style="left:95px;transform:scaleX(1.037)">0</i><i style="left:104px;transform:scaleX(1.154)">.</i><i style="left:109px;transform:scaleX(1.037)">2</i><i style="left:118px;transform:scaleX(1.037)">6</i><i style="left:127px;transform:scaleX(0.962)">)</i></div>
<div class="t kblack" style="left:624px;top:454px"><i style="left:0px;transform:scaleX(1.037)">0</i><i style="left:9px;transform:scaleX(1.154)">.</i><i style="left:14px;transform:scaleX(1.037)">0</i><i style="left:23px;transform:scaleX(1.037)">0</i><i style="left:32px;transform:scaleX(1.037)">0</i><i style="left:41px;transform:scaleX(1.037)">3</i><i style="left:50px;transform:scaleX(1.037)">2</i><i style="left:59px;transform:scaleX(1.037)">8</i><i style="left:68px;transform:scaleX(1.037)">1</i><i style="left:77px;transform:scaleX(1.037)">5</i></div>
<div class="t kblack" style="left:753px;top:454px"><i style="left:0px;transform:scaleX(1.037)">7</i><i style="left:9px;transform:scaleX(1.154)">.</i><i style="left:14px;transform:scaleX(1.037)">4</i><i style="left:23px;transform:scaleX(1.037)">6</i><i style="left:32px;transform:scaleX(0.865)">E</i><i style="left:41px;transform:scaleX(1.155)">-</i><i style="left:47px;transform:scaleX(1.037)">1</i><i style="left:56px;transform:scaleX(1.037)">5</i></div>
<div class="t kblack" style="left:825px;top:454px"><i style="left:0px;transform:scaleX(1.037)">0</i><i style="left:9px;transform:scaleX(1.154)">.</i><i style="left:14px;transform:scaleX(1.037)">6</i><i style="left:23px;transform:scaleX(1.037)">3</i><i style="left:36px;transform:scaleX(0.962)">(</i><i style="left:45px;transform:scaleX(1.037)">0</i><i style="left:54px;transform:scaleX(1.154)">.</i><i style="left:59px;transform:scaleX(1.037)">2</i><i style="left:68px;transform:scaleX(1.037)">1</i><i style="left:81px;transform:scaleX(1.155)">-</i><i style="left:95px;transform:scaleX(1.037)">1</i><i style="left:104px;transform:scaleX(1.154)">.</i><i style="left:109px;transform:scaleX(1.037)">0</i><i style="left:118px;transform:scaleX(1.037)">0</i><i style="left:127px;transform:scaleX(0.962)">)</i></div>
<div class="t kblack" style="left:983px;top:454px"><i style="left:0px;transform:scaleX(1.037)">0</i><i style="left:9px;transform:scaleX(1.154)">.</i><i style="left:14px;transform:scaleX(1.037)">0</i><i style="left:23px;transform:scaleX(1.037)">0</i><i style="left:32px;transform:scaleX(1.037)">3</i><i style="left:41px;transform:scaleX(1.037)">9</i><i style="left:50px;transform:scaleX(1.037)">4</i><i style="left:59px;transform:scaleX(1.037)">5</i><i style="left:68px;transform:scaleX(1.037)">0</i><i style="left:77px;transform:scaleX(1.037)">5</i><i style="left:86px;transform:scaleX(1.037)">4</i></div>
<div class="t kblack" style="left:1091px;top:454px"><i style="left:0px;transform:scaleX(1.037)">0</i><i style="left:9px;transform:scaleX(1.154)">.</i><i style="left:14px;transform:scaleX(1.037)">2</i><i style="left:23px;transform:scaleX(1.037)">4</i><i style="left:32px;transform:scaleX(1.037)">2</i><i style="left:41px;transform:scaleX(1.037)">8</i><i style="left:50px;transform:scaleX(1.037)">0</i><i style="left:59px;transform:scaleX(1.037)">3</i><i style="left:68px;transform:scaleX(1.037)">6</i><i style="left:77px;transform:scaleX(1.037)">6</i><i style="left:86px;transform:scaleX(1.037)">1</i></div>
<div class="t kblack" style="left:1193px;top:454px"><i style="left:0px;transform:scaleX(1.037)">0</i><i style="left:9px;transform:scaleX(1.154)">.</i><i style="left:14px;transform:scaleX(1.037)">0</i><i style="left:23px;transform:scaleX(1.037)">0</i><i style="left:36px;transform:scaleX(0.962)">(</i><i style="left:41px;transform:scaleX(1.155)">-</i><i style="left:47px;transform:scaleX(1.037)">0</i><i style="left:56px;transform:scaleX(1.154)">.</i><i style="left:61px;transform:scaleX(1.037)">1</i><i style="left:70px;transform:scaleX(1.037)">5</i><i style="left:83px;transform:scaleX(1.155)">-</i><i style="left:97px;transform:scaleX(1.037)">0</i><i style="left:106px;transform:scaleX(1.154)">.</i><i style="left:111px;transform:scaleX(1.037)">1</i><i style="left:120px;transform:scaleX(1.037)">6</i><i style="left:129px;transform:scaleX(0.962)">)</i></div>
<div class="t kblack" style="left:1349px;top:454px"><i style="left:0px;transform:scaleX(1.037)">0</i><i style="left:9px;transform:scaleX(1.154)">.</i><i style="left:14px;transform:scaleX(1.037)">9</i><i style="left:23px;transform:scaleX(1.037)">8</i><i style="left:32px;transform:scaleX(1.037)">3</i><i style="left:41px;transform:scaleX(1.037)">9</i><i style="left:50px;transform:scaleX(1.037)">9</i><i style="left:59px;transform:scaleX(1.037)">0</i><i style="left:68px;transform:scaleX(1.037)">7</i><i style="left:77px;transform:scaleX(1.037)">4</i><i style="left:86px;transform:scaleX(1.037)">9</i></div>
<div class="t kblack" style="left:1487px;top:454px"><i style="left:0px;transform:scaleX(1.037)">5</i><i style="left:9px;transform:scaleX(1.154)">.</i><i style="left:14px;transform:scaleX(1.037)">7</i><i style="left:23px;transform:scaleX(1.037)">5</i><i style="left:32px;transform:scaleX(0.865)">E</i><i style="left:41px;transform:scaleX(1.155)">-</i><i style="left:47px;transform:scaleX(1.037)">1</i><i style="left:56px;transform:scaleX(1.037)">5</i></div>
<div class="t kblack" style="left:33px;top:478px"><i style="left:0px;transform:scaleX(0.865)">P</i><i style="left:9px;transform:scaleX(0.769)">S</i><i style="left:17px;transform:scaleX(0.865)">Y</i><i style="left:26px;transform:scaleX(0.888)">C</i><i style="left:35.87px">H</i><i style="left:47px;transform:scaleX(1.037)">6</i><i style="left:56px;transform:scaleX(1.037)">_</i><i style="left:65px;transform:scaleX(1.154)">I</i><i style="left:70px;transform:scaleX(0.888)">R</i><i style="left:80px;transform:scaleX(0.944)">T</i></div>
<div class="t kblack" style="left:246px;top:478px"><i style="left:0px;transform:scaleX(0.961)">A</i><i style="left:10px;transform:scaleX(1.037)">n</i><i style="left:19.10px">x</i><i style="left:26.87px">D</i><i style="left:38px;transform:scaleX(1.037)">e</i><i style="left:47px;transform:scaleX(1.037)">p</i><i style="left:56px;transform:scaleX(1.037)">6</i><i style="left:65px;transform:scaleX(0.840)">F</i><i style="left:73px;transform:scaleX(1.154)">i</i><i style="left:77px;transform:scaleX(1.037)">n</i><i style="left:86px;transform:scaleX(1.037)">a</i><i style="left:95px;transform:scaleX(1.154)">l</i><i style="left:99px;transform:scaleX(1.037)">_</i><i style="left:108px;transform:scaleX(1.384)">t</i><i style="left:114px;transform:scaleX(1.037)">h</i><i style="left:123px;transform:scaleX(1.037)">e</i><i style="left:132px;transform:scaleX(1.384)">t</i><i style="left:138px;transform:scaleX(1.037)">a</i><i style="left:147px;transform:scaleX(1.037)">_</i><i style="left:156px;transform:scaleX(1.037)">1</i><i style="left:165px;transform:scaleX(1.037)">5</i><i style="left:174px;transform:scaleX(1.037)">_</i><i style="left:183px;transform:scaleX(1.037)">1</i><i style="left:192px;transform:scaleX(1.037)">7</i></div>
<div class="t kblack" style="left:459px;top:478px"><i style="left:0px;transform:scaleX(1.037)">0</i><i style="left:9px;transform:scaleX(1.154)">.</i><i style="left:14px;transform:scaleX(1.037)">2</i><i style="left:23px;transform:scaleX(1.037)">8</i><i style="left:36px;transform:scaleX(0.962)">(</i><i style="left:45px;transform:scaleX(1.037)">0</i><i style="left:54px;transform:scaleX(1.154)">.</i><i style="left:59px;transform:scaleX(1.037)">2</i><i style="left:68px;transform:scaleX(1.037)">0</i><i style="left:81px;transform:scaleX(1.155)">-</i><i style="left:95px;transform:scaleX(1.037)">0</i><i style="left:104px;transform:scaleX(1.154)">.</i><i style="left:109px;transform:scaleX(1.037)">3</i><i style="left:118px;transform:scaleX(1.037)">4</i><i style="left:127px;transform:scaleX(0.962)">)</i></div>
<div class="t kblack" style="left:645px;top:478px"><i style="left:0px;transform:scaleX(1.037)">1</i><i style="left:9px;transform:scaleX(1.154)">.</i><i style="left:14px;transform:scaleX(1.037)">2</i><i style="left:23px;transform:scaleX(1.037)">7</i><i style="left:32px;transform:scaleX(0.865)">E</i><i style="left:41px;transform:scaleX(1.155)">-</i><i style="left:47px;transform:scaleX(1.037)">1</i><i style="left:56px;transform:scaleX(1.037)">1</i></div>
<div class="t kblack" style="left:753px;top:478px"><i style="left:0px;transform:scaleX(1.037)">9</i><i style="left:9px;transform:scaleX(1.154)">.</i><i style="left:14px;transform:scaleX(1.037)">8</i><i style="left:23px;transform:scaleX(1.037)">0</i><i style="left:32px;transform:scaleX(0.865)">E</i><i style="left:41px;transform:scaleX(1.155)">-</i><i style="left:47px;transform:scaleX(1.037)">1</i><i style="left:56px;transform:scaleX(1.037)">2</i></div>
<div class="t kblack" style="left:825px;top:478px"><i style="left:0px;transform:scaleX(1.037)">0</i><i style="left:9px;transform:scaleX(1.154)">.</i><i style="left:14px;transform:scaleX(1.037)">6</i><i style="left:23px;transform:scaleX(1.037)">8</i><i style="left:36px;transform:scaleX(0.962)">(</i><i style="left:45px;transform:scaleX(1.037)">0</i><i style="left:54px;transform:scaleX(1.154)">.</i><i style="left:59px;transform:scaleX(1.037)">2</i><i style="left:68px;transform:scaleX(1.037)">6</i><i style="left:81px;transform:scaleX(1.155)">-</i><i style="left:95px;transform:scaleX(1.037)">1</i><i style="left:104px;transform:scaleX(1.154)">.</i><i style="left:109px;transform:scaleX(1.037)">0</i><i style="left:118px;transform:scaleX(1.037)">0</i><i style="left:127px;transform:scaleX(0.962)">)</i></div>
<div class="t kblack" style="left:983px;top:478px"><i style="left:0px;transform:scaleX(1.037)">0</i><i style="left:9px;transform:scaleX(1.154)">.</i><i style="left:14px;transform:scaleX(1.037)">0</i><i style="left:23px;transform:scaleX(1.037)">0</i><i style="left:32px;transform:scaleX(1.037)">2</i><i style="left:41px;transform:scaleX(1.037)">2</i><i style="left:50px;transform:scaleX(1.037)">2</i><i style="left:59px;transform:scaleX(1.037)">2</i><i style="left:68px;transform:scaleX(1.037)">1</i><i style="left:77px;transform:scaleX(1.037)">3</i><i style="left:86px;transform:scaleX(1.037)">2</i></div>
<div class="t kblack" style="left:1091px;top:478px"><i style="left:0px;transform:scaleX(1.037)">0</i><i style="left:9px;transform:scaleX(1.154)">.</i><i style="left:14px;transform:scaleX(1.037)">1</i><i style="left:23px;transform:scaleX(1.037)">5</i><i style="left:32px;transform:scaleX(1.037)">1</i><i style="left:41px;transform:scaleX(1.037)">4</i><i style="left:50px;transform:scaleX(1.037)">6</i><i style="left:59px;transform:scaleX(1.037)">9</i><i style="left:68px;transform:scaleX(1.037)">2</i><i style="left:77px;transform:scaleX(1.037)">2</i><i style="left:86px;transform:scaleX(1.037)">7</i></div>
<div class="t kblack" style="left:1193px;top:478px"><i style="left:0px;transform:scaleX(1.037)">0</i><i style="left:9px;transform:scaleX(1.154)">.</i><i style="left:14px;transform:scaleX(1.037)">1</i><i style="left:23px;transform:scaleX(1.037)">5</i><i style="left:36px;transform:scaleX(0.962)">(</i><i style="left:45px;transform:scaleX(1.037)">0</i><i style="left:54px;transform:scaleX(1.154)">.</i><i style="left:59px;transform:scaleX(1.037)">0</i><i style="left:68px;transform:scaleX(1.037)">1</i><i style="left:81px;transform:scaleX(1.155)">-</i><i style="left:95px;transform:scaleX(1.037)">0</i><i style="left:104px;transform:scaleX(1.154)">.</i><i style="left:109px;transform:scaleX(1.037)">2</i><i style="left:118px;transform:scaleX(1.037)">9</i><i style="left:127px;transform:scaleX(0.962)">)</i></div>
<div class="t kblack" style="left:1349px;top:478px"><i style="left:0px;transform:scaleX(1.037)">0</i><i style="left:9px;transform:scaleX(1.154)">.</i><i style="left:14px;transform:scaleX(1.037)">0</i><i style="left:23px;transform:scaleX(1.037)">3</i><i style="left:32px;transform:scaleX(1.037)">6</i><i style="left:41px;transform:scaleX(1.037)">3</i><i style="left:50px;transform:scaleX(1.037)">3</i><i style="left:59px;transform:scaleX(1.037)">1</i><i style="left:68px;transform:scaleX(1.037)">4</i><i style="left:77px;transform:scaleX(1.037)">0</i><i style="left:86px;transform:scaleX(1.037)">5</i></div>
<div class="t kblack" style="left:1487px;top:478px"><i style="left:0px;transform:scaleX(1.037)">1</i><i style="left:9px;transform:scaleX(1.154)">.</i><i style="left:14px;transform:scaleX(1.037)">9</i><i style="left:23px;transform:scaleX(1.037)">6</i><i style="left:32px;transform:scaleX(0.865)">E</i><i style="left:41px;transform:scaleX(1.155)">-</i><i style="left:47px;transform:scaleX(1.037)">0</i><i style="left:56px;transform:scaleX(1.037)">9</i></div>
<div class="t kblack" style="left:33px;top:502px"><i style="left:0px;transform:scaleX(0.865)">P</i><i style="left:9px;transform:scaleX(0.769)">S</i><i style="left:17px;transform:scaleX(0.865)">Y</i><i style="left:26px;transform:scaleX(0.888)">C</i><i style="left:35.87px">H</i><i style="left:47px;transform:scaleX(1.037)">6</i><i style="left:56px;transform:scaleX(1.037)">_</i><i style="left:65px;transform:scaleX(1.154)">I</i><i style="left:70px;transform:scaleX(0.888)">R</i><i style="left:80px;transform:scaleX(0.944)">T</i></div>
<div class="t kblack" style="left:246px;top:502px"><i style="left:0px;transform:scaleX(0.961)">A</i><i style="left:10px;transform:scaleX(1.037)">n</i><i style="left:19.10px">x</i><i style="left:26.87px">D</i><i style="left:38px;transform:scaleX(1.037)">e</i><i style="left:47px;transform:scaleX(1.037)">p</i><i style="left:56px;transform:scaleX(1.037)">6</i><i style="left:65px;transform:scaleX(0.840)">F</i><i style="left:73px;transform:scaleX(1.154)">i</i><i style="left:77px;transform:scaleX(1.037)">n</i><i style="left:86px;transform:scaleX(1.037)">a</i><i style="left:95px;transform:scaleX(1.154)">l</i><i style="left:99px;transform:scaleX(1.037)">_</i><i style="left:108px;transform:scaleX(1.384)">t</i><i style="left:114px;transform:scaleX(1.037)">h</i><i style="left:123px;transform:scaleX(1.037)">e</i><i style="left:132px;transform:scaleX(1.384)">t</i><i style="left:138px;transform:scaleX(1.037)">a</i><i style="left:147px;transform:scaleX(1.037)">_</i><i style="left:156px;transform:scaleX(1.037)">1</i><i style="left:165px;transform:scaleX(1.037)">7</i></div>
<div class="t kblack" style="left:459px;top:502px"><i style="left:0px;transform:scaleX(1.037)">0</i><i style="left:9px;transform:scaleX(1.154)">.</i><i style="left:14px;transform:scaleX(1.037)">3</i><i style="left:23px;transform:scaleX(1.037)">5</i><i style="left:36px;transform:scaleX(0.962)">(</i><i style="left:45px;transform:scaleX(1.037)">0</i><i style="left:54px;transform:scaleX(1.154)">.</i><i style="left:59px;transform:scaleX(1.037)">2</i><i style="left:68px;transform:scaleX(1.037)">5</i><i style="left:81px;transform:scaleX(1.155)">-</i><i style="left:95px;transform:scaleX(1.037)">0</i><i style="left:104px;transform:scaleX(1.154)">.</i><i style="left:109px;transform:scaleX(1.037)">4</i><i style="left:118px;transform:scaleX(1.037)">3</i><i style="left:127px;transform:scaleX(0.962)">)</i></div>
<div class="t kblack" style="left:645px;top:502px"><i style="left:0px;transform:scaleX(1.037)">4</i><i style="left:9px;transform:scaleX(1.154)">.</i><i style="left:14px;transform:scaleX(1.037)">8</i><i style="left:23px;transform:scaleX(1.037)">1</i><i style="left:32px;transform:scaleX(0.865)">E</i><i style="left:41px;transform:scaleX(1.155)">-</i><i style="left:47px;transform:scaleX(1.037)">1</i><i style="left:56px;transform:scaleX(1.037)">1</i></div>
<div class="t kblack" style="left:753px;top:502px"><i style="left:0px;transform:scaleX(1.037)">1</i><i style="left:9px;transform:scaleX(1.154)">.</i><i style="left:14px;transform:scaleX(1.037)">7</i><i style="left:23px;transform:scaleX(1.037)">1</i><i style="left:32px;transform:scaleX(0.865)">E</i><i style="left:41px;transform:scaleX(1.155)">-</i><i style="left:47px;transform:scaleX(1.037)">0</i><i style="left:56px;transform:scaleX(1.037)">7</i></div>
<div class="t kblack" style="left:825px;top:502px"><i style="left:0px;transform:scaleX(1.037)">0</i><i style="left:9px;transform:scaleX(1.154)">.</i><i style="left:14px;transform:scaleX(1.037)">6</i><i style="left:23px;transform:scaleX(1.037)">9</i><i style="left:36px;transform:scaleX(0.962)">(</i><i style="left:45px;transform:scaleX(1.037)">0</i><i style="left:54px;transform:scaleX(1.154)">.</i><i style="left:59px;transform:scaleX(1.037)">2</i><i style="left:68px;transform:scaleX(1.037)">4</i><i style="left:81px;transform:scaleX(1.155)">-</i><i style="left:95px;transform:scaleX(1.037)">1</i><i style="left:104px;transform:scaleX(1.154)">.</i><i style="left:109px;transform:scaleX(1.037)">0</i><i style="left:118px;transform:scaleX(1.037)">0</i><i style="left:127px;transform:scaleX(0.962)">)</i></div>
<div class="t kblack" style="left:983px;top:502px"><i style="left:0px;transform:scaleX(1.037)">0</i><i style="left:9px;transform:scaleX(1.154)">.</i><i style="left:14px;transform:scaleX(1.037)">0</i><i style="left:23px;transform:scaleX(1.037)">0</i><i style="left:32px;transform:scaleX(1.037)">3</i><i style="left:41px;transform:scaleX(1.037)">9</i><i style="left:50px;transform:scaleX(1.037)">4</i><i style="left:59px;transform:scaleX(1.037)">6</i><i style="left:68px;transform:scaleX(1.037)">8</i><i style="left:77px;transform:scaleX(1.037)">2</i><i style="left:86px;transform:scaleX(1.037)">2</i></div>
<div class="t kblack" style="left:1091px;top:502px"><i style="left:0px;transform:scaleX(1.037)">0</i><i style="left:9px;transform:scaleX(1.154)">.</i><i style="left:14px;transform:scaleX(1.037)">5</i><i style="left:23px;transform:scaleX(1.037)">2</i><i style="left:32px;transform:scaleX(1.037)">5</i><i style="left:41px;transform:scaleX(1.037)">4</i><i style="left:50px;transform:scaleX(1.037)">3</i><i style="left:59px;transform:scaleX(1.037)">7</i><i style="left:68px;transform:scaleX(1.037)">1</i><i style="left:77px;transform:scaleX(1.037)">9</i><i style="left:86px;transform:scaleX(1.037)">5</i></div>
<div class="t kblack" style="left:1193px;top:502px"><i style="left:0px;transform:scaleX(1.037)">0</i><i style="left:9px;transform:scaleX(1.154)">.</i><i style="left:14px;transform:scaleX(1.037)">2</i><i style="left:23px;transform:scaleX(1.037)">1</i><i style="left:36px;transform:scaleX(0.962)">(</i><i style="left:45px;transform:scaleX(1.037)">0</i><i style="left:54px;transform:scaleX(1.154)">.</i><i style="left:59px;transform:scaleX(1.037)">0</i><i style="left:68px;transform:scaleX(1.037)">2</i><i style="left:81px;transform:scaleX(1.155)">-</i><i style="left:95px;transform:scaleX(1.037)">0</i><i style="left:104px;transform:scaleX(1.154)">.</i><i style="left:109px;transform:scaleX(1.037)">3</i><i style="left:118px;transform:scaleX(1.037)">8</i><i style="left:127px;transform:scaleX(0.962)">)</i></div>
<div class="t kblack" style="left:1349px;top:502px"><i style="left:0px;transform:scaleX(1.037)">0</i><i style="left:9px;transform:scaleX(1.154)">.</i><i style="left:14px;transform:scaleX(1.037)">0</i><i style="left:23px;transform:scaleX(1.037)">2</i><i style="left:32px;transform:scaleX(1.037)">7</i><i style="left:41px;transform:scaleX(1.037)">7</i><i style="left:50px;transform:scaleX(1.037)">6</i><i style="left:59px;transform:scaleX(1.037)">6</i><i style="left:68px;transform:scaleX(1.037)">9</i><i style="left:77px;transform:scaleX(1.037)">4</i><i style="left:86px;transform:scaleX(1.037)">6</i></div>
<div class="t kblack" style="left:1487px;top:502px"><i style="left:0px;transform:scaleX(1.037)">5</i><i style="left:9px;transform:scaleX(1.154)">.</i><i style="left:14px;transform:scaleX(1.037)">1</i><i style="left:23px;transform:scaleX(1.037)">2</i><i style="left:32px;transform:scaleX(0.865)">E</i><i style="left:41px;transform:scaleX(1.155)">-</i><i style="left:47px;transform:scaleX(1.037)">0</i><i style="left:56px;transform:scaleX(1.037)">6</i></div>
<div class="a" style="left:28px;top:20px;width:216px;height:2px;background:#217346"></div>
<div class="a" style="left:28px;top:45px;width:211px;height:2px;background:#217346"></div>
<div class="a" style="left:28px;top:20px;width:2px;height:27px;background:#217346"></div>
<div class="a" style="left:242px;top:20px;width:2px;height:22px;background:#217346"></div>
<div class="a" style="left:239px;top:42px;width:6px;height:6px;background:#fff"></div>
<div class="a" style="left:240px;top:43px;width:5px;height:5px;background:#217346"></div>
</body></html>
